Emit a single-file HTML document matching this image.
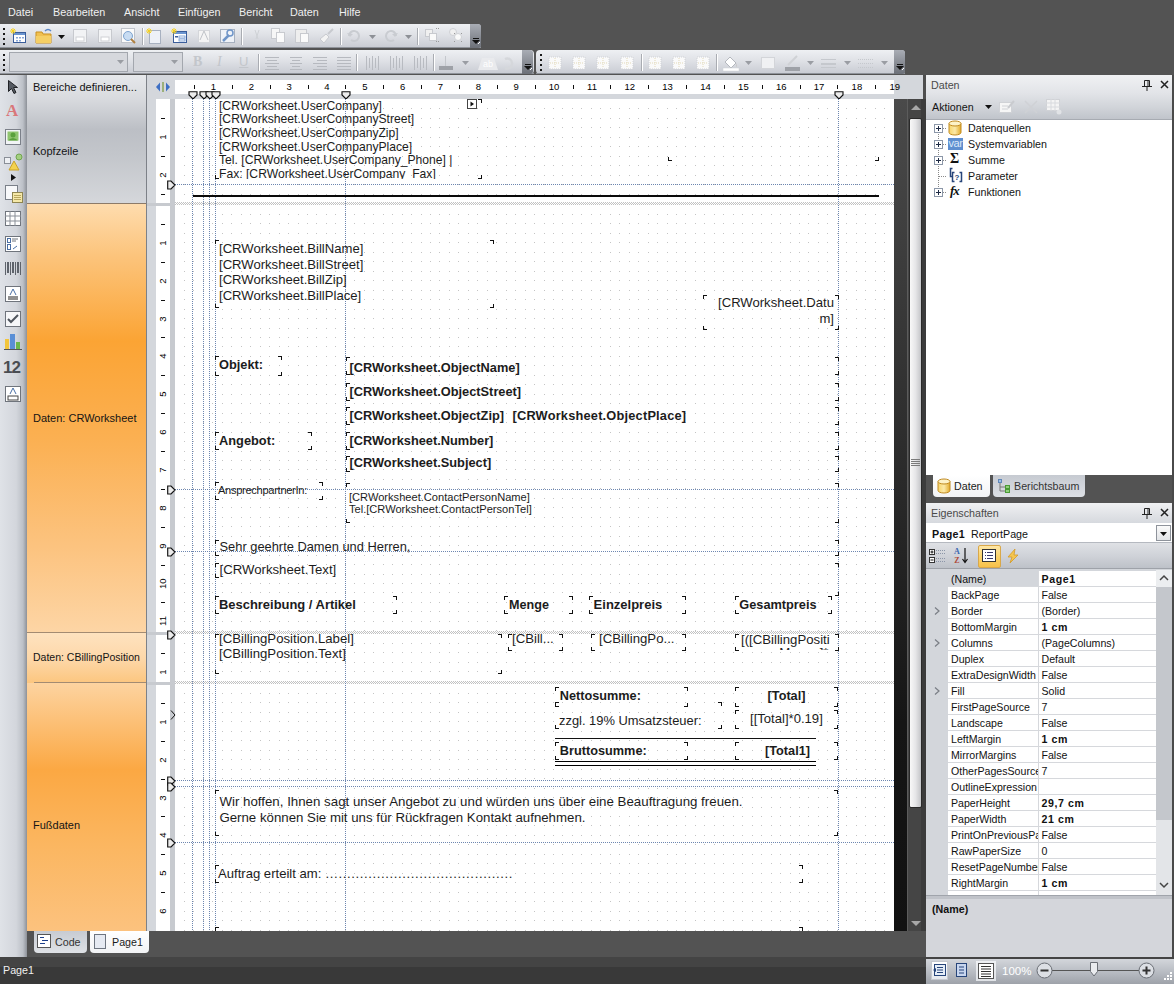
<!DOCTYPE html>
<html><head><meta charset="utf-8">
<style>
*{margin:0;padding:0;box-sizing:border-box}
html,body{width:1174px;height:984px;overflow:hidden;background:#535353;font-family:"Liberation Sans",sans-serif;font-size:12px;color:#000}
.a{position:absolute}
.t{position:absolute;white-space:nowrap}
.tb{background:linear-gradient(#f0f1f4,#e1e3e7 40%,#d3d6dc 70%,#c4c7ce);border-bottom:1px solid #8e9298}
.vg{position:absolute;width:1px;background:repeating-linear-gradient(#6d86b0 0 1px,transparent 1px 2px)}
.hg{position:absolute;height:1px;background:repeating-linear-gradient(90deg,#6d86b0 0 1px,transparent 1px 2px)}
.sep{position:absolute;height:3px;background-image:repeating-linear-gradient(90deg,#bdbdbd 0 1px,#fff 1px 2px);}
.cm{position:absolute;width:4px;height:4px;border-color:#111;border-style:solid;border-width:0}
.grid{background-color:#fff;background-image:radial-gradient(circle at 0.5px 0.5px,#c6c6c6 0.7px,transparent 0.8px)}
svg{position:absolute;overflow:visible}
</style></head><body>

<div class="a" style="left:0px;top:0px;width:1174px;height:24px;background:#535353"></div>
<div class="t" style="left:8px;top:2px;height:20px;line-height:20px;font-size:10.8px;color:#f0f0f0;">Datei</div>
<div class="t" style="left:53px;top:2px;height:20px;line-height:20px;font-size:10.8px;color:#f0f0f0;">Bearbeiten</div>
<div class="t" style="left:124px;top:2px;height:20px;line-height:20px;font-size:10.8px;color:#f0f0f0;">Ansicht</div>
<div class="t" style="left:178px;top:2px;height:20px;line-height:20px;font-size:10.8px;color:#f0f0f0;">Einfügen</div>
<div class="t" style="left:239px;top:2px;height:20px;line-height:20px;font-size:10.8px;color:#f0f0f0;">Bericht</div>
<div class="t" style="left:290px;top:2px;height:20px;line-height:20px;font-size:10.8px;color:#f0f0f0;">Daten</div>
<div class="t" style="left:339px;top:2px;height:20px;line-height:20px;font-size:10.8px;color:#f0f0f0;">Hilfe</div>
<div class="a" style="left:0px;top:24px;width:481px;height:24px;background:linear-gradient(#eef0f3,#dfe1e6 45%,#c8cbd2);border-radius:0 4px 4px 0"></div>
<div class="a" style="left:0px;top:47px;width:481px;height:1px;background:#8f939a"></div>
<div class="a" style="left:3px;top:28px;width:2px;height:2px;background:#1a1a1a"></div>
<div class="a" style="left:3px;top:33px;width:2px;height:2px;background:#1a1a1a"></div>
<div class="a" style="left:3px;top:38px;width:2px;height:2px;background:#1a1a1a"></div>
<div class="a" style="left:3px;top:43px;width:2px;height:2px;background:#1a1a1a"></div>
<div class="a" style="left:470px;top:24px;width:11px;height:24px;background:linear-gradient(#a9adb5,#6c7078);border-radius:0 3px 3px 0"></div>
<svg style="left:472px;top:38px" width="8" height="7"><rect x="1" y="0" width="6" height="1" fill="#111"/><path d="M0 2h8l-4 4z" fill="#111"/><path d="M6 6l2-2" stroke="#fff" stroke-width="1"/></svg>
<svg style="left:10px;top:28px" width="18" height="16"><rect x="3.5" y="4.5" width="12" height="10" fill="#fff" stroke="#3a5d9a"/><rect x="4" y="5" width="11" height="2" fill="#6b95d0"/><g fill="#8aa8d8"><rect x="6" y="9" width="2" height="1.5"/><rect x="9" y="9" width="2" height="1.5"/><rect x="12" y="9" width="2" height="1.5"/><rect x="6" y="12" width="2" height="1.5"/><rect x="9" y="12" width="2" height="1.5"/></g><path d="M3 0v6M0 3h6M1 1l4 4M5 1l-4 4" stroke="#f4d020" stroke-width="1"/></svg>
<svg style="left:35px;top:28px" width="18" height="16"><path d="M1 4h6l1 2h8v9H1z" fill="#f0c050" stroke="#c99020"/><path d="M1 8h15v7H1z" fill="#f5cf65"/><path d="M10 3q3-3 6 0" stroke="#5a86c5" fill="none" stroke-width="1.5"/></svg>
<svg style="left:58px;top:35px" width="7" height="4"><path d="M0 0h7l-3.5 4z" fill="#111"/></svg>
<svg style="left:72px;top:28px" width="16" height="16"><rect x="1.5" y="1.5" width="13" height="13" fill="#f2f3f5" stroke="#c7c9ce"/><rect x="4" y="9" width="8" height="4" fill="#fff" stroke="#cfd1d5"/></svg>
<svg style="left:97px;top:28px" width="16" height="16"><rect x="1.5" y="1.5" width="13" height="13" fill="#f2f3f5" stroke="#c7c9ce"/><rect x="4" y="9" width="8" height="4" fill="#fff" stroke="#cfd1d5"/></svg>
<svg style="left:120px;top:28px" width="18" height="17"><rect x="1.5" y="0.5" width="13" height="14" fill="#fafafa" stroke="#bfc3ca"/><circle cx="8" cy="8" r="4.5" fill="#c8dcf2" stroke="#7ea3cf"/><path d="M11 11l4 4" stroke="#b08040" stroke-width="2"/></svg>
<div class="a" style="left:142px;top:28px;width:1px;height:17px;background:#fff;border-left:1px solid #a9acb2;width:2px"></div>
<svg style="left:146px;top:28px" width="17" height="16"><rect x="3.5" y="2.5" width="11" height="13" fill="#eef1f7" stroke="#a8b1c0"/><path d="M3 0v6M0 3h6M1 1l4 4M5 1l-4 4" stroke="#f4d020" stroke-width="1"/></svg>
<svg style="left:171px;top:28px" width="17" height="16"><rect x="2.5" y="3.5" width="13" height="11" fill="#fff" stroke="#3a5d9a"/><rect x="3" y="4" width="12" height="2" fill="#6b95d0"/><rect x="8" y="8" width="6" height="2" fill="#fff" stroke="#6b95d0" stroke-width=".8"/><rect x="8" y="11" width="6" height="2" fill="#fff" stroke="#6b95d0" stroke-width=".8"/><rect x="4" y="8" width="3" height="1.5" fill="#3a5d9a"/><path d="M3 0v6M0 3h6M1 1l4 4M5 1l-4 4" stroke="#f4d020" stroke-width="1"/></svg>
<svg style="left:196px;top:28px" width="16" height="16"><rect x="2.5" y="2.5" width="11" height="12" fill="#f4f4f4" stroke="#d4d6da"/><path d="M4 12l4-9 4 9" stroke="#c0c3c8" fill="none"/></svg>
<svg style="left:219px;top:28px" width="17" height="16"><rect x="1.5" y="1.5" width="14" height="13" fill="#eef2f8" stroke="#a6b0bf"/><path d="M4 13l6-6" stroke="#6f95c8" stroke-width="2.5"/><circle cx="11" cy="5" r="3" fill="none" stroke="#6f95c8" stroke-width="1.5"/></svg>
<div class="a" style="left:241px;top:28px;width:2px;height:17px;background:#fff;border-left:1px solid #a9acb2"></div>
<svg style="left:250px;top:28px" width="14" height="16"><path d="M5 2l3 9M9 2l-3 9" stroke="#cfd2d6" stroke-width="1"/></svg>
<svg style="left:270px;top:27px" width="17" height="17"><rect x="1.5" y="1.5" width="8" height="10" fill="#f6f6f6" stroke="#c8cacf"/><rect x="6.5" y="5.5" width="8" height="10" fill="#fbfbfb" stroke="#c8cacf"/></svg>
<svg style="left:294px;top:27px" width="17" height="17"><rect x="1.5" y="2.5" width="11" height="13" fill="#eeeeee" stroke="#c8cacf"/><rect x="6.5" y="6.5" width="8" height="9" fill="#fbfbfb" stroke="#c8cacf"/></svg>
<svg style="left:318px;top:27px" width="17" height="17"><path d="M2 12l6-5 3 3-5 6z" fill="#f3f3f3" stroke="#c8cacf"/><path d="M10 7l5-5" stroke="#c8cacf" stroke-width="2"/></svg>
<div class="a" style="left:340px;top:28px;width:2px;height:17px;background:#fff;border-left:1px solid #a9acb2"></div>
<svg style="left:346px;top:28px" width="16" height="16"><path d="M3 8a5 5 0 1 1 2 4" stroke="#c9ccd1" stroke-width="2" fill="none"/><path d="M1 5l3 4 3-3z" fill="#c9ccd1"/></svg>
<svg style="left:369px;top:35px" width="7" height="4"><path d="M0 0h7l-3.5 4z" fill="#8d9096"/></svg>
<svg style="left:383px;top:28px" width="16" height="16"><path d="M13 8a5 5 0 1 0-2 4" stroke="#c9ccd1" stroke-width="2" fill="none"/><path d="M15 5l-3 4-3-3z" fill="#c9ccd1"/></svg>
<svg style="left:405px;top:35px" width="7" height="4"><path d="M0 0h7l-3.5 4z" fill="#8d9096"/></svg>
<div class="a" style="left:417px;top:28px;width:2px;height:17px;background:#fff;border-left:1px solid #a9acb2"></div>
<svg style="left:424px;top:27px" width="16" height="17"><rect x="1.5" y="2.5" width="7" height="7" fill="#f0f0f0" stroke="#c8cacf"/><rect x="5.5" y="6.5" width="7" height="7" fill="#fafafa" stroke="#c8cacf"/><g fill="#999"><rect x="12" y="1" width="1" height="1"/><rect x="14" y="1" width="1" height="1"/><rect x="12" y="14" width="1" height="1"/><rect x="14" y="14" width="1" height="1"/></g></svg>
<svg style="left:448px;top:27px" width="16" height="17"><circle cx="5" cy="5" r="3.5" fill="#f0f0f0" stroke="#cfd1d5"/><circle cx="10" cy="10" r="3.5" fill="#fafafa" stroke="#cfd1d5"/><g fill="#999"><rect x="6" y="6" width="1" height="1"/><rect x="13" y="6" width="1" height="1"/><rect x="6" y="14" width="1" height="1"/><rect x="13" y="14" width="1" height="1"/></g></svg>
<div class="a" style="left:0px;top:50px;width:534px;height:24px;background:linear-gradient(#eef0f3,#dfe1e6 45%,#c8cbd2);border-radius:0 4px 4px 0"></div>
<div class="a" style="left:0px;top:73px;width:534px;height:1px;background:#8f939a"></div>
<div class="a" style="left:3px;top:54px;width:2px;height:2px;background:#1a1a1a"></div>
<div class="a" style="left:3px;top:59px;width:2px;height:2px;background:#1a1a1a"></div>
<div class="a" style="left:3px;top:64px;width:2px;height:2px;background:#1a1a1a"></div>
<div class="a" style="left:3px;top:69px;width:2px;height:2px;background:#1a1a1a"></div>
<div class="a" style="left:522px;top:50px;width:11px;height:24px;background:linear-gradient(#a9adb5,#6c7078);border-radius:0 3px 3px 0"></div>
<svg style="left:524px;top:64px" width="8" height="7"><rect x="1" y="0" width="6" height="1" fill="#111"/><path d="M0 2h8l-4 4z" fill="#111"/><path d="M6 6l2-2" stroke="#fff" stroke-width="1"/></svg>
<div class="a" style="left:9px;top:52px;width:119px;height:20px;background:#d6d8dd;border:1px solid #a3a7ae"></div>
<svg style="left:117px;top:60px" width="7" height="4"><path d="M0 0h7l-3.5 4z" fill="#9a9da3"/></svg>
<div class="a" style="left:133px;top:52px;width:50px;height:20px;background:#d6d8dd;border:1px solid #a3a7ae"></div>
<svg style="left:171px;top:60px" width="7" height="4"><path d="M0 0h7l-3.5 4z" fill="#9a9da3"/></svg>
<div class="t" style="left:193px;top:53px;font-size:14px;color:#c3c6cb;font-weight:bold;font-family:Liberation Serif,serif;line-height:18px">B</div>
<div class="t" style="left:217px;top:53px;font-size:14px;color:#c3c6cb;font-family:Liberation Serif,serif;font-style:italic;line-height:18px">I</div>
<div class="t" style="left:239px;top:53px;font-size:13px;color:#c3c6cb;text-decoration:underline;line-height:18px">U</div>
<div class="a" style="left:258px;top:54px;width:2px;height:17px;background:#fff;border-left:1px solid #a9acb2"></div>
<svg style="left:264px;top:55px" width="16" height="16"><rect x="1" y="2" width="14" height="1" fill="#b6b9bf"/><rect x="3" y="5" width="10" height="1" fill="#b6b9bf"/><rect x="1" y="8" width="14" height="1" fill="#b6b9bf"/><rect x="3" y="11" width="10" height="1" fill="#b6b9bf"/><rect x="1" y="14" width="14" height="1" fill="#b6b9bf"/></svg>
<svg style="left:288px;top:55px" width="16" height="16"><rect x="2" y="2" width="12" height="1" fill="#b6b9bf"/><rect x="4" y="5" width="8" height="1" fill="#b6b9bf"/><rect x="2" y="8" width="12" height="1" fill="#b6b9bf"/><rect x="4" y="11" width="8" height="1" fill="#b6b9bf"/><rect x="2" y="14" width="12" height="1" fill="#b6b9bf"/></svg>
<svg style="left:312px;top:55px" width="16" height="16"><rect x="1" y="2" width="14" height="1" fill="#b6b9bf"/><rect x="5" y="5" width="10" height="1" fill="#b6b9bf"/><rect x="1" y="8" width="14" height="1" fill="#b6b9bf"/><rect x="5" y="11" width="10" height="1" fill="#b6b9bf"/><rect x="1" y="14" width="14" height="1" fill="#b6b9bf"/></svg>
<svg style="left:336px;top:55px" width="16" height="16"><rect x="1" y="2" width="14" height="1" fill="#b6b9bf"/><rect x="1" y="5" width="14" height="1" fill="#b6b9bf"/><rect x="1" y="8" width="14" height="1" fill="#b6b9bf"/><rect x="1" y="11" width="14" height="1" fill="#b6b9bf"/><rect x="1" y="14" width="14" height="1" fill="#b6b9bf"/></svg>
<div class="a" style="left:356px;top:54px;width:2px;height:17px;background:#fff;border-left:1px solid #a9acb2"></div>
<svg style="left:364px;top:55px" width="16" height="16"><g fill="#b8bbc1"><rect x="2" y="1" width="1" height="14"/><rect x="5" y="3" width="1" height="10"/><rect x="8" y="1" width="1" height="14"/><rect x="11" y="3" width="1" height="10"/><rect x="14" y="1" width="1" height="14"/></g></svg>
<svg style="left:388px;top:55px" width="16" height="16"><g fill="#b8bbc1"><rect x="2" y="1" width="1" height="14"/><rect x="5" y="3" width="1" height="10"/><rect x="8" y="1" width="1" height="14"/><rect x="11" y="3" width="1" height="10"/><rect x="14" y="1" width="1" height="14"/></g></svg>
<svg style="left:412px;top:55px" width="16" height="16"><g fill="#b8bbc1"><rect x="2" y="1" width="1" height="14"/><rect x="5" y="3" width="1" height="10"/><rect x="8" y="1" width="1" height="14"/><rect x="11" y="3" width="1" height="10"/><rect x="14" y="1" width="1" height="14"/></g></svg>
<div class="a" style="left:433px;top:54px;width:2px;height:17px;background:#fff;border-left:1px solid #a9acb2"></div>
<svg style="left:438px;top:55px" width="18" height="16"><rect x="7" y="1" width="1" height="10" fill="#c4c7cc"/><rect x="1" y="11" width="14" height="4" fill="#9ea1a7"/></svg>
<svg style="left:462px;top:61px" width="7" height="4"><path d="M0 0h7l-3.5 4z" fill="#9a9da3"/></svg>
<svg style="left:478px;top:55px" width="20" height="16"><path d="M0 15l4-12h12l4 12z" fill="#e9eaed"/><text x="10" y="12" font-size="9" text-anchor="middle" fill="#fff" font-family="Liberation Sans">ab</text></svg>
<svg style="left:500px;top:55px" width="16" height="16"><path d="M5 4a5 5 0 1 1 0 9" stroke="#d5d7db" stroke-width="2.5" fill="none"/></svg>
<div class="a" style="left:536px;top:50px;width:369px;height:24px;background:linear-gradient(#eef0f3,#dfe1e6 45%,#c8cbd2);border-radius:4px"></div>
<div class="a" style="left:536px;top:73px;width:369px;height:1px;background:#8f939a"></div>
<div class="a" style="left:540px;top:54px;width:2px;height:2px;background:#1a1a1a"></div>
<div class="a" style="left:540px;top:59px;width:2px;height:2px;background:#1a1a1a"></div>
<div class="a" style="left:540px;top:64px;width:2px;height:2px;background:#1a1a1a"></div>
<div class="a" style="left:540px;top:69px;width:2px;height:2px;background:#1a1a1a"></div>
<div class="a" style="left:894px;top:50px;width:11px;height:24px;background:linear-gradient(#a9adb5,#6c7078);border-radius:0 3px 3px 0"></div>
<svg style="left:896px;top:64px" width="8" height="7"><rect x="1" y="0" width="6" height="1" fill="#111"/><path d="M0 2h8l-4 4z" fill="#111"/><path d="M6 6l2-2" stroke="#fff" stroke-width="1"/></svg>
<svg style="left:547px;top:55px" width="16" height="16"><rect x="2" y="2" width="12" height="12" fill="#fafafa" stroke="#d0d2d6" stroke-dasharray="1 1"/><path d="M8 3v10M3 8h10" stroke="#e2d9b8" stroke-dasharray="1 1"/></svg>
<svg style="left:571px;top:55px" width="16" height="16"><rect x="2" y="2" width="12" height="12" fill="#fafafa" stroke="#d0d2d6" stroke-dasharray="1 1"/><path d="M8 3v10M3 8h10" stroke="#e2d9b8" stroke-dasharray="1 1"/></svg>
<svg style="left:595px;top:55px" width="16" height="16"><rect x="2" y="2" width="12" height="12" fill="#fafafa" stroke="#d0d2d6" stroke-dasharray="1 1"/><path d="M8 3v10M3 8h10" stroke="#e2d9b8" stroke-dasharray="1 1"/></svg>
<svg style="left:619px;top:55px" width="16" height="16"><rect x="2" y="2" width="12" height="12" fill="#fafafa" stroke="#d0d2d6" stroke-dasharray="1 1"/><path d="M8 3v10M3 8h10" stroke="#e2d9b8" stroke-dasharray="1 1"/></svg>
<div class="a" style="left:641px;top:54px;width:2px;height:17px;background:#fff;border-left:1px solid #a9acb2"></div>
<svg style="left:647px;top:55px" width="16" height="16"><rect x="2" y="2" width="12" height="12" fill="#fafafa" stroke="#d0d2d6" stroke-dasharray="1 1"/><path d="M8 3v10M3 8h10" stroke="#e2d9b8" stroke-dasharray="1 1"/></svg>
<svg style="left:671px;top:55px" width="16" height="16"><rect x="2" y="2" width="12" height="12" fill="#fafafa" stroke="#d0d2d6" stroke-dasharray="1 1"/><path d="M8 3v10M3 8h10" stroke="#e2d9b8" stroke-dasharray="1 1"/></svg>
<svg style="left:695px;top:55px" width="16" height="16"><rect x="2" y="2" width="12" height="12" fill="#fafafa" stroke="#d0d2d6" stroke-dasharray="1 1"/><path d="M8 3v10M3 8h10" stroke="#e2d9b8" stroke-dasharray="1 1"/></svg>
<div class="a" style="left:716px;top:54px;width:2px;height:17px;background:#fff;border-left:1px solid #a9acb2"></div>
<svg style="left:722px;top:54px" width="18" height="17"><path d="M3 8l5-5 6 6-5 5z" fill="#fff" stroke="#b4b7bd"/><path d="M14 9q2 3 0 4" fill="#c8c8c8"/><rect x="1" y="14" width="16" height="3" fill="#fff" stroke="#d0d2d6" stroke-width=".5"/></svg>
<svg style="left:745px;top:61px" width="7" height="4"><path d="M0 0h7l-3.5 4z" fill="#9a9da3"/></svg>
<svg style="left:760px;top:55px" width="16" height="16"><rect x="1.5" y="2.5" width="13" height="11" fill="#f0f1f3" stroke="#d3d5d9"/></svg>
<svg style="left:784px;top:54px" width="18" height="17"><path d="M4 11l9-9" stroke="#cfd1d5" stroke-width="2"/><rect x="1" y="13" width="15" height="4" fill="#9ea1a7"/></svg>
<svg style="left:807px;top:61px" width="7" height="4"><path d="M0 0h7l-3.5 4z" fill="#9a9da3"/></svg>
<svg style="left:820px;top:55px" width="17" height="16"><rect x="1" y="4" width="15" height="1" fill="#c5c8cd"/><rect x="1" y="8" width="15" height="2" fill="#c5c8cd"/><rect x="1" y="12" width="15" height="1" fill="#c5c8cd"/></svg>
<svg style="left:844px;top:61px" width="7" height="4"><path d="M0 0h7l-3.5 4z" fill="#9a9da3"/></svg>
<svg style="left:857px;top:55px" width="17" height="16"><g stroke="#c5c8cd" stroke-dasharray="1 1"><path d="M1 4.5h15M1 8.5h15M1 12.5h15"/></g></svg>
<svg style="left:881px;top:61px" width="7" height="4"><path d="M0 0h7l-3.5 4z" fill="#9a9da3"/></svg>
<div class="a" style="left:0px;top:75px;width:27px;height:882px;background:linear-gradient(90deg,#dfe2e7,#d3d6dc 60%,#bcc0c7 85%,#8d9198)"></div>
<svg style="left:7px;top:79px" width="14" height="16"><path d="M1.5 1.5v11l3-3 2.5 5 2-1-2.5-5h4z" fill="#555a62" stroke="#202226"/></svg>
<div class="t" style="left:6px;top:102px;font-size:17px;color:#d9777a;font-weight:bold;font-family:Liberation Serif,serif;line-height:18px">A</div>
<svg style="left:5px;top:129px" width="16" height="16"><rect x="0.5" y="0.5" width="15" height="15" fill="#f2f4f6" stroke="#7b8089"/><rect x="2.5" y="2.5" width="11" height="9" fill="#8fc46f"/><circle cx="8" cy="6" r="2.5" fill="#5aa03c"/><path d="M3 11.5q5-5 10 0" fill="#5aa03c"/></svg>
<svg style="left:4px;top:153px" width="20" height="18"><rect x="0.5" y="4.5" width="6" height="6" fill="#eef0f3" stroke="#8a8f97"/><circle cx="15" cy="4" r="3" fill="#a3d080" stroke="#72a450"/><path d="M5 17l5-9 5 9z" fill="#f4d24e" stroke="#c9a229"/></svg>
<svg style="left:11px;top:174px" width="5" height="7"><path d="M0 0l5 3.5L0 7z" fill="#111"/></svg>
<svg style="left:5px;top:185px" width="18" height="18"><rect x="0.5" y="0.5" width="12" height="14" fill="#f7f8fa" stroke="#7a8089"/><rect x="7.5" y="7.5" width="10" height="10" fill="#f5e8a8" stroke="#8f8550"/><path d="M9 10.5h7M9 12.5h7M9 14.5h7" stroke="#b9a860"/></svg>
<svg style="left:5px;top:211px" width="16" height="15"><rect x="0.5" y="0.5" width="15" height="14" fill="#fff" stroke="#6f747c"/><path d="M0 5h16M0 10h16M5 0v15M10 0v15" stroke="#8a8f97"/></svg>
<svg style="left:5px;top:236px" width="16" height="16"><rect x="0.5" y="0.5" width="15" height="15" fill="#fff" stroke="#6f747c"/><rect x="2.5" y="2.5" width="3" height="4" fill="none" stroke="#4a6fa5"/><path d="M7 3h6M7 5h4" stroke="#6f747c"/><rect x="2.5" y="8.5" width="3" height="5" fill="none" stroke="#4a6fa5"/><path d="M8 13l4-3" stroke="#4a6fa5"/></svg>
<svg style="left:4px;top:261px" width="18" height="15"><g fill="#5e636b"><rect x="1" y="1" width="1" height="13"/><rect x="3" y="1" width="2" height="11"/><rect x="6" y="1" width="1" height="13"/><rect x="8" y="1" width="2" height="11"/><rect x="11" y="1" width="1" height="13"/><rect x="13" y="1" width="2" height="11"/><rect x="16" y="1" width="1" height="13"/></g></svg>
<svg style="left:5px;top:286px" width="16" height="16"><rect x="0.5" y="0.5" width="15" height="15" fill="#fff" stroke="#6f747c"/><path d="M5 9l3-6 3 6" stroke="#4a6fa5" fill="none"/><path d="M3 11h10M3 13h10" stroke="#222"/></svg>
<svg style="left:5px;top:311px" width="16" height="16"><rect x="0.5" y="0.5" width="15" height="15" fill="#f6f7f9" stroke="#6f747c"/><path d="M3 8l3 3 7-7" stroke="#4f555d" stroke-width="2" fill="none"/></svg>
<svg style="left:4px;top:333px" width="18" height="17"><rect x="1" y="6" width="4" height="10" fill="#f2c53c"/><rect x="6" y="1" width="5" height="15" fill="#5a8fd6"/><rect x="12" y="9" width="4" height="7" fill="#6bb84a"/><rect x="0" y="16" width="18" height="1" fill="#555"/></svg>
<div class="t" style="left:3px;top:358px;font-size:17px;color:#4a4d52;font-weight:bold;line-height:20px;letter-spacing:-1px">12</div>
<svg style="left:5px;top:386px" width="16" height="16"><rect x="0.5" y="0.5" width="15" height="15" fill="#fff" stroke="#6f747c"/><path d="M5 8l3-6 3 6" stroke="#4a6fa5" fill="none"/><rect x="3" y="10" width="10" height="4" fill="none" stroke="#444"/></svg>
<div class="a" style="left:27px;top:75px;width:120px;height:856px;background:#d8dbe0"></div>
<div class="a" style="left:27px;top:75px;width:120px;height:23px;background:linear-gradient(#e6e8eb,#d9dbdf)"></div>
<div class="t" style="left:33px;top:77px;height:20px;line-height:20px;font-size:11px;color:#141414;">Bereiche definieren...</div>
<div class="a" style="left:27px;top:98px;width:119px;height:105px;background:linear-gradient(#d9dbdf,#bcbfc5 30%,#c3c6cb 55%,#d5d7db)"></div>
<div class="a" style="left:27px;top:203px;width:119px;height:1px;background:#8c7a68"></div>
<div class="t" style="left:33px;top:141px;height:20px;line-height:20px;font-size:11px;color:#141414;">Kopfzeile</div>
<div class="a" style="left:27px;top:204px;width:119px;height:428px;background:linear-gradient(#fedcae,#fcc47c 12%,#fba434 32%,#fbb052 55%,#fcc37f 80%,#fdd5a5)"></div>
<div class="a" style="left:27px;top:632px;width:119px;height:1px;background:#a38b72"></div>
<div class="t" style="left:33px;top:408px;height:20px;line-height:20px;font-size:11px;color:#141414;">Daten: CRWorksheet</div>
<div class="a" style="left:27px;top:633px;width:119px;height:50px;background:linear-gradient(#fee2bf,#fdd8aa 50%,#fcc67f)"></div>
<div class="t" style="left:33px;top:647px;height:20px;line-height:20px;font-size:10.5px;color:#141414;">Daten: CBillingPosition</div>
<div class="a" style="left:34px;top:682px;width:112px;height:1px;background:#a38b72"></div>
<div class="a" style="left:27px;top:683px;width:119px;height:248px;background:linear-gradient(#fdd3a0,#fba843 35%,#fbb660 65%,#fcc27e)"></div>
<div class="t" style="left:33px;top:815px;height:20px;line-height:20px;font-size:11px;color:#141414;">Fußdaten</div>
<div class="a" style="left:146px;top:75px;width:1px;height:856px;background:#7d8188"></div>
<div class="a" style="left:147px;top:75px;width:779px;height:24px;background:#d4d7dc"></div>
<div class="a" style="left:147px;top:99px;width:28px;height:832px;background:#d4d7dc"></div>
<div class="a" style="left:175px;top:80px;width:719px;height:14px;background:#fff"></div>
<svg style="left:155px;top:81px" width="16" height="12"><path d="M5 1.5L1 6l4 4.5z" fill="#3d6fc4"/><rect x="7" y="1" width="2" height="10" fill="#9cb07a"/><path d="M11 1.5L15 6l-4 4.5z" fill="#3d6fc4"/></svg>
<div class="a" style="left:894px;top:75px;width:29px;height:24px;background:#d4d7dc"></div>
<div class="a" style="left:923px;top:75px;width:3px;height:882px;background:#4e4e4e"></div>
<div class="a" style="left:156px;top:99px;width:14px;height:832px;background:#fff"></div>
<div class="a" style="left:170px;top:99px;width:5px;height:832px;background:#c7cacf"></div>
<div class="a" style="left:194px;top:85px;width:1px;height:4px;background:#111"></div>
<div class="t" style="left:203.4px;top:82px;width:20px;text-align:center;font-size:9.5px;line-height:10px;color:#000">1</div>
<div class="a" style="left:232px;top:85px;width:1px;height:4px;background:#111"></div>
<div class="t" style="left:241.3px;top:82px;width:20px;text-align:center;font-size:9.5px;line-height:10px;color:#000">2</div>
<div class="a" style="left:270px;top:85px;width:1px;height:4px;background:#111"></div>
<div class="t" style="left:279.1px;top:82px;width:20px;text-align:center;font-size:9.5px;line-height:10px;color:#000">3</div>
<div class="a" style="left:308px;top:85px;width:1px;height:4px;background:#111"></div>
<div class="t" style="left:317.0px;top:82px;width:20px;text-align:center;font-size:9.5px;line-height:10px;color:#000">4</div>
<div class="a" style="left:345px;top:85px;width:1px;height:4px;background:#111"></div>
<div class="t" style="left:354.9px;top:82px;width:20px;text-align:center;font-size:9.5px;line-height:10px;color:#000">5</div>
<div class="a" style="left:383px;top:85px;width:1px;height:4px;background:#111"></div>
<div class="t" style="left:392.7px;top:82px;width:20px;text-align:center;font-size:9.5px;line-height:10px;color:#000">6</div>
<div class="a" style="left:421px;top:85px;width:1px;height:4px;background:#111"></div>
<div class="t" style="left:430.5px;top:82px;width:20px;text-align:center;font-size:9.5px;line-height:10px;color:#000">7</div>
<div class="a" style="left:459px;top:85px;width:1px;height:4px;background:#111"></div>
<div class="t" style="left:468.4px;top:82px;width:20px;text-align:center;font-size:9.5px;line-height:10px;color:#000">8</div>
<div class="a" style="left:497px;top:85px;width:1px;height:4px;background:#111"></div>
<div class="t" style="left:506.2px;top:82px;width:20px;text-align:center;font-size:9.5px;line-height:10px;color:#000">9</div>
<div class="a" style="left:535px;top:85px;width:1px;height:4px;background:#111"></div>
<div class="t" style="left:544.1px;top:82px;width:20px;text-align:center;font-size:9.5px;line-height:10px;color:#000">10</div>
<div class="a" style="left:573px;top:85px;width:1px;height:4px;background:#111"></div>
<div class="t" style="left:582.0px;top:82px;width:20px;text-align:center;font-size:9.5px;line-height:10px;color:#000">11</div>
<div class="a" style="left:610px;top:85px;width:1px;height:4px;background:#111"></div>
<div class="t" style="left:619.8px;top:82px;width:20px;text-align:center;font-size:9.5px;line-height:10px;color:#000">12</div>
<div class="a" style="left:648px;top:85px;width:1px;height:4px;background:#111"></div>
<div class="t" style="left:657.6px;top:82px;width:20px;text-align:center;font-size:9.5px;line-height:10px;color:#000">13</div>
<div class="a" style="left:686px;top:85px;width:1px;height:4px;background:#111"></div>
<div class="t" style="left:695.5px;top:82px;width:20px;text-align:center;font-size:9.5px;line-height:10px;color:#000">14</div>
<div class="a" style="left:724px;top:85px;width:1px;height:4px;background:#111"></div>
<div class="t" style="left:733.4px;top:82px;width:20px;text-align:center;font-size:9.5px;line-height:10px;color:#000">15</div>
<div class="a" style="left:762px;top:85px;width:1px;height:4px;background:#111"></div>
<div class="t" style="left:771.2px;top:82px;width:20px;text-align:center;font-size:9.5px;line-height:10px;color:#000">16</div>
<div class="a" style="left:800px;top:85px;width:1px;height:4px;background:#111"></div>
<div class="t" style="left:809.1px;top:82px;width:20px;text-align:center;font-size:9.5px;line-height:10px;color:#000">17</div>
<div class="a" style="left:837px;top:85px;width:1px;height:4px;background:#111"></div>
<div class="t" style="left:846.9px;top:82px;width:20px;text-align:center;font-size:9.5px;line-height:10px;color:#000">18</div>
<div class="a" style="left:875px;top:85px;width:1px;height:4px;background:#111"></div>
<div class="t" style="left:884.8px;top:82px;width:20px;text-align:center;font-size:9.5px;line-height:10px;color:#000">19</div>
<svg style="left:187.5px;top:91px" width="10" height="9"><path d="M1 0.7h8v3.3L5 8 1 4z" fill="#ececec" stroke="#111" stroke-width="1.15" stroke-linejoin="miter"/></svg>
<svg style="left:198.5px;top:91px" width="10" height="9"><path d="M1 0.7h8v3.3L5 8 1 4z" fill="#ececec" stroke="#111" stroke-width="1.15" stroke-linejoin="miter"/></svg>
<svg style="left:204.5px;top:91px" width="10" height="9"><path d="M1 0.7h8v3.3L5 8 1 4z" fill="#ececec" stroke="#111" stroke-width="1.15" stroke-linejoin="miter"/></svg>
<svg style="left:210.5px;top:91px" width="10" height="9"><path d="M1 0.7h8v3.3L5 8 1 4z" fill="#ececec" stroke="#111" stroke-width="1.15" stroke-linejoin="miter"/></svg>
<svg style="left:340.5px;top:91px" width="10" height="9"><path d="M1 0.7h8v3.3L5 8 1 4z" fill="#ececec" stroke="#111" stroke-width="1.15" stroke-linejoin="miter"/></svg>
<svg style="left:833.5px;top:91px" width="10" height="9"><path d="M1 0.7h8v3.3L5 8 1 4z" fill="#ececec" stroke="#111" stroke-width="1.15" stroke-linejoin="miter"/></svg>
<div class="a" style="left:161px;top:118px;width:4px;height:1px;background:#111"></div>
<div class="t" style="left:158px;top:131.8px;width:10px;height:10px;line-height:10px;text-align:center;font-size:9.5px;color:#000;transform:rotate(-90deg)">1</div>
<div class="a" style="left:161px;top:156px;width:4px;height:1px;background:#111"></div>
<div class="t" style="left:158px;top:169.7px;width:10px;height:10px;line-height:10px;text-align:center;font-size:9.5px;color:#000;transform:rotate(-90deg)">2</div>
<div class="a" style="left:161px;top:194px;width:4px;height:1px;background:#111"></div>
<div class="a" style="left:161px;top:224px;width:4px;height:1px;background:#111"></div>
<div class="t" style="left:158px;top:237.8px;width:10px;height:10px;line-height:10px;text-align:center;font-size:9.5px;color:#000;transform:rotate(-90deg)">1</div>
<div class="a" style="left:161px;top:262px;width:4px;height:1px;background:#111"></div>
<div class="t" style="left:158px;top:275.7px;width:10px;height:10px;line-height:10px;text-align:center;font-size:9.5px;color:#000;transform:rotate(-90deg)">2</div>
<div class="a" style="left:161px;top:300px;width:4px;height:1px;background:#111"></div>
<div class="t" style="left:158px;top:313.6px;width:10px;height:10px;line-height:10px;text-align:center;font-size:9.5px;color:#000;transform:rotate(-90deg)">3</div>
<div class="a" style="left:161px;top:337px;width:4px;height:1px;background:#111"></div>
<div class="t" style="left:158px;top:351.4px;width:10px;height:10px;line-height:10px;text-align:center;font-size:9.5px;color:#000;transform:rotate(-90deg)">4</div>
<div class="a" style="left:161px;top:375px;width:4px;height:1px;background:#111"></div>
<div class="t" style="left:158px;top:389.2px;width:10px;height:10px;line-height:10px;text-align:center;font-size:9.5px;color:#000;transform:rotate(-90deg)">5</div>
<div class="a" style="left:161px;top:413px;width:4px;height:1px;background:#111"></div>
<div class="t" style="left:158px;top:427.1px;width:10px;height:10px;line-height:10px;text-align:center;font-size:9.5px;color:#000;transform:rotate(-90deg)">6</div>
<div class="a" style="left:161px;top:451px;width:4px;height:1px;background:#111"></div>
<div class="t" style="left:158px;top:464.9px;width:10px;height:10px;line-height:10px;text-align:center;font-size:9.5px;color:#000;transform:rotate(-90deg)">7</div>
<div class="a" style="left:161px;top:489px;width:4px;height:1px;background:#111"></div>
<div class="t" style="left:158px;top:502.8px;width:10px;height:10px;line-height:10px;text-align:center;font-size:9.5px;color:#000;transform:rotate(-90deg)">8</div>
<div class="a" style="left:161px;top:527px;width:4px;height:1px;background:#111"></div>
<div class="t" style="left:158px;top:540.7px;width:10px;height:10px;line-height:10px;text-align:center;font-size:9.5px;color:#000;transform:rotate(-90deg)">9</div>
<div class="a" style="left:161px;top:565px;width:4px;height:1px;background:#111"></div>
<div class="t" style="left:158px;top:578.5px;width:10px;height:10px;line-height:10px;text-align:center;font-size:9.5px;color:#000;transform:rotate(-90deg)">10</div>
<div class="a" style="left:161px;top:602px;width:4px;height:1px;background:#111"></div>
<div class="t" style="left:158px;top:616.4px;width:10px;height:10px;line-height:10px;text-align:center;font-size:9.5px;color:#000;transform:rotate(-90deg)">11</div>
<div class="a" style="left:161px;top:653px;width:4px;height:1px;background:#111"></div>
<div class="t" style="left:158px;top:666.9px;width:10px;height:10px;line-height:10px;text-align:center;font-size:9.5px;color:#000;transform:rotate(-90deg)">1</div>
<div class="a" style="left:161px;top:703px;width:4px;height:1px;background:#111"></div>
<div class="t" style="left:158px;top:716.9px;width:10px;height:10px;line-height:10px;text-align:center;font-size:9.5px;color:#000;transform:rotate(-90deg)">1</div>
<div class="a" style="left:161px;top:741px;width:4px;height:1px;background:#111"></div>
<div class="t" style="left:158px;top:754.7px;width:10px;height:10px;line-height:10px;text-align:center;font-size:9.5px;color:#000;transform:rotate(-90deg)">2</div>
<div class="a" style="left:161px;top:779px;width:4px;height:1px;background:#111"></div>
<div class="t" style="left:158px;top:792.5px;width:10px;height:10px;line-height:10px;text-align:center;font-size:9.5px;color:#000;transform:rotate(-90deg)">3</div>
<div class="a" style="left:161px;top:816px;width:4px;height:1px;background:#111"></div>
<div class="t" style="left:158px;top:830.4px;width:10px;height:10px;line-height:10px;text-align:center;font-size:9.5px;color:#000;transform:rotate(-90deg)">4</div>
<div class="a" style="left:161px;top:854px;width:4px;height:1px;background:#111"></div>
<div class="t" style="left:158px;top:868.2px;width:10px;height:10px;line-height:10px;text-align:center;font-size:9.5px;color:#000;transform:rotate(-90deg)">5</div>
<div class="a" style="left:161px;top:892px;width:4px;height:1px;background:#111"></div>
<div class="t" style="left:158px;top:906.1px;width:10px;height:10px;line-height:10px;text-align:center;font-size:9.5px;color:#000;transform:rotate(-90deg)">6</div>
<div class="a" style="left:147px;top:203px;width:28px;height:3px;background:#c7cacf"></div>
<div class="a" style="left:147px;top:632px;width:28px;height:3px;background:#c7cacf"></div>
<div class="a" style="left:147px;top:682px;width:28px;height:3px;background:#c7cacf"></div>
<div class="a" style="left:175px;top:99px;width:719px;height:832px;background:#fff"></div>
<svg style="left:175px;top:99px" width="719" height="832"><g fill="#c4c4c4"><path transform="translate(0 9)" d="M9 0h1v1h-1zM18 0h1v1h-1zM28 0h1v1h-1zM37 0h1v1h-1zM47 0h1v1h-1zM56 0h1v1h-1zM66 0h1v1h-1zM75 0h1v1h-1zM85 0h1v1h-1zM94 0h1v1h-1zM104 0h1v1h-1zM113 0h1v1h-1zM123 0h1v1h-1zM132 0h1v1h-1zM141 0h1v1h-1zM151 0h1v1h-1zM160 0h1v1h-1zM170 0h1v1h-1zM179 0h1v1h-1zM189 0h1v1h-1zM198 0h1v1h-1zM208 0h1v1h-1zM217 0h1v1h-1zM227 0h1v1h-1zM236 0h1v1h-1zM246 0h1v1h-1zM255 0h1v1h-1zM264 0h1v1h-1zM274 0h1v1h-1zM283 0h1v1h-1zM293 0h1v1h-1zM302 0h1v1h-1zM312 0h1v1h-1zM321 0h1v1h-1zM331 0h1v1h-1zM340 0h1v1h-1zM350 0h1v1h-1zM359 0h1v1h-1zM369 0h1v1h-1zM378 0h1v1h-1zM387 0h1v1h-1zM397 0h1v1h-1zM406 0h1v1h-1zM416 0h1v1h-1zM425 0h1v1h-1zM435 0h1v1h-1zM444 0h1v1h-1zM454 0h1v1h-1zM463 0h1v1h-1zM473 0h1v1h-1zM482 0h1v1h-1zM492 0h1v1h-1zM501 0h1v1h-1zM510 0h1v1h-1zM520 0h1v1h-1zM529 0h1v1h-1zM539 0h1v1h-1zM548 0h1v1h-1zM558 0h1v1h-1zM567 0h1v1h-1zM577 0h1v1h-1zM586 0h1v1h-1zM596 0h1v1h-1zM605 0h1v1h-1zM615 0h1v1h-1zM624 0h1v1h-1zM633 0h1v1h-1zM643 0h1v1h-1zM652 0h1v1h-1zM662 0h1v1h-1zM671 0h1v1h-1zM681 0h1v1h-1zM690 0h1v1h-1zM700 0h1v1h-1zM709 0h1v1h-1z"/><path transform="translate(0 19)" d="M9 0h1v1h-1zM18 0h1v1h-1zM28 0h1v1h-1zM37 0h1v1h-1zM47 0h1v1h-1zM56 0h1v1h-1zM66 0h1v1h-1zM75 0h1v1h-1zM85 0h1v1h-1zM94 0h1v1h-1zM104 0h1v1h-1zM113 0h1v1h-1zM123 0h1v1h-1zM132 0h1v1h-1zM141 0h1v1h-1zM151 0h1v1h-1zM160 0h1v1h-1zM170 0h1v1h-1zM179 0h1v1h-1zM189 0h1v1h-1zM198 0h1v1h-1zM208 0h1v1h-1zM217 0h1v1h-1zM227 0h1v1h-1zM236 0h1v1h-1zM246 0h1v1h-1zM255 0h1v1h-1zM264 0h1v1h-1zM274 0h1v1h-1zM283 0h1v1h-1zM293 0h1v1h-1zM302 0h1v1h-1zM312 0h1v1h-1zM321 0h1v1h-1zM331 0h1v1h-1zM340 0h1v1h-1zM350 0h1v1h-1zM359 0h1v1h-1zM369 0h1v1h-1zM378 0h1v1h-1zM387 0h1v1h-1zM397 0h1v1h-1zM406 0h1v1h-1zM416 0h1v1h-1zM425 0h1v1h-1zM435 0h1v1h-1zM444 0h1v1h-1zM454 0h1v1h-1zM463 0h1v1h-1zM473 0h1v1h-1zM482 0h1v1h-1zM492 0h1v1h-1zM501 0h1v1h-1zM510 0h1v1h-1zM520 0h1v1h-1zM529 0h1v1h-1zM539 0h1v1h-1zM548 0h1v1h-1zM558 0h1v1h-1zM567 0h1v1h-1zM577 0h1v1h-1zM586 0h1v1h-1zM596 0h1v1h-1zM605 0h1v1h-1zM615 0h1v1h-1zM624 0h1v1h-1zM633 0h1v1h-1zM643 0h1v1h-1zM652 0h1v1h-1zM662 0h1v1h-1zM671 0h1v1h-1zM681 0h1v1h-1zM690 0h1v1h-1zM700 0h1v1h-1zM709 0h1v1h-1z"/><path transform="translate(0 28)" d="M9 0h1v1h-1zM18 0h1v1h-1zM28 0h1v1h-1zM37 0h1v1h-1zM47 0h1v1h-1zM56 0h1v1h-1zM66 0h1v1h-1zM75 0h1v1h-1zM85 0h1v1h-1zM94 0h1v1h-1zM104 0h1v1h-1zM113 0h1v1h-1zM123 0h1v1h-1zM132 0h1v1h-1zM141 0h1v1h-1zM151 0h1v1h-1zM160 0h1v1h-1zM170 0h1v1h-1zM179 0h1v1h-1zM189 0h1v1h-1zM198 0h1v1h-1zM208 0h1v1h-1zM217 0h1v1h-1zM227 0h1v1h-1zM236 0h1v1h-1zM246 0h1v1h-1zM255 0h1v1h-1zM264 0h1v1h-1zM274 0h1v1h-1zM283 0h1v1h-1zM293 0h1v1h-1zM302 0h1v1h-1zM312 0h1v1h-1zM321 0h1v1h-1zM331 0h1v1h-1zM340 0h1v1h-1zM350 0h1v1h-1zM359 0h1v1h-1zM369 0h1v1h-1zM378 0h1v1h-1zM387 0h1v1h-1zM397 0h1v1h-1zM406 0h1v1h-1zM416 0h1v1h-1zM425 0h1v1h-1zM435 0h1v1h-1zM444 0h1v1h-1zM454 0h1v1h-1zM463 0h1v1h-1zM473 0h1v1h-1zM482 0h1v1h-1zM492 0h1v1h-1zM501 0h1v1h-1zM510 0h1v1h-1zM520 0h1v1h-1zM529 0h1v1h-1zM539 0h1v1h-1zM548 0h1v1h-1zM558 0h1v1h-1zM567 0h1v1h-1zM577 0h1v1h-1zM586 0h1v1h-1zM596 0h1v1h-1zM605 0h1v1h-1zM615 0h1v1h-1zM624 0h1v1h-1zM633 0h1v1h-1zM643 0h1v1h-1zM652 0h1v1h-1zM662 0h1v1h-1zM671 0h1v1h-1zM681 0h1v1h-1zM690 0h1v1h-1zM700 0h1v1h-1zM709 0h1v1h-1z"/><path transform="translate(0 38)" d="M9 0h1v1h-1zM18 0h1v1h-1zM28 0h1v1h-1zM37 0h1v1h-1zM47 0h1v1h-1zM56 0h1v1h-1zM66 0h1v1h-1zM75 0h1v1h-1zM85 0h1v1h-1zM94 0h1v1h-1zM104 0h1v1h-1zM113 0h1v1h-1zM123 0h1v1h-1zM132 0h1v1h-1zM141 0h1v1h-1zM151 0h1v1h-1zM160 0h1v1h-1zM170 0h1v1h-1zM179 0h1v1h-1zM189 0h1v1h-1zM198 0h1v1h-1zM208 0h1v1h-1zM217 0h1v1h-1zM227 0h1v1h-1zM236 0h1v1h-1zM246 0h1v1h-1zM255 0h1v1h-1zM264 0h1v1h-1zM274 0h1v1h-1zM283 0h1v1h-1zM293 0h1v1h-1zM302 0h1v1h-1zM312 0h1v1h-1zM321 0h1v1h-1zM331 0h1v1h-1zM340 0h1v1h-1zM350 0h1v1h-1zM359 0h1v1h-1zM369 0h1v1h-1zM378 0h1v1h-1zM387 0h1v1h-1zM397 0h1v1h-1zM406 0h1v1h-1zM416 0h1v1h-1zM425 0h1v1h-1zM435 0h1v1h-1zM444 0h1v1h-1zM454 0h1v1h-1zM463 0h1v1h-1zM473 0h1v1h-1zM482 0h1v1h-1zM492 0h1v1h-1zM501 0h1v1h-1zM510 0h1v1h-1zM520 0h1v1h-1zM529 0h1v1h-1zM539 0h1v1h-1zM548 0h1v1h-1zM558 0h1v1h-1zM567 0h1v1h-1zM577 0h1v1h-1zM586 0h1v1h-1zM596 0h1v1h-1zM605 0h1v1h-1zM615 0h1v1h-1zM624 0h1v1h-1zM633 0h1v1h-1zM643 0h1v1h-1zM652 0h1v1h-1zM662 0h1v1h-1zM671 0h1v1h-1zM681 0h1v1h-1zM690 0h1v1h-1zM700 0h1v1h-1zM709 0h1v1h-1z"/><path transform="translate(0 47)" d="M9 0h1v1h-1zM18 0h1v1h-1zM28 0h1v1h-1zM37 0h1v1h-1zM47 0h1v1h-1zM56 0h1v1h-1zM66 0h1v1h-1zM75 0h1v1h-1zM85 0h1v1h-1zM94 0h1v1h-1zM104 0h1v1h-1zM113 0h1v1h-1zM123 0h1v1h-1zM132 0h1v1h-1zM141 0h1v1h-1zM151 0h1v1h-1zM160 0h1v1h-1zM170 0h1v1h-1zM179 0h1v1h-1zM189 0h1v1h-1zM198 0h1v1h-1zM208 0h1v1h-1zM217 0h1v1h-1zM227 0h1v1h-1zM236 0h1v1h-1zM246 0h1v1h-1zM255 0h1v1h-1zM264 0h1v1h-1zM274 0h1v1h-1zM283 0h1v1h-1zM293 0h1v1h-1zM302 0h1v1h-1zM312 0h1v1h-1zM321 0h1v1h-1zM331 0h1v1h-1zM340 0h1v1h-1zM350 0h1v1h-1zM359 0h1v1h-1zM369 0h1v1h-1zM378 0h1v1h-1zM387 0h1v1h-1zM397 0h1v1h-1zM406 0h1v1h-1zM416 0h1v1h-1zM425 0h1v1h-1zM435 0h1v1h-1zM444 0h1v1h-1zM454 0h1v1h-1zM463 0h1v1h-1zM473 0h1v1h-1zM482 0h1v1h-1zM492 0h1v1h-1zM501 0h1v1h-1zM510 0h1v1h-1zM520 0h1v1h-1zM529 0h1v1h-1zM539 0h1v1h-1zM548 0h1v1h-1zM558 0h1v1h-1zM567 0h1v1h-1zM577 0h1v1h-1zM586 0h1v1h-1zM596 0h1v1h-1zM605 0h1v1h-1zM615 0h1v1h-1zM624 0h1v1h-1zM633 0h1v1h-1zM643 0h1v1h-1zM652 0h1v1h-1zM662 0h1v1h-1zM671 0h1v1h-1zM681 0h1v1h-1zM690 0h1v1h-1zM700 0h1v1h-1zM709 0h1v1h-1z"/><path transform="translate(0 57)" d="M9 0h1v1h-1zM18 0h1v1h-1zM28 0h1v1h-1zM37 0h1v1h-1zM47 0h1v1h-1zM56 0h1v1h-1zM66 0h1v1h-1zM75 0h1v1h-1zM85 0h1v1h-1zM94 0h1v1h-1zM104 0h1v1h-1zM113 0h1v1h-1zM123 0h1v1h-1zM132 0h1v1h-1zM141 0h1v1h-1zM151 0h1v1h-1zM160 0h1v1h-1zM170 0h1v1h-1zM179 0h1v1h-1zM189 0h1v1h-1zM198 0h1v1h-1zM208 0h1v1h-1zM217 0h1v1h-1zM227 0h1v1h-1zM236 0h1v1h-1zM246 0h1v1h-1zM255 0h1v1h-1zM264 0h1v1h-1zM274 0h1v1h-1zM283 0h1v1h-1zM293 0h1v1h-1zM302 0h1v1h-1zM312 0h1v1h-1zM321 0h1v1h-1zM331 0h1v1h-1zM340 0h1v1h-1zM350 0h1v1h-1zM359 0h1v1h-1zM369 0h1v1h-1zM378 0h1v1h-1zM387 0h1v1h-1zM397 0h1v1h-1zM406 0h1v1h-1zM416 0h1v1h-1zM425 0h1v1h-1zM435 0h1v1h-1zM444 0h1v1h-1zM454 0h1v1h-1zM463 0h1v1h-1zM473 0h1v1h-1zM482 0h1v1h-1zM492 0h1v1h-1zM501 0h1v1h-1zM510 0h1v1h-1zM520 0h1v1h-1zM529 0h1v1h-1zM539 0h1v1h-1zM548 0h1v1h-1zM558 0h1v1h-1zM567 0h1v1h-1zM577 0h1v1h-1zM586 0h1v1h-1zM596 0h1v1h-1zM605 0h1v1h-1zM615 0h1v1h-1zM624 0h1v1h-1zM633 0h1v1h-1zM643 0h1v1h-1zM652 0h1v1h-1zM662 0h1v1h-1zM671 0h1v1h-1zM681 0h1v1h-1zM690 0h1v1h-1zM700 0h1v1h-1zM709 0h1v1h-1z"/><path transform="translate(0 66)" d="M9 0h1v1h-1zM18 0h1v1h-1zM28 0h1v1h-1zM37 0h1v1h-1zM47 0h1v1h-1zM56 0h1v1h-1zM66 0h1v1h-1zM75 0h1v1h-1zM85 0h1v1h-1zM94 0h1v1h-1zM104 0h1v1h-1zM113 0h1v1h-1zM123 0h1v1h-1zM132 0h1v1h-1zM141 0h1v1h-1zM151 0h1v1h-1zM160 0h1v1h-1zM170 0h1v1h-1zM179 0h1v1h-1zM189 0h1v1h-1zM198 0h1v1h-1zM208 0h1v1h-1zM217 0h1v1h-1zM227 0h1v1h-1zM236 0h1v1h-1zM246 0h1v1h-1zM255 0h1v1h-1zM264 0h1v1h-1zM274 0h1v1h-1zM283 0h1v1h-1zM293 0h1v1h-1zM302 0h1v1h-1zM312 0h1v1h-1zM321 0h1v1h-1zM331 0h1v1h-1zM340 0h1v1h-1zM350 0h1v1h-1zM359 0h1v1h-1zM369 0h1v1h-1zM378 0h1v1h-1zM387 0h1v1h-1zM397 0h1v1h-1zM406 0h1v1h-1zM416 0h1v1h-1zM425 0h1v1h-1zM435 0h1v1h-1zM444 0h1v1h-1zM454 0h1v1h-1zM463 0h1v1h-1zM473 0h1v1h-1zM482 0h1v1h-1zM492 0h1v1h-1zM501 0h1v1h-1zM510 0h1v1h-1zM520 0h1v1h-1zM529 0h1v1h-1zM539 0h1v1h-1zM548 0h1v1h-1zM558 0h1v1h-1zM567 0h1v1h-1zM577 0h1v1h-1zM586 0h1v1h-1zM596 0h1v1h-1zM605 0h1v1h-1zM615 0h1v1h-1zM624 0h1v1h-1zM633 0h1v1h-1zM643 0h1v1h-1zM652 0h1v1h-1zM662 0h1v1h-1zM671 0h1v1h-1zM681 0h1v1h-1zM690 0h1v1h-1zM700 0h1v1h-1zM709 0h1v1h-1z"/><path transform="translate(0 76)" d="M9 0h1v1h-1zM18 0h1v1h-1zM28 0h1v1h-1zM37 0h1v1h-1zM47 0h1v1h-1zM56 0h1v1h-1zM66 0h1v1h-1zM75 0h1v1h-1zM85 0h1v1h-1zM94 0h1v1h-1zM104 0h1v1h-1zM113 0h1v1h-1zM123 0h1v1h-1zM132 0h1v1h-1zM141 0h1v1h-1zM151 0h1v1h-1zM160 0h1v1h-1zM170 0h1v1h-1zM179 0h1v1h-1zM189 0h1v1h-1zM198 0h1v1h-1zM208 0h1v1h-1zM217 0h1v1h-1zM227 0h1v1h-1zM236 0h1v1h-1zM246 0h1v1h-1zM255 0h1v1h-1zM264 0h1v1h-1zM274 0h1v1h-1zM283 0h1v1h-1zM293 0h1v1h-1zM302 0h1v1h-1zM312 0h1v1h-1zM321 0h1v1h-1zM331 0h1v1h-1zM340 0h1v1h-1zM350 0h1v1h-1zM359 0h1v1h-1zM369 0h1v1h-1zM378 0h1v1h-1zM387 0h1v1h-1zM397 0h1v1h-1zM406 0h1v1h-1zM416 0h1v1h-1zM425 0h1v1h-1zM435 0h1v1h-1zM444 0h1v1h-1zM454 0h1v1h-1zM463 0h1v1h-1zM473 0h1v1h-1zM482 0h1v1h-1zM492 0h1v1h-1zM501 0h1v1h-1zM510 0h1v1h-1zM520 0h1v1h-1zM529 0h1v1h-1zM539 0h1v1h-1zM548 0h1v1h-1zM558 0h1v1h-1zM567 0h1v1h-1zM577 0h1v1h-1zM586 0h1v1h-1zM596 0h1v1h-1zM605 0h1v1h-1zM615 0h1v1h-1zM624 0h1v1h-1zM633 0h1v1h-1zM643 0h1v1h-1zM652 0h1v1h-1zM662 0h1v1h-1zM671 0h1v1h-1zM681 0h1v1h-1zM690 0h1v1h-1zM700 0h1v1h-1zM709 0h1v1h-1z"/><path transform="translate(0 85)" d="M9 0h1v1h-1zM18 0h1v1h-1zM28 0h1v1h-1zM37 0h1v1h-1zM47 0h1v1h-1zM56 0h1v1h-1zM66 0h1v1h-1zM75 0h1v1h-1zM85 0h1v1h-1zM94 0h1v1h-1zM104 0h1v1h-1zM113 0h1v1h-1zM123 0h1v1h-1zM132 0h1v1h-1zM141 0h1v1h-1zM151 0h1v1h-1zM160 0h1v1h-1zM170 0h1v1h-1zM179 0h1v1h-1zM189 0h1v1h-1zM198 0h1v1h-1zM208 0h1v1h-1zM217 0h1v1h-1zM227 0h1v1h-1zM236 0h1v1h-1zM246 0h1v1h-1zM255 0h1v1h-1zM264 0h1v1h-1zM274 0h1v1h-1zM283 0h1v1h-1zM293 0h1v1h-1zM302 0h1v1h-1zM312 0h1v1h-1zM321 0h1v1h-1zM331 0h1v1h-1zM340 0h1v1h-1zM350 0h1v1h-1zM359 0h1v1h-1zM369 0h1v1h-1zM378 0h1v1h-1zM387 0h1v1h-1zM397 0h1v1h-1zM406 0h1v1h-1zM416 0h1v1h-1zM425 0h1v1h-1zM435 0h1v1h-1zM444 0h1v1h-1zM454 0h1v1h-1zM463 0h1v1h-1zM473 0h1v1h-1zM482 0h1v1h-1zM492 0h1v1h-1zM501 0h1v1h-1zM510 0h1v1h-1zM520 0h1v1h-1zM529 0h1v1h-1zM539 0h1v1h-1zM548 0h1v1h-1zM558 0h1v1h-1zM567 0h1v1h-1zM577 0h1v1h-1zM586 0h1v1h-1zM596 0h1v1h-1zM605 0h1v1h-1zM615 0h1v1h-1zM624 0h1v1h-1zM633 0h1v1h-1zM643 0h1v1h-1zM652 0h1v1h-1zM662 0h1v1h-1zM671 0h1v1h-1zM681 0h1v1h-1zM690 0h1v1h-1zM700 0h1v1h-1zM709 0h1v1h-1z"/><path transform="translate(0 95)" d="M9 0h1v1h-1zM18 0h1v1h-1zM28 0h1v1h-1zM37 0h1v1h-1zM47 0h1v1h-1zM56 0h1v1h-1zM66 0h1v1h-1zM75 0h1v1h-1zM85 0h1v1h-1zM94 0h1v1h-1zM104 0h1v1h-1zM113 0h1v1h-1zM123 0h1v1h-1zM132 0h1v1h-1zM141 0h1v1h-1zM151 0h1v1h-1zM160 0h1v1h-1zM170 0h1v1h-1zM179 0h1v1h-1zM189 0h1v1h-1zM198 0h1v1h-1zM208 0h1v1h-1zM217 0h1v1h-1zM227 0h1v1h-1zM236 0h1v1h-1zM246 0h1v1h-1zM255 0h1v1h-1zM264 0h1v1h-1zM274 0h1v1h-1zM283 0h1v1h-1zM293 0h1v1h-1zM302 0h1v1h-1zM312 0h1v1h-1zM321 0h1v1h-1zM331 0h1v1h-1zM340 0h1v1h-1zM350 0h1v1h-1zM359 0h1v1h-1zM369 0h1v1h-1zM378 0h1v1h-1zM387 0h1v1h-1zM397 0h1v1h-1zM406 0h1v1h-1zM416 0h1v1h-1zM425 0h1v1h-1zM435 0h1v1h-1zM444 0h1v1h-1zM454 0h1v1h-1zM463 0h1v1h-1zM473 0h1v1h-1zM482 0h1v1h-1zM492 0h1v1h-1zM501 0h1v1h-1zM510 0h1v1h-1zM520 0h1v1h-1zM529 0h1v1h-1zM539 0h1v1h-1zM548 0h1v1h-1zM558 0h1v1h-1zM567 0h1v1h-1zM577 0h1v1h-1zM586 0h1v1h-1zM596 0h1v1h-1zM605 0h1v1h-1zM615 0h1v1h-1zM624 0h1v1h-1zM633 0h1v1h-1zM643 0h1v1h-1zM652 0h1v1h-1zM662 0h1v1h-1zM671 0h1v1h-1zM681 0h1v1h-1zM690 0h1v1h-1zM700 0h1v1h-1zM709 0h1v1h-1z"/><path transform="translate(0 115)" d="M9 0h1v1h-1zM18 0h1v1h-1zM28 0h1v1h-1zM37 0h1v1h-1zM47 0h1v1h-1zM56 0h1v1h-1zM66 0h1v1h-1zM75 0h1v1h-1zM85 0h1v1h-1zM94 0h1v1h-1zM104 0h1v1h-1zM113 0h1v1h-1zM123 0h1v1h-1zM132 0h1v1h-1zM141 0h1v1h-1zM151 0h1v1h-1zM160 0h1v1h-1zM170 0h1v1h-1zM179 0h1v1h-1zM189 0h1v1h-1zM198 0h1v1h-1zM208 0h1v1h-1zM217 0h1v1h-1zM227 0h1v1h-1zM236 0h1v1h-1zM246 0h1v1h-1zM255 0h1v1h-1zM264 0h1v1h-1zM274 0h1v1h-1zM283 0h1v1h-1zM293 0h1v1h-1zM302 0h1v1h-1zM312 0h1v1h-1zM321 0h1v1h-1zM331 0h1v1h-1zM340 0h1v1h-1zM350 0h1v1h-1zM359 0h1v1h-1zM369 0h1v1h-1zM378 0h1v1h-1zM387 0h1v1h-1zM397 0h1v1h-1zM406 0h1v1h-1zM416 0h1v1h-1zM425 0h1v1h-1zM435 0h1v1h-1zM444 0h1v1h-1zM454 0h1v1h-1zM463 0h1v1h-1zM473 0h1v1h-1zM482 0h1v1h-1zM492 0h1v1h-1zM501 0h1v1h-1zM510 0h1v1h-1zM520 0h1v1h-1zM529 0h1v1h-1zM539 0h1v1h-1zM548 0h1v1h-1zM558 0h1v1h-1zM567 0h1v1h-1zM577 0h1v1h-1zM586 0h1v1h-1zM596 0h1v1h-1zM605 0h1v1h-1zM615 0h1v1h-1zM624 0h1v1h-1zM633 0h1v1h-1zM643 0h1v1h-1zM652 0h1v1h-1zM662 0h1v1h-1zM671 0h1v1h-1zM681 0h1v1h-1zM690 0h1v1h-1zM700 0h1v1h-1zM709 0h1v1h-1z"/><path transform="translate(0 124)" d="M9 0h1v1h-1zM18 0h1v1h-1zM28 0h1v1h-1zM37 0h1v1h-1zM47 0h1v1h-1zM56 0h1v1h-1zM66 0h1v1h-1zM75 0h1v1h-1zM85 0h1v1h-1zM94 0h1v1h-1zM104 0h1v1h-1zM113 0h1v1h-1zM123 0h1v1h-1zM132 0h1v1h-1zM141 0h1v1h-1zM151 0h1v1h-1zM160 0h1v1h-1zM170 0h1v1h-1zM179 0h1v1h-1zM189 0h1v1h-1zM198 0h1v1h-1zM208 0h1v1h-1zM217 0h1v1h-1zM227 0h1v1h-1zM236 0h1v1h-1zM246 0h1v1h-1zM255 0h1v1h-1zM264 0h1v1h-1zM274 0h1v1h-1zM283 0h1v1h-1zM293 0h1v1h-1zM302 0h1v1h-1zM312 0h1v1h-1zM321 0h1v1h-1zM331 0h1v1h-1zM340 0h1v1h-1zM350 0h1v1h-1zM359 0h1v1h-1zM369 0h1v1h-1zM378 0h1v1h-1zM387 0h1v1h-1zM397 0h1v1h-1zM406 0h1v1h-1zM416 0h1v1h-1zM425 0h1v1h-1zM435 0h1v1h-1zM444 0h1v1h-1zM454 0h1v1h-1zM463 0h1v1h-1zM473 0h1v1h-1zM482 0h1v1h-1zM492 0h1v1h-1zM501 0h1v1h-1zM510 0h1v1h-1zM520 0h1v1h-1zM529 0h1v1h-1zM539 0h1v1h-1zM548 0h1v1h-1zM558 0h1v1h-1zM567 0h1v1h-1zM577 0h1v1h-1zM586 0h1v1h-1zM596 0h1v1h-1zM605 0h1v1h-1zM615 0h1v1h-1zM624 0h1v1h-1zM633 0h1v1h-1zM643 0h1v1h-1zM652 0h1v1h-1zM662 0h1v1h-1zM671 0h1v1h-1zM681 0h1v1h-1zM690 0h1v1h-1zM700 0h1v1h-1zM709 0h1v1h-1z"/><path transform="translate(0 134)" d="M9 0h1v1h-1zM18 0h1v1h-1zM28 0h1v1h-1zM37 0h1v1h-1zM47 0h1v1h-1zM56 0h1v1h-1zM66 0h1v1h-1zM75 0h1v1h-1zM85 0h1v1h-1zM94 0h1v1h-1zM104 0h1v1h-1zM113 0h1v1h-1zM123 0h1v1h-1zM132 0h1v1h-1zM141 0h1v1h-1zM151 0h1v1h-1zM160 0h1v1h-1zM170 0h1v1h-1zM179 0h1v1h-1zM189 0h1v1h-1zM198 0h1v1h-1zM208 0h1v1h-1zM217 0h1v1h-1zM227 0h1v1h-1zM236 0h1v1h-1zM246 0h1v1h-1zM255 0h1v1h-1zM264 0h1v1h-1zM274 0h1v1h-1zM283 0h1v1h-1zM293 0h1v1h-1zM302 0h1v1h-1zM312 0h1v1h-1zM321 0h1v1h-1zM331 0h1v1h-1zM340 0h1v1h-1zM350 0h1v1h-1zM359 0h1v1h-1zM369 0h1v1h-1zM378 0h1v1h-1zM387 0h1v1h-1zM397 0h1v1h-1zM406 0h1v1h-1zM416 0h1v1h-1zM425 0h1v1h-1zM435 0h1v1h-1zM444 0h1v1h-1zM454 0h1v1h-1zM463 0h1v1h-1zM473 0h1v1h-1zM482 0h1v1h-1zM492 0h1v1h-1zM501 0h1v1h-1zM510 0h1v1h-1zM520 0h1v1h-1zM529 0h1v1h-1zM539 0h1v1h-1zM548 0h1v1h-1zM558 0h1v1h-1zM567 0h1v1h-1zM577 0h1v1h-1zM586 0h1v1h-1zM596 0h1v1h-1zM605 0h1v1h-1zM615 0h1v1h-1zM624 0h1v1h-1zM633 0h1v1h-1zM643 0h1v1h-1zM652 0h1v1h-1zM662 0h1v1h-1zM671 0h1v1h-1zM681 0h1v1h-1zM690 0h1v1h-1zM700 0h1v1h-1zM709 0h1v1h-1z"/><path transform="translate(0 143)" d="M9 0h1v1h-1zM18 0h1v1h-1zM28 0h1v1h-1zM37 0h1v1h-1zM47 0h1v1h-1zM56 0h1v1h-1zM66 0h1v1h-1zM75 0h1v1h-1zM85 0h1v1h-1zM94 0h1v1h-1zM104 0h1v1h-1zM113 0h1v1h-1zM123 0h1v1h-1zM132 0h1v1h-1zM141 0h1v1h-1zM151 0h1v1h-1zM160 0h1v1h-1zM170 0h1v1h-1zM179 0h1v1h-1zM189 0h1v1h-1zM198 0h1v1h-1zM208 0h1v1h-1zM217 0h1v1h-1zM227 0h1v1h-1zM236 0h1v1h-1zM246 0h1v1h-1zM255 0h1v1h-1zM264 0h1v1h-1zM274 0h1v1h-1zM283 0h1v1h-1zM293 0h1v1h-1zM302 0h1v1h-1zM312 0h1v1h-1zM321 0h1v1h-1zM331 0h1v1h-1zM340 0h1v1h-1zM350 0h1v1h-1zM359 0h1v1h-1zM369 0h1v1h-1zM378 0h1v1h-1zM387 0h1v1h-1zM397 0h1v1h-1zM406 0h1v1h-1zM416 0h1v1h-1zM425 0h1v1h-1zM435 0h1v1h-1zM444 0h1v1h-1zM454 0h1v1h-1zM463 0h1v1h-1zM473 0h1v1h-1zM482 0h1v1h-1zM492 0h1v1h-1zM501 0h1v1h-1zM510 0h1v1h-1zM520 0h1v1h-1zM529 0h1v1h-1zM539 0h1v1h-1zM548 0h1v1h-1zM558 0h1v1h-1zM567 0h1v1h-1zM577 0h1v1h-1zM586 0h1v1h-1zM596 0h1v1h-1zM605 0h1v1h-1zM615 0h1v1h-1zM624 0h1v1h-1zM633 0h1v1h-1zM643 0h1v1h-1zM652 0h1v1h-1zM662 0h1v1h-1zM671 0h1v1h-1zM681 0h1v1h-1zM690 0h1v1h-1zM700 0h1v1h-1zM709 0h1v1h-1z"/><path transform="translate(0 153)" d="M9 0h1v1h-1zM18 0h1v1h-1zM28 0h1v1h-1zM37 0h1v1h-1zM47 0h1v1h-1zM56 0h1v1h-1zM66 0h1v1h-1zM75 0h1v1h-1zM85 0h1v1h-1zM94 0h1v1h-1zM104 0h1v1h-1zM113 0h1v1h-1zM123 0h1v1h-1zM132 0h1v1h-1zM141 0h1v1h-1zM151 0h1v1h-1zM160 0h1v1h-1zM170 0h1v1h-1zM179 0h1v1h-1zM189 0h1v1h-1zM198 0h1v1h-1zM208 0h1v1h-1zM217 0h1v1h-1zM227 0h1v1h-1zM236 0h1v1h-1zM246 0h1v1h-1zM255 0h1v1h-1zM264 0h1v1h-1zM274 0h1v1h-1zM283 0h1v1h-1zM293 0h1v1h-1zM302 0h1v1h-1zM312 0h1v1h-1zM321 0h1v1h-1zM331 0h1v1h-1zM340 0h1v1h-1zM350 0h1v1h-1zM359 0h1v1h-1zM369 0h1v1h-1zM378 0h1v1h-1zM387 0h1v1h-1zM397 0h1v1h-1zM406 0h1v1h-1zM416 0h1v1h-1zM425 0h1v1h-1zM435 0h1v1h-1zM444 0h1v1h-1zM454 0h1v1h-1zM463 0h1v1h-1zM473 0h1v1h-1zM482 0h1v1h-1zM492 0h1v1h-1zM501 0h1v1h-1zM510 0h1v1h-1zM520 0h1v1h-1zM529 0h1v1h-1zM539 0h1v1h-1zM548 0h1v1h-1zM558 0h1v1h-1zM567 0h1v1h-1zM577 0h1v1h-1zM586 0h1v1h-1zM596 0h1v1h-1zM605 0h1v1h-1zM615 0h1v1h-1zM624 0h1v1h-1zM633 0h1v1h-1zM643 0h1v1h-1zM652 0h1v1h-1zM662 0h1v1h-1zM671 0h1v1h-1zM681 0h1v1h-1zM690 0h1v1h-1zM700 0h1v1h-1zM709 0h1v1h-1z"/><path transform="translate(0 162)" d="M9 0h1v1h-1zM18 0h1v1h-1zM28 0h1v1h-1zM37 0h1v1h-1zM47 0h1v1h-1zM56 0h1v1h-1zM66 0h1v1h-1zM75 0h1v1h-1zM85 0h1v1h-1zM94 0h1v1h-1zM104 0h1v1h-1zM113 0h1v1h-1zM123 0h1v1h-1zM132 0h1v1h-1zM141 0h1v1h-1zM151 0h1v1h-1zM160 0h1v1h-1zM170 0h1v1h-1zM179 0h1v1h-1zM189 0h1v1h-1zM198 0h1v1h-1zM208 0h1v1h-1zM217 0h1v1h-1zM227 0h1v1h-1zM236 0h1v1h-1zM246 0h1v1h-1zM255 0h1v1h-1zM264 0h1v1h-1zM274 0h1v1h-1zM283 0h1v1h-1zM293 0h1v1h-1zM302 0h1v1h-1zM312 0h1v1h-1zM321 0h1v1h-1zM331 0h1v1h-1zM340 0h1v1h-1zM350 0h1v1h-1zM359 0h1v1h-1zM369 0h1v1h-1zM378 0h1v1h-1zM387 0h1v1h-1zM397 0h1v1h-1zM406 0h1v1h-1zM416 0h1v1h-1zM425 0h1v1h-1zM435 0h1v1h-1zM444 0h1v1h-1zM454 0h1v1h-1zM463 0h1v1h-1zM473 0h1v1h-1zM482 0h1v1h-1zM492 0h1v1h-1zM501 0h1v1h-1zM510 0h1v1h-1zM520 0h1v1h-1zM529 0h1v1h-1zM539 0h1v1h-1zM548 0h1v1h-1zM558 0h1v1h-1zM567 0h1v1h-1zM577 0h1v1h-1zM586 0h1v1h-1zM596 0h1v1h-1zM605 0h1v1h-1zM615 0h1v1h-1zM624 0h1v1h-1zM633 0h1v1h-1zM643 0h1v1h-1zM652 0h1v1h-1zM662 0h1v1h-1zM671 0h1v1h-1zM681 0h1v1h-1zM690 0h1v1h-1zM700 0h1v1h-1zM709 0h1v1h-1z"/><path transform="translate(0 172)" d="M9 0h1v1h-1zM18 0h1v1h-1zM28 0h1v1h-1zM37 0h1v1h-1zM47 0h1v1h-1zM56 0h1v1h-1zM66 0h1v1h-1zM75 0h1v1h-1zM85 0h1v1h-1zM94 0h1v1h-1zM104 0h1v1h-1zM113 0h1v1h-1zM123 0h1v1h-1zM132 0h1v1h-1zM141 0h1v1h-1zM151 0h1v1h-1zM160 0h1v1h-1zM170 0h1v1h-1zM179 0h1v1h-1zM189 0h1v1h-1zM198 0h1v1h-1zM208 0h1v1h-1zM217 0h1v1h-1zM227 0h1v1h-1zM236 0h1v1h-1zM246 0h1v1h-1zM255 0h1v1h-1zM264 0h1v1h-1zM274 0h1v1h-1zM283 0h1v1h-1zM293 0h1v1h-1zM302 0h1v1h-1zM312 0h1v1h-1zM321 0h1v1h-1zM331 0h1v1h-1zM340 0h1v1h-1zM350 0h1v1h-1zM359 0h1v1h-1zM369 0h1v1h-1zM378 0h1v1h-1zM387 0h1v1h-1zM397 0h1v1h-1zM406 0h1v1h-1zM416 0h1v1h-1zM425 0h1v1h-1zM435 0h1v1h-1zM444 0h1v1h-1zM454 0h1v1h-1zM463 0h1v1h-1zM473 0h1v1h-1zM482 0h1v1h-1zM492 0h1v1h-1zM501 0h1v1h-1zM510 0h1v1h-1zM520 0h1v1h-1zM529 0h1v1h-1zM539 0h1v1h-1zM548 0h1v1h-1zM558 0h1v1h-1zM567 0h1v1h-1zM577 0h1v1h-1zM586 0h1v1h-1zM596 0h1v1h-1zM605 0h1v1h-1zM615 0h1v1h-1zM624 0h1v1h-1zM633 0h1v1h-1zM643 0h1v1h-1zM652 0h1v1h-1zM662 0h1v1h-1zM671 0h1v1h-1zM681 0h1v1h-1zM690 0h1v1h-1zM700 0h1v1h-1zM709 0h1v1h-1z"/><path transform="translate(0 181)" d="M9 0h1v1h-1zM18 0h1v1h-1zM28 0h1v1h-1zM37 0h1v1h-1zM47 0h1v1h-1zM56 0h1v1h-1zM66 0h1v1h-1zM75 0h1v1h-1zM85 0h1v1h-1zM94 0h1v1h-1zM104 0h1v1h-1zM113 0h1v1h-1zM123 0h1v1h-1zM132 0h1v1h-1zM141 0h1v1h-1zM151 0h1v1h-1zM160 0h1v1h-1zM170 0h1v1h-1zM179 0h1v1h-1zM189 0h1v1h-1zM198 0h1v1h-1zM208 0h1v1h-1zM217 0h1v1h-1zM227 0h1v1h-1zM236 0h1v1h-1zM246 0h1v1h-1zM255 0h1v1h-1zM264 0h1v1h-1zM274 0h1v1h-1zM283 0h1v1h-1zM293 0h1v1h-1zM302 0h1v1h-1zM312 0h1v1h-1zM321 0h1v1h-1zM331 0h1v1h-1zM340 0h1v1h-1zM350 0h1v1h-1zM359 0h1v1h-1zM369 0h1v1h-1zM378 0h1v1h-1zM387 0h1v1h-1zM397 0h1v1h-1zM406 0h1v1h-1zM416 0h1v1h-1zM425 0h1v1h-1zM435 0h1v1h-1zM444 0h1v1h-1zM454 0h1v1h-1zM463 0h1v1h-1zM473 0h1v1h-1zM482 0h1v1h-1zM492 0h1v1h-1zM501 0h1v1h-1zM510 0h1v1h-1zM520 0h1v1h-1zM529 0h1v1h-1zM539 0h1v1h-1zM548 0h1v1h-1zM558 0h1v1h-1zM567 0h1v1h-1zM577 0h1v1h-1zM586 0h1v1h-1zM596 0h1v1h-1zM605 0h1v1h-1zM615 0h1v1h-1zM624 0h1v1h-1zM633 0h1v1h-1zM643 0h1v1h-1zM652 0h1v1h-1zM662 0h1v1h-1zM671 0h1v1h-1zM681 0h1v1h-1zM690 0h1v1h-1zM700 0h1v1h-1zM709 0h1v1h-1z"/><path transform="translate(0 191)" d="M9 0h1v1h-1zM18 0h1v1h-1zM28 0h1v1h-1zM37 0h1v1h-1zM47 0h1v1h-1zM56 0h1v1h-1zM66 0h1v1h-1zM75 0h1v1h-1zM85 0h1v1h-1zM94 0h1v1h-1zM104 0h1v1h-1zM113 0h1v1h-1zM123 0h1v1h-1zM132 0h1v1h-1zM141 0h1v1h-1zM151 0h1v1h-1zM160 0h1v1h-1zM170 0h1v1h-1zM179 0h1v1h-1zM189 0h1v1h-1zM198 0h1v1h-1zM208 0h1v1h-1zM217 0h1v1h-1zM227 0h1v1h-1zM236 0h1v1h-1zM246 0h1v1h-1zM255 0h1v1h-1zM264 0h1v1h-1zM274 0h1v1h-1zM283 0h1v1h-1zM293 0h1v1h-1zM302 0h1v1h-1zM312 0h1v1h-1zM321 0h1v1h-1zM331 0h1v1h-1zM340 0h1v1h-1zM350 0h1v1h-1zM359 0h1v1h-1zM369 0h1v1h-1zM378 0h1v1h-1zM387 0h1v1h-1zM397 0h1v1h-1zM406 0h1v1h-1zM416 0h1v1h-1zM425 0h1v1h-1zM435 0h1v1h-1zM444 0h1v1h-1zM454 0h1v1h-1zM463 0h1v1h-1zM473 0h1v1h-1zM482 0h1v1h-1zM492 0h1v1h-1zM501 0h1v1h-1zM510 0h1v1h-1zM520 0h1v1h-1zM529 0h1v1h-1zM539 0h1v1h-1zM548 0h1v1h-1zM558 0h1v1h-1zM567 0h1v1h-1zM577 0h1v1h-1zM586 0h1v1h-1zM596 0h1v1h-1zM605 0h1v1h-1zM615 0h1v1h-1zM624 0h1v1h-1zM633 0h1v1h-1zM643 0h1v1h-1zM652 0h1v1h-1zM662 0h1v1h-1zM671 0h1v1h-1zM681 0h1v1h-1zM690 0h1v1h-1zM700 0h1v1h-1zM709 0h1v1h-1z"/><path transform="translate(0 200)" d="M9 0h1v1h-1zM18 0h1v1h-1zM28 0h1v1h-1zM37 0h1v1h-1zM47 0h1v1h-1zM56 0h1v1h-1zM66 0h1v1h-1zM75 0h1v1h-1zM85 0h1v1h-1zM94 0h1v1h-1zM104 0h1v1h-1zM113 0h1v1h-1zM123 0h1v1h-1zM132 0h1v1h-1zM141 0h1v1h-1zM151 0h1v1h-1zM160 0h1v1h-1zM170 0h1v1h-1zM179 0h1v1h-1zM189 0h1v1h-1zM198 0h1v1h-1zM208 0h1v1h-1zM217 0h1v1h-1zM227 0h1v1h-1zM236 0h1v1h-1zM246 0h1v1h-1zM255 0h1v1h-1zM264 0h1v1h-1zM274 0h1v1h-1zM283 0h1v1h-1zM293 0h1v1h-1zM302 0h1v1h-1zM312 0h1v1h-1zM321 0h1v1h-1zM331 0h1v1h-1zM340 0h1v1h-1zM350 0h1v1h-1zM359 0h1v1h-1zM369 0h1v1h-1zM378 0h1v1h-1zM387 0h1v1h-1zM397 0h1v1h-1zM406 0h1v1h-1zM416 0h1v1h-1zM425 0h1v1h-1zM435 0h1v1h-1zM444 0h1v1h-1zM454 0h1v1h-1zM463 0h1v1h-1zM473 0h1v1h-1zM482 0h1v1h-1zM492 0h1v1h-1zM501 0h1v1h-1zM510 0h1v1h-1zM520 0h1v1h-1zM529 0h1v1h-1zM539 0h1v1h-1zM548 0h1v1h-1zM558 0h1v1h-1zM567 0h1v1h-1zM577 0h1v1h-1zM586 0h1v1h-1zM596 0h1v1h-1zM605 0h1v1h-1zM615 0h1v1h-1zM624 0h1v1h-1zM633 0h1v1h-1zM643 0h1v1h-1zM652 0h1v1h-1zM662 0h1v1h-1zM671 0h1v1h-1zM681 0h1v1h-1zM690 0h1v1h-1zM700 0h1v1h-1zM709 0h1v1h-1z"/><path transform="translate(0 210)" d="M9 0h1v1h-1zM18 0h1v1h-1zM28 0h1v1h-1zM37 0h1v1h-1zM47 0h1v1h-1zM56 0h1v1h-1zM66 0h1v1h-1zM75 0h1v1h-1zM85 0h1v1h-1zM94 0h1v1h-1zM104 0h1v1h-1zM113 0h1v1h-1zM123 0h1v1h-1zM132 0h1v1h-1zM141 0h1v1h-1zM151 0h1v1h-1zM160 0h1v1h-1zM170 0h1v1h-1zM179 0h1v1h-1zM189 0h1v1h-1zM198 0h1v1h-1zM208 0h1v1h-1zM217 0h1v1h-1zM227 0h1v1h-1zM236 0h1v1h-1zM246 0h1v1h-1zM255 0h1v1h-1zM264 0h1v1h-1zM274 0h1v1h-1zM283 0h1v1h-1zM293 0h1v1h-1zM302 0h1v1h-1zM312 0h1v1h-1zM321 0h1v1h-1zM331 0h1v1h-1zM340 0h1v1h-1zM350 0h1v1h-1zM359 0h1v1h-1zM369 0h1v1h-1zM378 0h1v1h-1zM387 0h1v1h-1zM397 0h1v1h-1zM406 0h1v1h-1zM416 0h1v1h-1zM425 0h1v1h-1zM435 0h1v1h-1zM444 0h1v1h-1zM454 0h1v1h-1zM463 0h1v1h-1zM473 0h1v1h-1zM482 0h1v1h-1zM492 0h1v1h-1zM501 0h1v1h-1zM510 0h1v1h-1zM520 0h1v1h-1zM529 0h1v1h-1zM539 0h1v1h-1zM548 0h1v1h-1zM558 0h1v1h-1zM567 0h1v1h-1zM577 0h1v1h-1zM586 0h1v1h-1zM596 0h1v1h-1zM605 0h1v1h-1zM615 0h1v1h-1zM624 0h1v1h-1zM633 0h1v1h-1zM643 0h1v1h-1zM652 0h1v1h-1zM662 0h1v1h-1zM671 0h1v1h-1zM681 0h1v1h-1zM690 0h1v1h-1zM700 0h1v1h-1zM709 0h1v1h-1z"/><path transform="translate(0 219)" d="M9 0h1v1h-1zM18 0h1v1h-1zM28 0h1v1h-1zM37 0h1v1h-1zM47 0h1v1h-1zM56 0h1v1h-1zM66 0h1v1h-1zM75 0h1v1h-1zM85 0h1v1h-1zM94 0h1v1h-1zM104 0h1v1h-1zM113 0h1v1h-1zM123 0h1v1h-1zM132 0h1v1h-1zM141 0h1v1h-1zM151 0h1v1h-1zM160 0h1v1h-1zM170 0h1v1h-1zM179 0h1v1h-1zM189 0h1v1h-1zM198 0h1v1h-1zM208 0h1v1h-1zM217 0h1v1h-1zM227 0h1v1h-1zM236 0h1v1h-1zM246 0h1v1h-1zM255 0h1v1h-1zM264 0h1v1h-1zM274 0h1v1h-1zM283 0h1v1h-1zM293 0h1v1h-1zM302 0h1v1h-1zM312 0h1v1h-1zM321 0h1v1h-1zM331 0h1v1h-1zM340 0h1v1h-1zM350 0h1v1h-1zM359 0h1v1h-1zM369 0h1v1h-1zM378 0h1v1h-1zM387 0h1v1h-1zM397 0h1v1h-1zM406 0h1v1h-1zM416 0h1v1h-1zM425 0h1v1h-1zM435 0h1v1h-1zM444 0h1v1h-1zM454 0h1v1h-1zM463 0h1v1h-1zM473 0h1v1h-1zM482 0h1v1h-1zM492 0h1v1h-1zM501 0h1v1h-1zM510 0h1v1h-1zM520 0h1v1h-1zM529 0h1v1h-1zM539 0h1v1h-1zM548 0h1v1h-1zM558 0h1v1h-1zM567 0h1v1h-1zM577 0h1v1h-1zM586 0h1v1h-1zM596 0h1v1h-1zM605 0h1v1h-1zM615 0h1v1h-1zM624 0h1v1h-1zM633 0h1v1h-1zM643 0h1v1h-1zM652 0h1v1h-1zM662 0h1v1h-1zM671 0h1v1h-1zM681 0h1v1h-1zM690 0h1v1h-1zM700 0h1v1h-1zM709 0h1v1h-1z"/><path transform="translate(0 229)" d="M9 0h1v1h-1zM18 0h1v1h-1zM28 0h1v1h-1zM37 0h1v1h-1zM47 0h1v1h-1zM56 0h1v1h-1zM66 0h1v1h-1zM75 0h1v1h-1zM85 0h1v1h-1zM94 0h1v1h-1zM104 0h1v1h-1zM113 0h1v1h-1zM123 0h1v1h-1zM132 0h1v1h-1zM141 0h1v1h-1zM151 0h1v1h-1zM160 0h1v1h-1zM170 0h1v1h-1zM179 0h1v1h-1zM189 0h1v1h-1zM198 0h1v1h-1zM208 0h1v1h-1zM217 0h1v1h-1zM227 0h1v1h-1zM236 0h1v1h-1zM246 0h1v1h-1zM255 0h1v1h-1zM264 0h1v1h-1zM274 0h1v1h-1zM283 0h1v1h-1zM293 0h1v1h-1zM302 0h1v1h-1zM312 0h1v1h-1zM321 0h1v1h-1zM331 0h1v1h-1zM340 0h1v1h-1zM350 0h1v1h-1zM359 0h1v1h-1zM369 0h1v1h-1zM378 0h1v1h-1zM387 0h1v1h-1zM397 0h1v1h-1zM406 0h1v1h-1zM416 0h1v1h-1zM425 0h1v1h-1zM435 0h1v1h-1zM444 0h1v1h-1zM454 0h1v1h-1zM463 0h1v1h-1zM473 0h1v1h-1zM482 0h1v1h-1zM492 0h1v1h-1zM501 0h1v1h-1zM510 0h1v1h-1zM520 0h1v1h-1zM529 0h1v1h-1zM539 0h1v1h-1zM548 0h1v1h-1zM558 0h1v1h-1zM567 0h1v1h-1zM577 0h1v1h-1zM586 0h1v1h-1zM596 0h1v1h-1zM605 0h1v1h-1zM615 0h1v1h-1zM624 0h1v1h-1zM633 0h1v1h-1zM643 0h1v1h-1zM652 0h1v1h-1zM662 0h1v1h-1zM671 0h1v1h-1zM681 0h1v1h-1zM690 0h1v1h-1zM700 0h1v1h-1zM709 0h1v1h-1z"/><path transform="translate(0 238)" d="M9 0h1v1h-1zM18 0h1v1h-1zM28 0h1v1h-1zM37 0h1v1h-1zM47 0h1v1h-1zM56 0h1v1h-1zM66 0h1v1h-1zM75 0h1v1h-1zM85 0h1v1h-1zM94 0h1v1h-1zM104 0h1v1h-1zM113 0h1v1h-1zM123 0h1v1h-1zM132 0h1v1h-1zM141 0h1v1h-1zM151 0h1v1h-1zM160 0h1v1h-1zM170 0h1v1h-1zM179 0h1v1h-1zM189 0h1v1h-1zM198 0h1v1h-1zM208 0h1v1h-1zM217 0h1v1h-1zM227 0h1v1h-1zM236 0h1v1h-1zM246 0h1v1h-1zM255 0h1v1h-1zM264 0h1v1h-1zM274 0h1v1h-1zM283 0h1v1h-1zM293 0h1v1h-1zM302 0h1v1h-1zM312 0h1v1h-1zM321 0h1v1h-1zM331 0h1v1h-1zM340 0h1v1h-1zM350 0h1v1h-1zM359 0h1v1h-1zM369 0h1v1h-1zM378 0h1v1h-1zM387 0h1v1h-1zM397 0h1v1h-1zM406 0h1v1h-1zM416 0h1v1h-1zM425 0h1v1h-1zM435 0h1v1h-1zM444 0h1v1h-1zM454 0h1v1h-1zM463 0h1v1h-1zM473 0h1v1h-1zM482 0h1v1h-1zM492 0h1v1h-1zM501 0h1v1h-1zM510 0h1v1h-1zM520 0h1v1h-1zM529 0h1v1h-1zM539 0h1v1h-1zM548 0h1v1h-1zM558 0h1v1h-1zM567 0h1v1h-1zM577 0h1v1h-1zM586 0h1v1h-1zM596 0h1v1h-1zM605 0h1v1h-1zM615 0h1v1h-1zM624 0h1v1h-1zM633 0h1v1h-1zM643 0h1v1h-1zM652 0h1v1h-1zM662 0h1v1h-1zM671 0h1v1h-1zM681 0h1v1h-1zM690 0h1v1h-1zM700 0h1v1h-1zM709 0h1v1h-1z"/><path transform="translate(0 247)" d="M9 0h1v1h-1zM18 0h1v1h-1zM28 0h1v1h-1zM37 0h1v1h-1zM47 0h1v1h-1zM56 0h1v1h-1zM66 0h1v1h-1zM75 0h1v1h-1zM85 0h1v1h-1zM94 0h1v1h-1zM104 0h1v1h-1zM113 0h1v1h-1zM123 0h1v1h-1zM132 0h1v1h-1zM141 0h1v1h-1zM151 0h1v1h-1zM160 0h1v1h-1zM170 0h1v1h-1zM179 0h1v1h-1zM189 0h1v1h-1zM198 0h1v1h-1zM208 0h1v1h-1zM217 0h1v1h-1zM227 0h1v1h-1zM236 0h1v1h-1zM246 0h1v1h-1zM255 0h1v1h-1zM264 0h1v1h-1zM274 0h1v1h-1zM283 0h1v1h-1zM293 0h1v1h-1zM302 0h1v1h-1zM312 0h1v1h-1zM321 0h1v1h-1zM331 0h1v1h-1zM340 0h1v1h-1zM350 0h1v1h-1zM359 0h1v1h-1zM369 0h1v1h-1zM378 0h1v1h-1zM387 0h1v1h-1zM397 0h1v1h-1zM406 0h1v1h-1zM416 0h1v1h-1zM425 0h1v1h-1zM435 0h1v1h-1zM444 0h1v1h-1zM454 0h1v1h-1zM463 0h1v1h-1zM473 0h1v1h-1zM482 0h1v1h-1zM492 0h1v1h-1zM501 0h1v1h-1zM510 0h1v1h-1zM520 0h1v1h-1zM529 0h1v1h-1zM539 0h1v1h-1zM548 0h1v1h-1zM558 0h1v1h-1zM567 0h1v1h-1zM577 0h1v1h-1zM586 0h1v1h-1zM596 0h1v1h-1zM605 0h1v1h-1zM615 0h1v1h-1zM624 0h1v1h-1zM633 0h1v1h-1zM643 0h1v1h-1zM652 0h1v1h-1zM662 0h1v1h-1zM671 0h1v1h-1zM681 0h1v1h-1zM690 0h1v1h-1zM700 0h1v1h-1zM709 0h1v1h-1z"/><path transform="translate(0 257)" d="M9 0h1v1h-1zM18 0h1v1h-1zM28 0h1v1h-1zM37 0h1v1h-1zM47 0h1v1h-1zM56 0h1v1h-1zM66 0h1v1h-1zM75 0h1v1h-1zM85 0h1v1h-1zM94 0h1v1h-1zM104 0h1v1h-1zM113 0h1v1h-1zM123 0h1v1h-1zM132 0h1v1h-1zM141 0h1v1h-1zM151 0h1v1h-1zM160 0h1v1h-1zM170 0h1v1h-1zM179 0h1v1h-1zM189 0h1v1h-1zM198 0h1v1h-1zM208 0h1v1h-1zM217 0h1v1h-1zM227 0h1v1h-1zM236 0h1v1h-1zM246 0h1v1h-1zM255 0h1v1h-1zM264 0h1v1h-1zM274 0h1v1h-1zM283 0h1v1h-1zM293 0h1v1h-1zM302 0h1v1h-1zM312 0h1v1h-1zM321 0h1v1h-1zM331 0h1v1h-1zM340 0h1v1h-1zM350 0h1v1h-1zM359 0h1v1h-1zM369 0h1v1h-1zM378 0h1v1h-1zM387 0h1v1h-1zM397 0h1v1h-1zM406 0h1v1h-1zM416 0h1v1h-1zM425 0h1v1h-1zM435 0h1v1h-1zM444 0h1v1h-1zM454 0h1v1h-1zM463 0h1v1h-1zM473 0h1v1h-1zM482 0h1v1h-1zM492 0h1v1h-1zM501 0h1v1h-1zM510 0h1v1h-1zM520 0h1v1h-1zM529 0h1v1h-1zM539 0h1v1h-1zM548 0h1v1h-1zM558 0h1v1h-1zM567 0h1v1h-1zM577 0h1v1h-1zM586 0h1v1h-1zM596 0h1v1h-1zM605 0h1v1h-1zM615 0h1v1h-1zM624 0h1v1h-1zM633 0h1v1h-1zM643 0h1v1h-1zM652 0h1v1h-1zM662 0h1v1h-1zM671 0h1v1h-1zM681 0h1v1h-1zM690 0h1v1h-1zM700 0h1v1h-1zM709 0h1v1h-1z"/><path transform="translate(0 266)" d="M9 0h1v1h-1zM18 0h1v1h-1zM28 0h1v1h-1zM37 0h1v1h-1zM47 0h1v1h-1zM56 0h1v1h-1zM66 0h1v1h-1zM75 0h1v1h-1zM85 0h1v1h-1zM94 0h1v1h-1zM104 0h1v1h-1zM113 0h1v1h-1zM123 0h1v1h-1zM132 0h1v1h-1zM141 0h1v1h-1zM151 0h1v1h-1zM160 0h1v1h-1zM170 0h1v1h-1zM179 0h1v1h-1zM189 0h1v1h-1zM198 0h1v1h-1zM208 0h1v1h-1zM217 0h1v1h-1zM227 0h1v1h-1zM236 0h1v1h-1zM246 0h1v1h-1zM255 0h1v1h-1zM264 0h1v1h-1zM274 0h1v1h-1zM283 0h1v1h-1zM293 0h1v1h-1zM302 0h1v1h-1zM312 0h1v1h-1zM321 0h1v1h-1zM331 0h1v1h-1zM340 0h1v1h-1zM350 0h1v1h-1zM359 0h1v1h-1zM369 0h1v1h-1zM378 0h1v1h-1zM387 0h1v1h-1zM397 0h1v1h-1zM406 0h1v1h-1zM416 0h1v1h-1zM425 0h1v1h-1zM435 0h1v1h-1zM444 0h1v1h-1zM454 0h1v1h-1zM463 0h1v1h-1zM473 0h1v1h-1zM482 0h1v1h-1zM492 0h1v1h-1zM501 0h1v1h-1zM510 0h1v1h-1zM520 0h1v1h-1zM529 0h1v1h-1zM539 0h1v1h-1zM548 0h1v1h-1zM558 0h1v1h-1zM567 0h1v1h-1zM577 0h1v1h-1zM586 0h1v1h-1zM596 0h1v1h-1zM605 0h1v1h-1zM615 0h1v1h-1zM624 0h1v1h-1zM633 0h1v1h-1zM643 0h1v1h-1zM652 0h1v1h-1zM662 0h1v1h-1zM671 0h1v1h-1zM681 0h1v1h-1zM690 0h1v1h-1zM700 0h1v1h-1zM709 0h1v1h-1z"/><path transform="translate(0 276)" d="M9 0h1v1h-1zM18 0h1v1h-1zM28 0h1v1h-1zM37 0h1v1h-1zM47 0h1v1h-1zM56 0h1v1h-1zM66 0h1v1h-1zM75 0h1v1h-1zM85 0h1v1h-1zM94 0h1v1h-1zM104 0h1v1h-1zM113 0h1v1h-1zM123 0h1v1h-1zM132 0h1v1h-1zM141 0h1v1h-1zM151 0h1v1h-1zM160 0h1v1h-1zM170 0h1v1h-1zM179 0h1v1h-1zM189 0h1v1h-1zM198 0h1v1h-1zM208 0h1v1h-1zM217 0h1v1h-1zM227 0h1v1h-1zM236 0h1v1h-1zM246 0h1v1h-1zM255 0h1v1h-1zM264 0h1v1h-1zM274 0h1v1h-1zM283 0h1v1h-1zM293 0h1v1h-1zM302 0h1v1h-1zM312 0h1v1h-1zM321 0h1v1h-1zM331 0h1v1h-1zM340 0h1v1h-1zM350 0h1v1h-1zM359 0h1v1h-1zM369 0h1v1h-1zM378 0h1v1h-1zM387 0h1v1h-1zM397 0h1v1h-1zM406 0h1v1h-1zM416 0h1v1h-1zM425 0h1v1h-1zM435 0h1v1h-1zM444 0h1v1h-1zM454 0h1v1h-1zM463 0h1v1h-1zM473 0h1v1h-1zM482 0h1v1h-1zM492 0h1v1h-1zM501 0h1v1h-1zM510 0h1v1h-1zM520 0h1v1h-1zM529 0h1v1h-1zM539 0h1v1h-1zM548 0h1v1h-1zM558 0h1v1h-1zM567 0h1v1h-1zM577 0h1v1h-1zM586 0h1v1h-1zM596 0h1v1h-1zM605 0h1v1h-1zM615 0h1v1h-1zM624 0h1v1h-1zM633 0h1v1h-1zM643 0h1v1h-1zM652 0h1v1h-1zM662 0h1v1h-1zM671 0h1v1h-1zM681 0h1v1h-1zM690 0h1v1h-1zM700 0h1v1h-1zM709 0h1v1h-1z"/><path transform="translate(0 285)" d="M9 0h1v1h-1zM18 0h1v1h-1zM28 0h1v1h-1zM37 0h1v1h-1zM47 0h1v1h-1zM56 0h1v1h-1zM66 0h1v1h-1zM75 0h1v1h-1zM85 0h1v1h-1zM94 0h1v1h-1zM104 0h1v1h-1zM113 0h1v1h-1zM123 0h1v1h-1zM132 0h1v1h-1zM141 0h1v1h-1zM151 0h1v1h-1zM160 0h1v1h-1zM170 0h1v1h-1zM179 0h1v1h-1zM189 0h1v1h-1zM198 0h1v1h-1zM208 0h1v1h-1zM217 0h1v1h-1zM227 0h1v1h-1zM236 0h1v1h-1zM246 0h1v1h-1zM255 0h1v1h-1zM264 0h1v1h-1zM274 0h1v1h-1zM283 0h1v1h-1zM293 0h1v1h-1zM302 0h1v1h-1zM312 0h1v1h-1zM321 0h1v1h-1zM331 0h1v1h-1zM340 0h1v1h-1zM350 0h1v1h-1zM359 0h1v1h-1zM369 0h1v1h-1zM378 0h1v1h-1zM387 0h1v1h-1zM397 0h1v1h-1zM406 0h1v1h-1zM416 0h1v1h-1zM425 0h1v1h-1zM435 0h1v1h-1zM444 0h1v1h-1zM454 0h1v1h-1zM463 0h1v1h-1zM473 0h1v1h-1zM482 0h1v1h-1zM492 0h1v1h-1zM501 0h1v1h-1zM510 0h1v1h-1zM520 0h1v1h-1zM529 0h1v1h-1zM539 0h1v1h-1zM548 0h1v1h-1zM558 0h1v1h-1zM567 0h1v1h-1zM577 0h1v1h-1zM586 0h1v1h-1zM596 0h1v1h-1zM605 0h1v1h-1zM615 0h1v1h-1zM624 0h1v1h-1zM633 0h1v1h-1zM643 0h1v1h-1zM652 0h1v1h-1zM662 0h1v1h-1zM671 0h1v1h-1zM681 0h1v1h-1zM690 0h1v1h-1zM700 0h1v1h-1zM709 0h1v1h-1z"/><path transform="translate(0 295)" d="M9 0h1v1h-1zM18 0h1v1h-1zM28 0h1v1h-1zM37 0h1v1h-1zM47 0h1v1h-1zM56 0h1v1h-1zM66 0h1v1h-1zM75 0h1v1h-1zM85 0h1v1h-1zM94 0h1v1h-1zM104 0h1v1h-1zM113 0h1v1h-1zM123 0h1v1h-1zM132 0h1v1h-1zM141 0h1v1h-1zM151 0h1v1h-1zM160 0h1v1h-1zM170 0h1v1h-1zM179 0h1v1h-1zM189 0h1v1h-1zM198 0h1v1h-1zM208 0h1v1h-1zM217 0h1v1h-1zM227 0h1v1h-1zM236 0h1v1h-1zM246 0h1v1h-1zM255 0h1v1h-1zM264 0h1v1h-1zM274 0h1v1h-1zM283 0h1v1h-1zM293 0h1v1h-1zM302 0h1v1h-1zM312 0h1v1h-1zM321 0h1v1h-1zM331 0h1v1h-1zM340 0h1v1h-1zM350 0h1v1h-1zM359 0h1v1h-1zM369 0h1v1h-1zM378 0h1v1h-1zM387 0h1v1h-1zM397 0h1v1h-1zM406 0h1v1h-1zM416 0h1v1h-1zM425 0h1v1h-1zM435 0h1v1h-1zM444 0h1v1h-1zM454 0h1v1h-1zM463 0h1v1h-1zM473 0h1v1h-1zM482 0h1v1h-1zM492 0h1v1h-1zM501 0h1v1h-1zM510 0h1v1h-1zM520 0h1v1h-1zM529 0h1v1h-1zM539 0h1v1h-1zM548 0h1v1h-1zM558 0h1v1h-1zM567 0h1v1h-1zM577 0h1v1h-1zM586 0h1v1h-1zM596 0h1v1h-1zM605 0h1v1h-1zM615 0h1v1h-1zM624 0h1v1h-1zM633 0h1v1h-1zM643 0h1v1h-1zM652 0h1v1h-1zM662 0h1v1h-1zM671 0h1v1h-1zM681 0h1v1h-1zM690 0h1v1h-1zM700 0h1v1h-1zM709 0h1v1h-1z"/><path transform="translate(0 304)" d="M9 0h1v1h-1zM18 0h1v1h-1zM28 0h1v1h-1zM37 0h1v1h-1zM47 0h1v1h-1zM56 0h1v1h-1zM66 0h1v1h-1zM75 0h1v1h-1zM85 0h1v1h-1zM94 0h1v1h-1zM104 0h1v1h-1zM113 0h1v1h-1zM123 0h1v1h-1zM132 0h1v1h-1zM141 0h1v1h-1zM151 0h1v1h-1zM160 0h1v1h-1zM170 0h1v1h-1zM179 0h1v1h-1zM189 0h1v1h-1zM198 0h1v1h-1zM208 0h1v1h-1zM217 0h1v1h-1zM227 0h1v1h-1zM236 0h1v1h-1zM246 0h1v1h-1zM255 0h1v1h-1zM264 0h1v1h-1zM274 0h1v1h-1zM283 0h1v1h-1zM293 0h1v1h-1zM302 0h1v1h-1zM312 0h1v1h-1zM321 0h1v1h-1zM331 0h1v1h-1zM340 0h1v1h-1zM350 0h1v1h-1zM359 0h1v1h-1zM369 0h1v1h-1zM378 0h1v1h-1zM387 0h1v1h-1zM397 0h1v1h-1zM406 0h1v1h-1zM416 0h1v1h-1zM425 0h1v1h-1zM435 0h1v1h-1zM444 0h1v1h-1zM454 0h1v1h-1zM463 0h1v1h-1zM473 0h1v1h-1zM482 0h1v1h-1zM492 0h1v1h-1zM501 0h1v1h-1zM510 0h1v1h-1zM520 0h1v1h-1zM529 0h1v1h-1zM539 0h1v1h-1zM548 0h1v1h-1zM558 0h1v1h-1zM567 0h1v1h-1zM577 0h1v1h-1zM586 0h1v1h-1zM596 0h1v1h-1zM605 0h1v1h-1zM615 0h1v1h-1zM624 0h1v1h-1zM633 0h1v1h-1zM643 0h1v1h-1zM652 0h1v1h-1zM662 0h1v1h-1zM671 0h1v1h-1zM681 0h1v1h-1zM690 0h1v1h-1zM700 0h1v1h-1zM709 0h1v1h-1z"/><path transform="translate(0 314)" d="M9 0h1v1h-1zM18 0h1v1h-1zM28 0h1v1h-1zM37 0h1v1h-1zM47 0h1v1h-1zM56 0h1v1h-1zM66 0h1v1h-1zM75 0h1v1h-1zM85 0h1v1h-1zM94 0h1v1h-1zM104 0h1v1h-1zM113 0h1v1h-1zM123 0h1v1h-1zM132 0h1v1h-1zM141 0h1v1h-1zM151 0h1v1h-1zM160 0h1v1h-1zM170 0h1v1h-1zM179 0h1v1h-1zM189 0h1v1h-1zM198 0h1v1h-1zM208 0h1v1h-1zM217 0h1v1h-1zM227 0h1v1h-1zM236 0h1v1h-1zM246 0h1v1h-1zM255 0h1v1h-1zM264 0h1v1h-1zM274 0h1v1h-1zM283 0h1v1h-1zM293 0h1v1h-1zM302 0h1v1h-1zM312 0h1v1h-1zM321 0h1v1h-1zM331 0h1v1h-1zM340 0h1v1h-1zM350 0h1v1h-1zM359 0h1v1h-1zM369 0h1v1h-1zM378 0h1v1h-1zM387 0h1v1h-1zM397 0h1v1h-1zM406 0h1v1h-1zM416 0h1v1h-1zM425 0h1v1h-1zM435 0h1v1h-1zM444 0h1v1h-1zM454 0h1v1h-1zM463 0h1v1h-1zM473 0h1v1h-1zM482 0h1v1h-1zM492 0h1v1h-1zM501 0h1v1h-1zM510 0h1v1h-1zM520 0h1v1h-1zM529 0h1v1h-1zM539 0h1v1h-1zM548 0h1v1h-1zM558 0h1v1h-1zM567 0h1v1h-1zM577 0h1v1h-1zM586 0h1v1h-1zM596 0h1v1h-1zM605 0h1v1h-1zM615 0h1v1h-1zM624 0h1v1h-1zM633 0h1v1h-1zM643 0h1v1h-1zM652 0h1v1h-1zM662 0h1v1h-1zM671 0h1v1h-1zM681 0h1v1h-1zM690 0h1v1h-1zM700 0h1v1h-1zM709 0h1v1h-1z"/><path transform="translate(0 323)" d="M9 0h1v1h-1zM18 0h1v1h-1zM28 0h1v1h-1zM37 0h1v1h-1zM47 0h1v1h-1zM56 0h1v1h-1zM66 0h1v1h-1zM75 0h1v1h-1zM85 0h1v1h-1zM94 0h1v1h-1zM104 0h1v1h-1zM113 0h1v1h-1zM123 0h1v1h-1zM132 0h1v1h-1zM141 0h1v1h-1zM151 0h1v1h-1zM160 0h1v1h-1zM170 0h1v1h-1zM179 0h1v1h-1zM189 0h1v1h-1zM198 0h1v1h-1zM208 0h1v1h-1zM217 0h1v1h-1zM227 0h1v1h-1zM236 0h1v1h-1zM246 0h1v1h-1zM255 0h1v1h-1zM264 0h1v1h-1zM274 0h1v1h-1zM283 0h1v1h-1zM293 0h1v1h-1zM302 0h1v1h-1zM312 0h1v1h-1zM321 0h1v1h-1zM331 0h1v1h-1zM340 0h1v1h-1zM350 0h1v1h-1zM359 0h1v1h-1zM369 0h1v1h-1zM378 0h1v1h-1zM387 0h1v1h-1zM397 0h1v1h-1zM406 0h1v1h-1zM416 0h1v1h-1zM425 0h1v1h-1zM435 0h1v1h-1zM444 0h1v1h-1zM454 0h1v1h-1zM463 0h1v1h-1zM473 0h1v1h-1zM482 0h1v1h-1zM492 0h1v1h-1zM501 0h1v1h-1zM510 0h1v1h-1zM520 0h1v1h-1zM529 0h1v1h-1zM539 0h1v1h-1zM548 0h1v1h-1zM558 0h1v1h-1zM567 0h1v1h-1zM577 0h1v1h-1zM586 0h1v1h-1zM596 0h1v1h-1zM605 0h1v1h-1zM615 0h1v1h-1zM624 0h1v1h-1zM633 0h1v1h-1zM643 0h1v1h-1zM652 0h1v1h-1zM662 0h1v1h-1zM671 0h1v1h-1zM681 0h1v1h-1zM690 0h1v1h-1zM700 0h1v1h-1zM709 0h1v1h-1z"/><path transform="translate(0 333)" d="M9 0h1v1h-1zM18 0h1v1h-1zM28 0h1v1h-1zM37 0h1v1h-1zM47 0h1v1h-1zM56 0h1v1h-1zM66 0h1v1h-1zM75 0h1v1h-1zM85 0h1v1h-1zM94 0h1v1h-1zM104 0h1v1h-1zM113 0h1v1h-1zM123 0h1v1h-1zM132 0h1v1h-1zM141 0h1v1h-1zM151 0h1v1h-1zM160 0h1v1h-1zM170 0h1v1h-1zM179 0h1v1h-1zM189 0h1v1h-1zM198 0h1v1h-1zM208 0h1v1h-1zM217 0h1v1h-1zM227 0h1v1h-1zM236 0h1v1h-1zM246 0h1v1h-1zM255 0h1v1h-1zM264 0h1v1h-1zM274 0h1v1h-1zM283 0h1v1h-1zM293 0h1v1h-1zM302 0h1v1h-1zM312 0h1v1h-1zM321 0h1v1h-1zM331 0h1v1h-1zM340 0h1v1h-1zM350 0h1v1h-1zM359 0h1v1h-1zM369 0h1v1h-1zM378 0h1v1h-1zM387 0h1v1h-1zM397 0h1v1h-1zM406 0h1v1h-1zM416 0h1v1h-1zM425 0h1v1h-1zM435 0h1v1h-1zM444 0h1v1h-1zM454 0h1v1h-1zM463 0h1v1h-1zM473 0h1v1h-1zM482 0h1v1h-1zM492 0h1v1h-1zM501 0h1v1h-1zM510 0h1v1h-1zM520 0h1v1h-1zM529 0h1v1h-1zM539 0h1v1h-1zM548 0h1v1h-1zM558 0h1v1h-1zM567 0h1v1h-1zM577 0h1v1h-1zM586 0h1v1h-1zM596 0h1v1h-1zM605 0h1v1h-1zM615 0h1v1h-1zM624 0h1v1h-1zM633 0h1v1h-1zM643 0h1v1h-1zM652 0h1v1h-1zM662 0h1v1h-1zM671 0h1v1h-1zM681 0h1v1h-1zM690 0h1v1h-1zM700 0h1v1h-1zM709 0h1v1h-1z"/><path transform="translate(0 342)" d="M9 0h1v1h-1zM18 0h1v1h-1zM28 0h1v1h-1zM37 0h1v1h-1zM47 0h1v1h-1zM56 0h1v1h-1zM66 0h1v1h-1zM75 0h1v1h-1zM85 0h1v1h-1zM94 0h1v1h-1zM104 0h1v1h-1zM113 0h1v1h-1zM123 0h1v1h-1zM132 0h1v1h-1zM141 0h1v1h-1zM151 0h1v1h-1zM160 0h1v1h-1zM170 0h1v1h-1zM179 0h1v1h-1zM189 0h1v1h-1zM198 0h1v1h-1zM208 0h1v1h-1zM217 0h1v1h-1zM227 0h1v1h-1zM236 0h1v1h-1zM246 0h1v1h-1zM255 0h1v1h-1zM264 0h1v1h-1zM274 0h1v1h-1zM283 0h1v1h-1zM293 0h1v1h-1zM302 0h1v1h-1zM312 0h1v1h-1zM321 0h1v1h-1zM331 0h1v1h-1zM340 0h1v1h-1zM350 0h1v1h-1zM359 0h1v1h-1zM369 0h1v1h-1zM378 0h1v1h-1zM387 0h1v1h-1zM397 0h1v1h-1zM406 0h1v1h-1zM416 0h1v1h-1zM425 0h1v1h-1zM435 0h1v1h-1zM444 0h1v1h-1zM454 0h1v1h-1zM463 0h1v1h-1zM473 0h1v1h-1zM482 0h1v1h-1zM492 0h1v1h-1zM501 0h1v1h-1zM510 0h1v1h-1zM520 0h1v1h-1zM529 0h1v1h-1zM539 0h1v1h-1zM548 0h1v1h-1zM558 0h1v1h-1zM567 0h1v1h-1zM577 0h1v1h-1zM586 0h1v1h-1zM596 0h1v1h-1zM605 0h1v1h-1zM615 0h1v1h-1zM624 0h1v1h-1zM633 0h1v1h-1zM643 0h1v1h-1zM652 0h1v1h-1zM662 0h1v1h-1zM671 0h1v1h-1zM681 0h1v1h-1zM690 0h1v1h-1zM700 0h1v1h-1zM709 0h1v1h-1z"/><path transform="translate(0 352)" d="M9 0h1v1h-1zM18 0h1v1h-1zM28 0h1v1h-1zM37 0h1v1h-1zM47 0h1v1h-1zM56 0h1v1h-1zM66 0h1v1h-1zM75 0h1v1h-1zM85 0h1v1h-1zM94 0h1v1h-1zM104 0h1v1h-1zM113 0h1v1h-1zM123 0h1v1h-1zM132 0h1v1h-1zM141 0h1v1h-1zM151 0h1v1h-1zM160 0h1v1h-1zM170 0h1v1h-1zM179 0h1v1h-1zM189 0h1v1h-1zM198 0h1v1h-1zM208 0h1v1h-1zM217 0h1v1h-1zM227 0h1v1h-1zM236 0h1v1h-1zM246 0h1v1h-1zM255 0h1v1h-1zM264 0h1v1h-1zM274 0h1v1h-1zM283 0h1v1h-1zM293 0h1v1h-1zM302 0h1v1h-1zM312 0h1v1h-1zM321 0h1v1h-1zM331 0h1v1h-1zM340 0h1v1h-1zM350 0h1v1h-1zM359 0h1v1h-1zM369 0h1v1h-1zM378 0h1v1h-1zM387 0h1v1h-1zM397 0h1v1h-1zM406 0h1v1h-1zM416 0h1v1h-1zM425 0h1v1h-1zM435 0h1v1h-1zM444 0h1v1h-1zM454 0h1v1h-1zM463 0h1v1h-1zM473 0h1v1h-1zM482 0h1v1h-1zM492 0h1v1h-1zM501 0h1v1h-1zM510 0h1v1h-1zM520 0h1v1h-1zM529 0h1v1h-1zM539 0h1v1h-1zM548 0h1v1h-1zM558 0h1v1h-1zM567 0h1v1h-1zM577 0h1v1h-1zM586 0h1v1h-1zM596 0h1v1h-1zM605 0h1v1h-1zM615 0h1v1h-1zM624 0h1v1h-1zM633 0h1v1h-1zM643 0h1v1h-1zM652 0h1v1h-1zM662 0h1v1h-1zM671 0h1v1h-1zM681 0h1v1h-1zM690 0h1v1h-1zM700 0h1v1h-1zM709 0h1v1h-1z"/><path transform="translate(0 361)" d="M9 0h1v1h-1zM18 0h1v1h-1zM28 0h1v1h-1zM37 0h1v1h-1zM47 0h1v1h-1zM56 0h1v1h-1zM66 0h1v1h-1zM75 0h1v1h-1zM85 0h1v1h-1zM94 0h1v1h-1zM104 0h1v1h-1zM113 0h1v1h-1zM123 0h1v1h-1zM132 0h1v1h-1zM141 0h1v1h-1zM151 0h1v1h-1zM160 0h1v1h-1zM170 0h1v1h-1zM179 0h1v1h-1zM189 0h1v1h-1zM198 0h1v1h-1zM208 0h1v1h-1zM217 0h1v1h-1zM227 0h1v1h-1zM236 0h1v1h-1zM246 0h1v1h-1zM255 0h1v1h-1zM264 0h1v1h-1zM274 0h1v1h-1zM283 0h1v1h-1zM293 0h1v1h-1zM302 0h1v1h-1zM312 0h1v1h-1zM321 0h1v1h-1zM331 0h1v1h-1zM340 0h1v1h-1zM350 0h1v1h-1zM359 0h1v1h-1zM369 0h1v1h-1zM378 0h1v1h-1zM387 0h1v1h-1zM397 0h1v1h-1zM406 0h1v1h-1zM416 0h1v1h-1zM425 0h1v1h-1zM435 0h1v1h-1zM444 0h1v1h-1zM454 0h1v1h-1zM463 0h1v1h-1zM473 0h1v1h-1zM482 0h1v1h-1zM492 0h1v1h-1zM501 0h1v1h-1zM510 0h1v1h-1zM520 0h1v1h-1zM529 0h1v1h-1zM539 0h1v1h-1zM548 0h1v1h-1zM558 0h1v1h-1zM567 0h1v1h-1zM577 0h1v1h-1zM586 0h1v1h-1zM596 0h1v1h-1zM605 0h1v1h-1zM615 0h1v1h-1zM624 0h1v1h-1zM633 0h1v1h-1zM643 0h1v1h-1zM652 0h1v1h-1zM662 0h1v1h-1zM671 0h1v1h-1zM681 0h1v1h-1zM690 0h1v1h-1zM700 0h1v1h-1zM709 0h1v1h-1z"/><path transform="translate(0 370)" d="M9 0h1v1h-1zM18 0h1v1h-1zM28 0h1v1h-1zM37 0h1v1h-1zM47 0h1v1h-1zM56 0h1v1h-1zM66 0h1v1h-1zM75 0h1v1h-1zM85 0h1v1h-1zM94 0h1v1h-1zM104 0h1v1h-1zM113 0h1v1h-1zM123 0h1v1h-1zM132 0h1v1h-1zM141 0h1v1h-1zM151 0h1v1h-1zM160 0h1v1h-1zM170 0h1v1h-1zM179 0h1v1h-1zM189 0h1v1h-1zM198 0h1v1h-1zM208 0h1v1h-1zM217 0h1v1h-1zM227 0h1v1h-1zM236 0h1v1h-1zM246 0h1v1h-1zM255 0h1v1h-1zM264 0h1v1h-1zM274 0h1v1h-1zM283 0h1v1h-1zM293 0h1v1h-1zM302 0h1v1h-1zM312 0h1v1h-1zM321 0h1v1h-1zM331 0h1v1h-1zM340 0h1v1h-1zM350 0h1v1h-1zM359 0h1v1h-1zM369 0h1v1h-1zM378 0h1v1h-1zM387 0h1v1h-1zM397 0h1v1h-1zM406 0h1v1h-1zM416 0h1v1h-1zM425 0h1v1h-1zM435 0h1v1h-1zM444 0h1v1h-1zM454 0h1v1h-1zM463 0h1v1h-1zM473 0h1v1h-1zM482 0h1v1h-1zM492 0h1v1h-1zM501 0h1v1h-1zM510 0h1v1h-1zM520 0h1v1h-1zM529 0h1v1h-1zM539 0h1v1h-1zM548 0h1v1h-1zM558 0h1v1h-1zM567 0h1v1h-1zM577 0h1v1h-1zM586 0h1v1h-1zM596 0h1v1h-1zM605 0h1v1h-1zM615 0h1v1h-1zM624 0h1v1h-1zM633 0h1v1h-1zM643 0h1v1h-1zM652 0h1v1h-1zM662 0h1v1h-1zM671 0h1v1h-1zM681 0h1v1h-1zM690 0h1v1h-1zM700 0h1v1h-1zM709 0h1v1h-1z"/><path transform="translate(0 380)" d="M9 0h1v1h-1zM18 0h1v1h-1zM28 0h1v1h-1zM37 0h1v1h-1zM47 0h1v1h-1zM56 0h1v1h-1zM66 0h1v1h-1zM75 0h1v1h-1zM85 0h1v1h-1zM94 0h1v1h-1zM104 0h1v1h-1zM113 0h1v1h-1zM123 0h1v1h-1zM132 0h1v1h-1zM141 0h1v1h-1zM151 0h1v1h-1zM160 0h1v1h-1zM170 0h1v1h-1zM179 0h1v1h-1zM189 0h1v1h-1zM198 0h1v1h-1zM208 0h1v1h-1zM217 0h1v1h-1zM227 0h1v1h-1zM236 0h1v1h-1zM246 0h1v1h-1zM255 0h1v1h-1zM264 0h1v1h-1zM274 0h1v1h-1zM283 0h1v1h-1zM293 0h1v1h-1zM302 0h1v1h-1zM312 0h1v1h-1zM321 0h1v1h-1zM331 0h1v1h-1zM340 0h1v1h-1zM350 0h1v1h-1zM359 0h1v1h-1zM369 0h1v1h-1zM378 0h1v1h-1zM387 0h1v1h-1zM397 0h1v1h-1zM406 0h1v1h-1zM416 0h1v1h-1zM425 0h1v1h-1zM435 0h1v1h-1zM444 0h1v1h-1zM454 0h1v1h-1zM463 0h1v1h-1zM473 0h1v1h-1zM482 0h1v1h-1zM492 0h1v1h-1zM501 0h1v1h-1zM510 0h1v1h-1zM520 0h1v1h-1zM529 0h1v1h-1zM539 0h1v1h-1zM548 0h1v1h-1zM558 0h1v1h-1zM567 0h1v1h-1zM577 0h1v1h-1zM586 0h1v1h-1zM596 0h1v1h-1zM605 0h1v1h-1zM615 0h1v1h-1zM624 0h1v1h-1zM633 0h1v1h-1zM643 0h1v1h-1zM652 0h1v1h-1zM662 0h1v1h-1zM671 0h1v1h-1zM681 0h1v1h-1zM690 0h1v1h-1zM700 0h1v1h-1zM709 0h1v1h-1z"/><path transform="translate(0 389)" d="M9 0h1v1h-1zM18 0h1v1h-1zM28 0h1v1h-1zM37 0h1v1h-1zM47 0h1v1h-1zM56 0h1v1h-1zM66 0h1v1h-1zM75 0h1v1h-1zM85 0h1v1h-1zM94 0h1v1h-1zM104 0h1v1h-1zM113 0h1v1h-1zM123 0h1v1h-1zM132 0h1v1h-1zM141 0h1v1h-1zM151 0h1v1h-1zM160 0h1v1h-1zM170 0h1v1h-1zM179 0h1v1h-1zM189 0h1v1h-1zM198 0h1v1h-1zM208 0h1v1h-1zM217 0h1v1h-1zM227 0h1v1h-1zM236 0h1v1h-1zM246 0h1v1h-1zM255 0h1v1h-1zM264 0h1v1h-1zM274 0h1v1h-1zM283 0h1v1h-1zM293 0h1v1h-1zM302 0h1v1h-1zM312 0h1v1h-1zM321 0h1v1h-1zM331 0h1v1h-1zM340 0h1v1h-1zM350 0h1v1h-1zM359 0h1v1h-1zM369 0h1v1h-1zM378 0h1v1h-1zM387 0h1v1h-1zM397 0h1v1h-1zM406 0h1v1h-1zM416 0h1v1h-1zM425 0h1v1h-1zM435 0h1v1h-1zM444 0h1v1h-1zM454 0h1v1h-1zM463 0h1v1h-1zM473 0h1v1h-1zM482 0h1v1h-1zM492 0h1v1h-1zM501 0h1v1h-1zM510 0h1v1h-1zM520 0h1v1h-1zM529 0h1v1h-1zM539 0h1v1h-1zM548 0h1v1h-1zM558 0h1v1h-1zM567 0h1v1h-1zM577 0h1v1h-1zM586 0h1v1h-1zM596 0h1v1h-1zM605 0h1v1h-1zM615 0h1v1h-1zM624 0h1v1h-1zM633 0h1v1h-1zM643 0h1v1h-1zM652 0h1v1h-1zM662 0h1v1h-1zM671 0h1v1h-1zM681 0h1v1h-1zM690 0h1v1h-1zM700 0h1v1h-1zM709 0h1v1h-1z"/><path transform="translate(0 399)" d="M9 0h1v1h-1zM18 0h1v1h-1zM28 0h1v1h-1zM37 0h1v1h-1zM47 0h1v1h-1zM56 0h1v1h-1zM66 0h1v1h-1zM75 0h1v1h-1zM85 0h1v1h-1zM94 0h1v1h-1zM104 0h1v1h-1zM113 0h1v1h-1zM123 0h1v1h-1zM132 0h1v1h-1zM141 0h1v1h-1zM151 0h1v1h-1zM160 0h1v1h-1zM170 0h1v1h-1zM179 0h1v1h-1zM189 0h1v1h-1zM198 0h1v1h-1zM208 0h1v1h-1zM217 0h1v1h-1zM227 0h1v1h-1zM236 0h1v1h-1zM246 0h1v1h-1zM255 0h1v1h-1zM264 0h1v1h-1zM274 0h1v1h-1zM283 0h1v1h-1zM293 0h1v1h-1zM302 0h1v1h-1zM312 0h1v1h-1zM321 0h1v1h-1zM331 0h1v1h-1zM340 0h1v1h-1zM350 0h1v1h-1zM359 0h1v1h-1zM369 0h1v1h-1zM378 0h1v1h-1zM387 0h1v1h-1zM397 0h1v1h-1zM406 0h1v1h-1zM416 0h1v1h-1zM425 0h1v1h-1zM435 0h1v1h-1zM444 0h1v1h-1zM454 0h1v1h-1zM463 0h1v1h-1zM473 0h1v1h-1zM482 0h1v1h-1zM492 0h1v1h-1zM501 0h1v1h-1zM510 0h1v1h-1zM520 0h1v1h-1zM529 0h1v1h-1zM539 0h1v1h-1zM548 0h1v1h-1zM558 0h1v1h-1zM567 0h1v1h-1zM577 0h1v1h-1zM586 0h1v1h-1zM596 0h1v1h-1zM605 0h1v1h-1zM615 0h1v1h-1zM624 0h1v1h-1zM633 0h1v1h-1zM643 0h1v1h-1zM652 0h1v1h-1zM662 0h1v1h-1zM671 0h1v1h-1zM681 0h1v1h-1zM690 0h1v1h-1zM700 0h1v1h-1zM709 0h1v1h-1z"/><path transform="translate(0 408)" d="M9 0h1v1h-1zM18 0h1v1h-1zM28 0h1v1h-1zM37 0h1v1h-1zM47 0h1v1h-1zM56 0h1v1h-1zM66 0h1v1h-1zM75 0h1v1h-1zM85 0h1v1h-1zM94 0h1v1h-1zM104 0h1v1h-1zM113 0h1v1h-1zM123 0h1v1h-1zM132 0h1v1h-1zM141 0h1v1h-1zM151 0h1v1h-1zM160 0h1v1h-1zM170 0h1v1h-1zM179 0h1v1h-1zM189 0h1v1h-1zM198 0h1v1h-1zM208 0h1v1h-1zM217 0h1v1h-1zM227 0h1v1h-1zM236 0h1v1h-1zM246 0h1v1h-1zM255 0h1v1h-1zM264 0h1v1h-1zM274 0h1v1h-1zM283 0h1v1h-1zM293 0h1v1h-1zM302 0h1v1h-1zM312 0h1v1h-1zM321 0h1v1h-1zM331 0h1v1h-1zM340 0h1v1h-1zM350 0h1v1h-1zM359 0h1v1h-1zM369 0h1v1h-1zM378 0h1v1h-1zM387 0h1v1h-1zM397 0h1v1h-1zM406 0h1v1h-1zM416 0h1v1h-1zM425 0h1v1h-1zM435 0h1v1h-1zM444 0h1v1h-1zM454 0h1v1h-1zM463 0h1v1h-1zM473 0h1v1h-1zM482 0h1v1h-1zM492 0h1v1h-1zM501 0h1v1h-1zM510 0h1v1h-1zM520 0h1v1h-1zM529 0h1v1h-1zM539 0h1v1h-1zM548 0h1v1h-1zM558 0h1v1h-1zM567 0h1v1h-1zM577 0h1v1h-1zM586 0h1v1h-1zM596 0h1v1h-1zM605 0h1v1h-1zM615 0h1v1h-1zM624 0h1v1h-1zM633 0h1v1h-1zM643 0h1v1h-1zM652 0h1v1h-1zM662 0h1v1h-1zM671 0h1v1h-1zM681 0h1v1h-1zM690 0h1v1h-1zM700 0h1v1h-1zM709 0h1v1h-1z"/><path transform="translate(0 418)" d="M9 0h1v1h-1zM18 0h1v1h-1zM28 0h1v1h-1zM37 0h1v1h-1zM47 0h1v1h-1zM56 0h1v1h-1zM66 0h1v1h-1zM75 0h1v1h-1zM85 0h1v1h-1zM94 0h1v1h-1zM104 0h1v1h-1zM113 0h1v1h-1zM123 0h1v1h-1zM132 0h1v1h-1zM141 0h1v1h-1zM151 0h1v1h-1zM160 0h1v1h-1zM170 0h1v1h-1zM179 0h1v1h-1zM189 0h1v1h-1zM198 0h1v1h-1zM208 0h1v1h-1zM217 0h1v1h-1zM227 0h1v1h-1zM236 0h1v1h-1zM246 0h1v1h-1zM255 0h1v1h-1zM264 0h1v1h-1zM274 0h1v1h-1zM283 0h1v1h-1zM293 0h1v1h-1zM302 0h1v1h-1zM312 0h1v1h-1zM321 0h1v1h-1zM331 0h1v1h-1zM340 0h1v1h-1zM350 0h1v1h-1zM359 0h1v1h-1zM369 0h1v1h-1zM378 0h1v1h-1zM387 0h1v1h-1zM397 0h1v1h-1zM406 0h1v1h-1zM416 0h1v1h-1zM425 0h1v1h-1zM435 0h1v1h-1zM444 0h1v1h-1zM454 0h1v1h-1zM463 0h1v1h-1zM473 0h1v1h-1zM482 0h1v1h-1zM492 0h1v1h-1zM501 0h1v1h-1zM510 0h1v1h-1zM520 0h1v1h-1zM529 0h1v1h-1zM539 0h1v1h-1zM548 0h1v1h-1zM558 0h1v1h-1zM567 0h1v1h-1zM577 0h1v1h-1zM586 0h1v1h-1zM596 0h1v1h-1zM605 0h1v1h-1zM615 0h1v1h-1zM624 0h1v1h-1zM633 0h1v1h-1zM643 0h1v1h-1zM652 0h1v1h-1zM662 0h1v1h-1zM671 0h1v1h-1zM681 0h1v1h-1zM690 0h1v1h-1zM700 0h1v1h-1zM709 0h1v1h-1z"/><path transform="translate(0 427)" d="M9 0h1v1h-1zM18 0h1v1h-1zM28 0h1v1h-1zM37 0h1v1h-1zM47 0h1v1h-1zM56 0h1v1h-1zM66 0h1v1h-1zM75 0h1v1h-1zM85 0h1v1h-1zM94 0h1v1h-1zM104 0h1v1h-1zM113 0h1v1h-1zM123 0h1v1h-1zM132 0h1v1h-1zM141 0h1v1h-1zM151 0h1v1h-1zM160 0h1v1h-1zM170 0h1v1h-1zM179 0h1v1h-1zM189 0h1v1h-1zM198 0h1v1h-1zM208 0h1v1h-1zM217 0h1v1h-1zM227 0h1v1h-1zM236 0h1v1h-1zM246 0h1v1h-1zM255 0h1v1h-1zM264 0h1v1h-1zM274 0h1v1h-1zM283 0h1v1h-1zM293 0h1v1h-1zM302 0h1v1h-1zM312 0h1v1h-1zM321 0h1v1h-1zM331 0h1v1h-1zM340 0h1v1h-1zM350 0h1v1h-1zM359 0h1v1h-1zM369 0h1v1h-1zM378 0h1v1h-1zM387 0h1v1h-1zM397 0h1v1h-1zM406 0h1v1h-1zM416 0h1v1h-1zM425 0h1v1h-1zM435 0h1v1h-1zM444 0h1v1h-1zM454 0h1v1h-1zM463 0h1v1h-1zM473 0h1v1h-1zM482 0h1v1h-1zM492 0h1v1h-1zM501 0h1v1h-1zM510 0h1v1h-1zM520 0h1v1h-1zM529 0h1v1h-1zM539 0h1v1h-1zM548 0h1v1h-1zM558 0h1v1h-1zM567 0h1v1h-1zM577 0h1v1h-1zM586 0h1v1h-1zM596 0h1v1h-1zM605 0h1v1h-1zM615 0h1v1h-1zM624 0h1v1h-1zM633 0h1v1h-1zM643 0h1v1h-1zM652 0h1v1h-1zM662 0h1v1h-1zM671 0h1v1h-1zM681 0h1v1h-1zM690 0h1v1h-1zM700 0h1v1h-1zM709 0h1v1h-1z"/><path transform="translate(0 437)" d="M9 0h1v1h-1zM18 0h1v1h-1zM28 0h1v1h-1zM37 0h1v1h-1zM47 0h1v1h-1zM56 0h1v1h-1zM66 0h1v1h-1zM75 0h1v1h-1zM85 0h1v1h-1zM94 0h1v1h-1zM104 0h1v1h-1zM113 0h1v1h-1zM123 0h1v1h-1zM132 0h1v1h-1zM141 0h1v1h-1zM151 0h1v1h-1zM160 0h1v1h-1zM170 0h1v1h-1zM179 0h1v1h-1zM189 0h1v1h-1zM198 0h1v1h-1zM208 0h1v1h-1zM217 0h1v1h-1zM227 0h1v1h-1zM236 0h1v1h-1zM246 0h1v1h-1zM255 0h1v1h-1zM264 0h1v1h-1zM274 0h1v1h-1zM283 0h1v1h-1zM293 0h1v1h-1zM302 0h1v1h-1zM312 0h1v1h-1zM321 0h1v1h-1zM331 0h1v1h-1zM340 0h1v1h-1zM350 0h1v1h-1zM359 0h1v1h-1zM369 0h1v1h-1zM378 0h1v1h-1zM387 0h1v1h-1zM397 0h1v1h-1zM406 0h1v1h-1zM416 0h1v1h-1zM425 0h1v1h-1zM435 0h1v1h-1zM444 0h1v1h-1zM454 0h1v1h-1zM463 0h1v1h-1zM473 0h1v1h-1zM482 0h1v1h-1zM492 0h1v1h-1zM501 0h1v1h-1zM510 0h1v1h-1zM520 0h1v1h-1zM529 0h1v1h-1zM539 0h1v1h-1zM548 0h1v1h-1zM558 0h1v1h-1zM567 0h1v1h-1zM577 0h1v1h-1zM586 0h1v1h-1zM596 0h1v1h-1zM605 0h1v1h-1zM615 0h1v1h-1zM624 0h1v1h-1zM633 0h1v1h-1zM643 0h1v1h-1zM652 0h1v1h-1zM662 0h1v1h-1zM671 0h1v1h-1zM681 0h1v1h-1zM690 0h1v1h-1zM700 0h1v1h-1zM709 0h1v1h-1z"/><path transform="translate(0 446)" d="M9 0h1v1h-1zM18 0h1v1h-1zM28 0h1v1h-1zM37 0h1v1h-1zM47 0h1v1h-1zM56 0h1v1h-1zM66 0h1v1h-1zM75 0h1v1h-1zM85 0h1v1h-1zM94 0h1v1h-1zM104 0h1v1h-1zM113 0h1v1h-1zM123 0h1v1h-1zM132 0h1v1h-1zM141 0h1v1h-1zM151 0h1v1h-1zM160 0h1v1h-1zM170 0h1v1h-1zM179 0h1v1h-1zM189 0h1v1h-1zM198 0h1v1h-1zM208 0h1v1h-1zM217 0h1v1h-1zM227 0h1v1h-1zM236 0h1v1h-1zM246 0h1v1h-1zM255 0h1v1h-1zM264 0h1v1h-1zM274 0h1v1h-1zM283 0h1v1h-1zM293 0h1v1h-1zM302 0h1v1h-1zM312 0h1v1h-1zM321 0h1v1h-1zM331 0h1v1h-1zM340 0h1v1h-1zM350 0h1v1h-1zM359 0h1v1h-1zM369 0h1v1h-1zM378 0h1v1h-1zM387 0h1v1h-1zM397 0h1v1h-1zM406 0h1v1h-1zM416 0h1v1h-1zM425 0h1v1h-1zM435 0h1v1h-1zM444 0h1v1h-1zM454 0h1v1h-1zM463 0h1v1h-1zM473 0h1v1h-1zM482 0h1v1h-1zM492 0h1v1h-1zM501 0h1v1h-1zM510 0h1v1h-1zM520 0h1v1h-1zM529 0h1v1h-1zM539 0h1v1h-1zM548 0h1v1h-1zM558 0h1v1h-1zM567 0h1v1h-1zM577 0h1v1h-1zM586 0h1v1h-1zM596 0h1v1h-1zM605 0h1v1h-1zM615 0h1v1h-1zM624 0h1v1h-1zM633 0h1v1h-1zM643 0h1v1h-1zM652 0h1v1h-1zM662 0h1v1h-1zM671 0h1v1h-1zM681 0h1v1h-1zM690 0h1v1h-1zM700 0h1v1h-1zM709 0h1v1h-1z"/><path transform="translate(0 456)" d="M9 0h1v1h-1zM18 0h1v1h-1zM28 0h1v1h-1zM37 0h1v1h-1zM47 0h1v1h-1zM56 0h1v1h-1zM66 0h1v1h-1zM75 0h1v1h-1zM85 0h1v1h-1zM94 0h1v1h-1zM104 0h1v1h-1zM113 0h1v1h-1zM123 0h1v1h-1zM132 0h1v1h-1zM141 0h1v1h-1zM151 0h1v1h-1zM160 0h1v1h-1zM170 0h1v1h-1zM179 0h1v1h-1zM189 0h1v1h-1zM198 0h1v1h-1zM208 0h1v1h-1zM217 0h1v1h-1zM227 0h1v1h-1zM236 0h1v1h-1zM246 0h1v1h-1zM255 0h1v1h-1zM264 0h1v1h-1zM274 0h1v1h-1zM283 0h1v1h-1zM293 0h1v1h-1zM302 0h1v1h-1zM312 0h1v1h-1zM321 0h1v1h-1zM331 0h1v1h-1zM340 0h1v1h-1zM350 0h1v1h-1zM359 0h1v1h-1zM369 0h1v1h-1zM378 0h1v1h-1zM387 0h1v1h-1zM397 0h1v1h-1zM406 0h1v1h-1zM416 0h1v1h-1zM425 0h1v1h-1zM435 0h1v1h-1zM444 0h1v1h-1zM454 0h1v1h-1zM463 0h1v1h-1zM473 0h1v1h-1zM482 0h1v1h-1zM492 0h1v1h-1zM501 0h1v1h-1zM510 0h1v1h-1zM520 0h1v1h-1zM529 0h1v1h-1zM539 0h1v1h-1zM548 0h1v1h-1zM558 0h1v1h-1zM567 0h1v1h-1zM577 0h1v1h-1zM586 0h1v1h-1zM596 0h1v1h-1zM605 0h1v1h-1zM615 0h1v1h-1zM624 0h1v1h-1zM633 0h1v1h-1zM643 0h1v1h-1zM652 0h1v1h-1zM662 0h1v1h-1zM671 0h1v1h-1zM681 0h1v1h-1zM690 0h1v1h-1zM700 0h1v1h-1zM709 0h1v1h-1z"/><path transform="translate(0 465)" d="M9 0h1v1h-1zM18 0h1v1h-1zM28 0h1v1h-1zM37 0h1v1h-1zM47 0h1v1h-1zM56 0h1v1h-1zM66 0h1v1h-1zM75 0h1v1h-1zM85 0h1v1h-1zM94 0h1v1h-1zM104 0h1v1h-1zM113 0h1v1h-1zM123 0h1v1h-1zM132 0h1v1h-1zM141 0h1v1h-1zM151 0h1v1h-1zM160 0h1v1h-1zM170 0h1v1h-1zM179 0h1v1h-1zM189 0h1v1h-1zM198 0h1v1h-1zM208 0h1v1h-1zM217 0h1v1h-1zM227 0h1v1h-1zM236 0h1v1h-1zM246 0h1v1h-1zM255 0h1v1h-1zM264 0h1v1h-1zM274 0h1v1h-1zM283 0h1v1h-1zM293 0h1v1h-1zM302 0h1v1h-1zM312 0h1v1h-1zM321 0h1v1h-1zM331 0h1v1h-1zM340 0h1v1h-1zM350 0h1v1h-1zM359 0h1v1h-1zM369 0h1v1h-1zM378 0h1v1h-1zM387 0h1v1h-1zM397 0h1v1h-1zM406 0h1v1h-1zM416 0h1v1h-1zM425 0h1v1h-1zM435 0h1v1h-1zM444 0h1v1h-1zM454 0h1v1h-1zM463 0h1v1h-1zM473 0h1v1h-1zM482 0h1v1h-1zM492 0h1v1h-1zM501 0h1v1h-1zM510 0h1v1h-1zM520 0h1v1h-1zM529 0h1v1h-1zM539 0h1v1h-1zM548 0h1v1h-1zM558 0h1v1h-1zM567 0h1v1h-1zM577 0h1v1h-1zM586 0h1v1h-1zM596 0h1v1h-1zM605 0h1v1h-1zM615 0h1v1h-1zM624 0h1v1h-1zM633 0h1v1h-1zM643 0h1v1h-1zM652 0h1v1h-1zM662 0h1v1h-1zM671 0h1v1h-1zM681 0h1v1h-1zM690 0h1v1h-1zM700 0h1v1h-1zM709 0h1v1h-1z"/><path transform="translate(0 475)" d="M9 0h1v1h-1zM18 0h1v1h-1zM28 0h1v1h-1zM37 0h1v1h-1zM47 0h1v1h-1zM56 0h1v1h-1zM66 0h1v1h-1zM75 0h1v1h-1zM85 0h1v1h-1zM94 0h1v1h-1zM104 0h1v1h-1zM113 0h1v1h-1zM123 0h1v1h-1zM132 0h1v1h-1zM141 0h1v1h-1zM151 0h1v1h-1zM160 0h1v1h-1zM170 0h1v1h-1zM179 0h1v1h-1zM189 0h1v1h-1zM198 0h1v1h-1zM208 0h1v1h-1zM217 0h1v1h-1zM227 0h1v1h-1zM236 0h1v1h-1zM246 0h1v1h-1zM255 0h1v1h-1zM264 0h1v1h-1zM274 0h1v1h-1zM283 0h1v1h-1zM293 0h1v1h-1zM302 0h1v1h-1zM312 0h1v1h-1zM321 0h1v1h-1zM331 0h1v1h-1zM340 0h1v1h-1zM350 0h1v1h-1zM359 0h1v1h-1zM369 0h1v1h-1zM378 0h1v1h-1zM387 0h1v1h-1zM397 0h1v1h-1zM406 0h1v1h-1zM416 0h1v1h-1zM425 0h1v1h-1zM435 0h1v1h-1zM444 0h1v1h-1zM454 0h1v1h-1zM463 0h1v1h-1zM473 0h1v1h-1zM482 0h1v1h-1zM492 0h1v1h-1zM501 0h1v1h-1zM510 0h1v1h-1zM520 0h1v1h-1zM529 0h1v1h-1zM539 0h1v1h-1zM548 0h1v1h-1zM558 0h1v1h-1zM567 0h1v1h-1zM577 0h1v1h-1zM586 0h1v1h-1zM596 0h1v1h-1zM605 0h1v1h-1zM615 0h1v1h-1zM624 0h1v1h-1zM633 0h1v1h-1zM643 0h1v1h-1zM652 0h1v1h-1zM662 0h1v1h-1zM671 0h1v1h-1zM681 0h1v1h-1zM690 0h1v1h-1zM700 0h1v1h-1zM709 0h1v1h-1z"/><path transform="translate(0 484)" d="M9 0h1v1h-1zM18 0h1v1h-1zM28 0h1v1h-1zM37 0h1v1h-1zM47 0h1v1h-1zM56 0h1v1h-1zM66 0h1v1h-1zM75 0h1v1h-1zM85 0h1v1h-1zM94 0h1v1h-1zM104 0h1v1h-1zM113 0h1v1h-1zM123 0h1v1h-1zM132 0h1v1h-1zM141 0h1v1h-1zM151 0h1v1h-1zM160 0h1v1h-1zM170 0h1v1h-1zM179 0h1v1h-1zM189 0h1v1h-1zM198 0h1v1h-1zM208 0h1v1h-1zM217 0h1v1h-1zM227 0h1v1h-1zM236 0h1v1h-1zM246 0h1v1h-1zM255 0h1v1h-1zM264 0h1v1h-1zM274 0h1v1h-1zM283 0h1v1h-1zM293 0h1v1h-1zM302 0h1v1h-1zM312 0h1v1h-1zM321 0h1v1h-1zM331 0h1v1h-1zM340 0h1v1h-1zM350 0h1v1h-1zM359 0h1v1h-1zM369 0h1v1h-1zM378 0h1v1h-1zM387 0h1v1h-1zM397 0h1v1h-1zM406 0h1v1h-1zM416 0h1v1h-1zM425 0h1v1h-1zM435 0h1v1h-1zM444 0h1v1h-1zM454 0h1v1h-1zM463 0h1v1h-1zM473 0h1v1h-1zM482 0h1v1h-1zM492 0h1v1h-1zM501 0h1v1h-1zM510 0h1v1h-1zM520 0h1v1h-1zM529 0h1v1h-1zM539 0h1v1h-1zM548 0h1v1h-1zM558 0h1v1h-1zM567 0h1v1h-1zM577 0h1v1h-1zM586 0h1v1h-1zM596 0h1v1h-1zM605 0h1v1h-1zM615 0h1v1h-1zM624 0h1v1h-1zM633 0h1v1h-1zM643 0h1v1h-1zM652 0h1v1h-1zM662 0h1v1h-1zM671 0h1v1h-1zM681 0h1v1h-1zM690 0h1v1h-1zM700 0h1v1h-1zM709 0h1v1h-1z"/><path transform="translate(0 493)" d="M9 0h1v1h-1zM18 0h1v1h-1zM28 0h1v1h-1zM37 0h1v1h-1zM47 0h1v1h-1zM56 0h1v1h-1zM66 0h1v1h-1zM75 0h1v1h-1zM85 0h1v1h-1zM94 0h1v1h-1zM104 0h1v1h-1zM113 0h1v1h-1zM123 0h1v1h-1zM132 0h1v1h-1zM141 0h1v1h-1zM151 0h1v1h-1zM160 0h1v1h-1zM170 0h1v1h-1zM179 0h1v1h-1zM189 0h1v1h-1zM198 0h1v1h-1zM208 0h1v1h-1zM217 0h1v1h-1zM227 0h1v1h-1zM236 0h1v1h-1zM246 0h1v1h-1zM255 0h1v1h-1zM264 0h1v1h-1zM274 0h1v1h-1zM283 0h1v1h-1zM293 0h1v1h-1zM302 0h1v1h-1zM312 0h1v1h-1zM321 0h1v1h-1zM331 0h1v1h-1zM340 0h1v1h-1zM350 0h1v1h-1zM359 0h1v1h-1zM369 0h1v1h-1zM378 0h1v1h-1zM387 0h1v1h-1zM397 0h1v1h-1zM406 0h1v1h-1zM416 0h1v1h-1zM425 0h1v1h-1zM435 0h1v1h-1zM444 0h1v1h-1zM454 0h1v1h-1zM463 0h1v1h-1zM473 0h1v1h-1zM482 0h1v1h-1zM492 0h1v1h-1zM501 0h1v1h-1zM510 0h1v1h-1zM520 0h1v1h-1zM529 0h1v1h-1zM539 0h1v1h-1zM548 0h1v1h-1zM558 0h1v1h-1zM567 0h1v1h-1zM577 0h1v1h-1zM586 0h1v1h-1zM596 0h1v1h-1zM605 0h1v1h-1zM615 0h1v1h-1zM624 0h1v1h-1zM633 0h1v1h-1zM643 0h1v1h-1zM652 0h1v1h-1zM662 0h1v1h-1zM671 0h1v1h-1zM681 0h1v1h-1zM690 0h1v1h-1zM700 0h1v1h-1zM709 0h1v1h-1z"/><path transform="translate(0 503)" d="M9 0h1v1h-1zM18 0h1v1h-1zM28 0h1v1h-1zM37 0h1v1h-1zM47 0h1v1h-1zM56 0h1v1h-1zM66 0h1v1h-1zM75 0h1v1h-1zM85 0h1v1h-1zM94 0h1v1h-1zM104 0h1v1h-1zM113 0h1v1h-1zM123 0h1v1h-1zM132 0h1v1h-1zM141 0h1v1h-1zM151 0h1v1h-1zM160 0h1v1h-1zM170 0h1v1h-1zM179 0h1v1h-1zM189 0h1v1h-1zM198 0h1v1h-1zM208 0h1v1h-1zM217 0h1v1h-1zM227 0h1v1h-1zM236 0h1v1h-1zM246 0h1v1h-1zM255 0h1v1h-1zM264 0h1v1h-1zM274 0h1v1h-1zM283 0h1v1h-1zM293 0h1v1h-1zM302 0h1v1h-1zM312 0h1v1h-1zM321 0h1v1h-1zM331 0h1v1h-1zM340 0h1v1h-1zM350 0h1v1h-1zM359 0h1v1h-1zM369 0h1v1h-1zM378 0h1v1h-1zM387 0h1v1h-1zM397 0h1v1h-1zM406 0h1v1h-1zM416 0h1v1h-1zM425 0h1v1h-1zM435 0h1v1h-1zM444 0h1v1h-1zM454 0h1v1h-1zM463 0h1v1h-1zM473 0h1v1h-1zM482 0h1v1h-1zM492 0h1v1h-1zM501 0h1v1h-1zM510 0h1v1h-1zM520 0h1v1h-1zM529 0h1v1h-1zM539 0h1v1h-1zM548 0h1v1h-1zM558 0h1v1h-1zM567 0h1v1h-1zM577 0h1v1h-1zM586 0h1v1h-1zM596 0h1v1h-1zM605 0h1v1h-1zM615 0h1v1h-1zM624 0h1v1h-1zM633 0h1v1h-1zM643 0h1v1h-1zM652 0h1v1h-1zM662 0h1v1h-1zM671 0h1v1h-1zM681 0h1v1h-1zM690 0h1v1h-1zM700 0h1v1h-1zM709 0h1v1h-1z"/><path transform="translate(0 512)" d="M9 0h1v1h-1zM18 0h1v1h-1zM28 0h1v1h-1zM37 0h1v1h-1zM47 0h1v1h-1zM56 0h1v1h-1zM66 0h1v1h-1zM75 0h1v1h-1zM85 0h1v1h-1zM94 0h1v1h-1zM104 0h1v1h-1zM113 0h1v1h-1zM123 0h1v1h-1zM132 0h1v1h-1zM141 0h1v1h-1zM151 0h1v1h-1zM160 0h1v1h-1zM170 0h1v1h-1zM179 0h1v1h-1zM189 0h1v1h-1zM198 0h1v1h-1zM208 0h1v1h-1zM217 0h1v1h-1zM227 0h1v1h-1zM236 0h1v1h-1zM246 0h1v1h-1zM255 0h1v1h-1zM264 0h1v1h-1zM274 0h1v1h-1zM283 0h1v1h-1zM293 0h1v1h-1zM302 0h1v1h-1zM312 0h1v1h-1zM321 0h1v1h-1zM331 0h1v1h-1zM340 0h1v1h-1zM350 0h1v1h-1zM359 0h1v1h-1zM369 0h1v1h-1zM378 0h1v1h-1zM387 0h1v1h-1zM397 0h1v1h-1zM406 0h1v1h-1zM416 0h1v1h-1zM425 0h1v1h-1zM435 0h1v1h-1zM444 0h1v1h-1zM454 0h1v1h-1zM463 0h1v1h-1zM473 0h1v1h-1zM482 0h1v1h-1zM492 0h1v1h-1zM501 0h1v1h-1zM510 0h1v1h-1zM520 0h1v1h-1zM529 0h1v1h-1zM539 0h1v1h-1zM548 0h1v1h-1zM558 0h1v1h-1zM567 0h1v1h-1zM577 0h1v1h-1zM586 0h1v1h-1zM596 0h1v1h-1zM605 0h1v1h-1zM615 0h1v1h-1zM624 0h1v1h-1zM633 0h1v1h-1zM643 0h1v1h-1zM652 0h1v1h-1zM662 0h1v1h-1zM671 0h1v1h-1zM681 0h1v1h-1zM690 0h1v1h-1zM700 0h1v1h-1zM709 0h1v1h-1z"/><path transform="translate(0 522)" d="M9 0h1v1h-1zM18 0h1v1h-1zM28 0h1v1h-1zM37 0h1v1h-1zM47 0h1v1h-1zM56 0h1v1h-1zM66 0h1v1h-1zM75 0h1v1h-1zM85 0h1v1h-1zM94 0h1v1h-1zM104 0h1v1h-1zM113 0h1v1h-1zM123 0h1v1h-1zM132 0h1v1h-1zM141 0h1v1h-1zM151 0h1v1h-1zM160 0h1v1h-1zM170 0h1v1h-1zM179 0h1v1h-1zM189 0h1v1h-1zM198 0h1v1h-1zM208 0h1v1h-1zM217 0h1v1h-1zM227 0h1v1h-1zM236 0h1v1h-1zM246 0h1v1h-1zM255 0h1v1h-1zM264 0h1v1h-1zM274 0h1v1h-1zM283 0h1v1h-1zM293 0h1v1h-1zM302 0h1v1h-1zM312 0h1v1h-1zM321 0h1v1h-1zM331 0h1v1h-1zM340 0h1v1h-1zM350 0h1v1h-1zM359 0h1v1h-1zM369 0h1v1h-1zM378 0h1v1h-1zM387 0h1v1h-1zM397 0h1v1h-1zM406 0h1v1h-1zM416 0h1v1h-1zM425 0h1v1h-1zM435 0h1v1h-1zM444 0h1v1h-1zM454 0h1v1h-1zM463 0h1v1h-1zM473 0h1v1h-1zM482 0h1v1h-1zM492 0h1v1h-1zM501 0h1v1h-1zM510 0h1v1h-1zM520 0h1v1h-1zM529 0h1v1h-1zM539 0h1v1h-1zM548 0h1v1h-1zM558 0h1v1h-1zM567 0h1v1h-1zM577 0h1v1h-1zM586 0h1v1h-1zM596 0h1v1h-1zM605 0h1v1h-1zM615 0h1v1h-1zM624 0h1v1h-1zM633 0h1v1h-1zM643 0h1v1h-1zM652 0h1v1h-1zM662 0h1v1h-1zM671 0h1v1h-1zM681 0h1v1h-1zM690 0h1v1h-1zM700 0h1v1h-1zM709 0h1v1h-1z"/><path transform="translate(0 531)" d="M9 0h1v1h-1zM18 0h1v1h-1zM28 0h1v1h-1zM37 0h1v1h-1zM47 0h1v1h-1zM56 0h1v1h-1zM66 0h1v1h-1zM75 0h1v1h-1zM85 0h1v1h-1zM94 0h1v1h-1zM104 0h1v1h-1zM113 0h1v1h-1zM123 0h1v1h-1zM132 0h1v1h-1zM141 0h1v1h-1zM151 0h1v1h-1zM160 0h1v1h-1zM170 0h1v1h-1zM179 0h1v1h-1zM189 0h1v1h-1zM198 0h1v1h-1zM208 0h1v1h-1zM217 0h1v1h-1zM227 0h1v1h-1zM236 0h1v1h-1zM246 0h1v1h-1zM255 0h1v1h-1zM264 0h1v1h-1zM274 0h1v1h-1zM283 0h1v1h-1zM293 0h1v1h-1zM302 0h1v1h-1zM312 0h1v1h-1zM321 0h1v1h-1zM331 0h1v1h-1zM340 0h1v1h-1zM350 0h1v1h-1zM359 0h1v1h-1zM369 0h1v1h-1zM378 0h1v1h-1zM387 0h1v1h-1zM397 0h1v1h-1zM406 0h1v1h-1zM416 0h1v1h-1zM425 0h1v1h-1zM435 0h1v1h-1zM444 0h1v1h-1zM454 0h1v1h-1zM463 0h1v1h-1zM473 0h1v1h-1zM482 0h1v1h-1zM492 0h1v1h-1zM501 0h1v1h-1zM510 0h1v1h-1zM520 0h1v1h-1zM529 0h1v1h-1zM539 0h1v1h-1zM548 0h1v1h-1zM558 0h1v1h-1zM567 0h1v1h-1zM577 0h1v1h-1zM586 0h1v1h-1zM596 0h1v1h-1zM605 0h1v1h-1zM615 0h1v1h-1zM624 0h1v1h-1zM633 0h1v1h-1zM643 0h1v1h-1zM652 0h1v1h-1zM662 0h1v1h-1zM671 0h1v1h-1zM681 0h1v1h-1zM690 0h1v1h-1zM700 0h1v1h-1zM709 0h1v1h-1z"/><path transform="translate(0 544)" d="M9 0h1v1h-1zM18 0h1v1h-1zM28 0h1v1h-1zM37 0h1v1h-1zM47 0h1v1h-1zM56 0h1v1h-1zM66 0h1v1h-1zM75 0h1v1h-1zM85 0h1v1h-1zM94 0h1v1h-1zM104 0h1v1h-1zM113 0h1v1h-1zM123 0h1v1h-1zM132 0h1v1h-1zM141 0h1v1h-1zM151 0h1v1h-1zM160 0h1v1h-1zM170 0h1v1h-1zM179 0h1v1h-1zM189 0h1v1h-1zM198 0h1v1h-1zM208 0h1v1h-1zM217 0h1v1h-1zM227 0h1v1h-1zM236 0h1v1h-1zM246 0h1v1h-1zM255 0h1v1h-1zM264 0h1v1h-1zM274 0h1v1h-1zM283 0h1v1h-1zM293 0h1v1h-1zM302 0h1v1h-1zM312 0h1v1h-1zM321 0h1v1h-1zM331 0h1v1h-1zM340 0h1v1h-1zM350 0h1v1h-1zM359 0h1v1h-1zM369 0h1v1h-1zM378 0h1v1h-1zM387 0h1v1h-1zM397 0h1v1h-1zM406 0h1v1h-1zM416 0h1v1h-1zM425 0h1v1h-1zM435 0h1v1h-1zM444 0h1v1h-1zM454 0h1v1h-1zM463 0h1v1h-1zM473 0h1v1h-1zM482 0h1v1h-1zM492 0h1v1h-1zM501 0h1v1h-1zM510 0h1v1h-1zM520 0h1v1h-1zM529 0h1v1h-1zM539 0h1v1h-1zM548 0h1v1h-1zM558 0h1v1h-1zM567 0h1v1h-1zM577 0h1v1h-1zM586 0h1v1h-1zM596 0h1v1h-1zM605 0h1v1h-1zM615 0h1v1h-1zM624 0h1v1h-1zM633 0h1v1h-1zM643 0h1v1h-1zM652 0h1v1h-1zM662 0h1v1h-1zM671 0h1v1h-1zM681 0h1v1h-1zM690 0h1v1h-1zM700 0h1v1h-1zM709 0h1v1h-1z"/><path transform="translate(0 553)" d="M9 0h1v1h-1zM18 0h1v1h-1zM28 0h1v1h-1zM37 0h1v1h-1zM47 0h1v1h-1zM56 0h1v1h-1zM66 0h1v1h-1zM75 0h1v1h-1zM85 0h1v1h-1zM94 0h1v1h-1zM104 0h1v1h-1zM113 0h1v1h-1zM123 0h1v1h-1zM132 0h1v1h-1zM141 0h1v1h-1zM151 0h1v1h-1zM160 0h1v1h-1zM170 0h1v1h-1zM179 0h1v1h-1zM189 0h1v1h-1zM198 0h1v1h-1zM208 0h1v1h-1zM217 0h1v1h-1zM227 0h1v1h-1zM236 0h1v1h-1zM246 0h1v1h-1zM255 0h1v1h-1zM264 0h1v1h-1zM274 0h1v1h-1zM283 0h1v1h-1zM293 0h1v1h-1zM302 0h1v1h-1zM312 0h1v1h-1zM321 0h1v1h-1zM331 0h1v1h-1zM340 0h1v1h-1zM350 0h1v1h-1zM359 0h1v1h-1zM369 0h1v1h-1zM378 0h1v1h-1zM387 0h1v1h-1zM397 0h1v1h-1zM406 0h1v1h-1zM416 0h1v1h-1zM425 0h1v1h-1zM435 0h1v1h-1zM444 0h1v1h-1zM454 0h1v1h-1zM463 0h1v1h-1zM473 0h1v1h-1zM482 0h1v1h-1zM492 0h1v1h-1zM501 0h1v1h-1zM510 0h1v1h-1zM520 0h1v1h-1zM529 0h1v1h-1zM539 0h1v1h-1zM548 0h1v1h-1zM558 0h1v1h-1zM567 0h1v1h-1zM577 0h1v1h-1zM586 0h1v1h-1zM596 0h1v1h-1zM605 0h1v1h-1zM615 0h1v1h-1zM624 0h1v1h-1zM633 0h1v1h-1zM643 0h1v1h-1zM652 0h1v1h-1zM662 0h1v1h-1zM671 0h1v1h-1zM681 0h1v1h-1zM690 0h1v1h-1zM700 0h1v1h-1zM709 0h1v1h-1z"/><path transform="translate(0 563)" d="M9 0h1v1h-1zM18 0h1v1h-1zM28 0h1v1h-1zM37 0h1v1h-1zM47 0h1v1h-1zM56 0h1v1h-1zM66 0h1v1h-1zM75 0h1v1h-1zM85 0h1v1h-1zM94 0h1v1h-1zM104 0h1v1h-1zM113 0h1v1h-1zM123 0h1v1h-1zM132 0h1v1h-1zM141 0h1v1h-1zM151 0h1v1h-1zM160 0h1v1h-1zM170 0h1v1h-1zM179 0h1v1h-1zM189 0h1v1h-1zM198 0h1v1h-1zM208 0h1v1h-1zM217 0h1v1h-1zM227 0h1v1h-1zM236 0h1v1h-1zM246 0h1v1h-1zM255 0h1v1h-1zM264 0h1v1h-1zM274 0h1v1h-1zM283 0h1v1h-1zM293 0h1v1h-1zM302 0h1v1h-1zM312 0h1v1h-1zM321 0h1v1h-1zM331 0h1v1h-1zM340 0h1v1h-1zM350 0h1v1h-1zM359 0h1v1h-1zM369 0h1v1h-1zM378 0h1v1h-1zM387 0h1v1h-1zM397 0h1v1h-1zM406 0h1v1h-1zM416 0h1v1h-1zM425 0h1v1h-1zM435 0h1v1h-1zM444 0h1v1h-1zM454 0h1v1h-1zM463 0h1v1h-1zM473 0h1v1h-1zM482 0h1v1h-1zM492 0h1v1h-1zM501 0h1v1h-1zM510 0h1v1h-1zM520 0h1v1h-1zM529 0h1v1h-1zM539 0h1v1h-1zM548 0h1v1h-1zM558 0h1v1h-1zM567 0h1v1h-1zM577 0h1v1h-1zM586 0h1v1h-1zM596 0h1v1h-1zM605 0h1v1h-1zM615 0h1v1h-1zM624 0h1v1h-1zM633 0h1v1h-1zM643 0h1v1h-1zM652 0h1v1h-1zM662 0h1v1h-1zM671 0h1v1h-1zM681 0h1v1h-1zM690 0h1v1h-1zM700 0h1v1h-1zM709 0h1v1h-1z"/><path transform="translate(0 572)" d="M9 0h1v1h-1zM18 0h1v1h-1zM28 0h1v1h-1zM37 0h1v1h-1zM47 0h1v1h-1zM56 0h1v1h-1zM66 0h1v1h-1zM75 0h1v1h-1zM85 0h1v1h-1zM94 0h1v1h-1zM104 0h1v1h-1zM113 0h1v1h-1zM123 0h1v1h-1zM132 0h1v1h-1zM141 0h1v1h-1zM151 0h1v1h-1zM160 0h1v1h-1zM170 0h1v1h-1zM179 0h1v1h-1zM189 0h1v1h-1zM198 0h1v1h-1zM208 0h1v1h-1zM217 0h1v1h-1zM227 0h1v1h-1zM236 0h1v1h-1zM246 0h1v1h-1zM255 0h1v1h-1zM264 0h1v1h-1zM274 0h1v1h-1zM283 0h1v1h-1zM293 0h1v1h-1zM302 0h1v1h-1zM312 0h1v1h-1zM321 0h1v1h-1zM331 0h1v1h-1zM340 0h1v1h-1zM350 0h1v1h-1zM359 0h1v1h-1zM369 0h1v1h-1zM378 0h1v1h-1zM387 0h1v1h-1zM397 0h1v1h-1zM406 0h1v1h-1zM416 0h1v1h-1zM425 0h1v1h-1zM435 0h1v1h-1zM444 0h1v1h-1zM454 0h1v1h-1zM463 0h1v1h-1zM473 0h1v1h-1zM482 0h1v1h-1zM492 0h1v1h-1zM501 0h1v1h-1zM510 0h1v1h-1zM520 0h1v1h-1zM529 0h1v1h-1zM539 0h1v1h-1zM548 0h1v1h-1zM558 0h1v1h-1zM567 0h1v1h-1zM577 0h1v1h-1zM586 0h1v1h-1zM596 0h1v1h-1zM605 0h1v1h-1zM615 0h1v1h-1zM624 0h1v1h-1zM633 0h1v1h-1zM643 0h1v1h-1zM652 0h1v1h-1zM662 0h1v1h-1zM671 0h1v1h-1zM681 0h1v1h-1zM690 0h1v1h-1zM700 0h1v1h-1zM709 0h1v1h-1z"/><path transform="translate(0 594)" d="M9 0h1v1h-1zM18 0h1v1h-1zM28 0h1v1h-1zM37 0h1v1h-1zM47 0h1v1h-1zM56 0h1v1h-1zM66 0h1v1h-1zM75 0h1v1h-1zM85 0h1v1h-1zM94 0h1v1h-1zM104 0h1v1h-1zM113 0h1v1h-1zM123 0h1v1h-1zM132 0h1v1h-1zM141 0h1v1h-1zM151 0h1v1h-1zM160 0h1v1h-1zM170 0h1v1h-1zM179 0h1v1h-1zM189 0h1v1h-1zM198 0h1v1h-1zM208 0h1v1h-1zM217 0h1v1h-1zM227 0h1v1h-1zM236 0h1v1h-1zM246 0h1v1h-1zM255 0h1v1h-1zM264 0h1v1h-1zM274 0h1v1h-1zM283 0h1v1h-1zM293 0h1v1h-1zM302 0h1v1h-1zM312 0h1v1h-1zM321 0h1v1h-1zM331 0h1v1h-1zM340 0h1v1h-1zM350 0h1v1h-1zM359 0h1v1h-1zM369 0h1v1h-1zM378 0h1v1h-1zM387 0h1v1h-1zM397 0h1v1h-1zM406 0h1v1h-1zM416 0h1v1h-1zM425 0h1v1h-1zM435 0h1v1h-1zM444 0h1v1h-1zM454 0h1v1h-1zM463 0h1v1h-1zM473 0h1v1h-1zM482 0h1v1h-1zM492 0h1v1h-1zM501 0h1v1h-1zM510 0h1v1h-1zM520 0h1v1h-1zM529 0h1v1h-1zM539 0h1v1h-1zM548 0h1v1h-1zM558 0h1v1h-1zM567 0h1v1h-1zM577 0h1v1h-1zM586 0h1v1h-1zM596 0h1v1h-1zM605 0h1v1h-1zM615 0h1v1h-1zM624 0h1v1h-1zM633 0h1v1h-1zM643 0h1v1h-1zM652 0h1v1h-1zM662 0h1v1h-1zM671 0h1v1h-1zM681 0h1v1h-1zM690 0h1v1h-1zM700 0h1v1h-1zM709 0h1v1h-1z"/><path transform="translate(0 603)" d="M9 0h1v1h-1zM18 0h1v1h-1zM28 0h1v1h-1zM37 0h1v1h-1zM47 0h1v1h-1zM56 0h1v1h-1zM66 0h1v1h-1zM75 0h1v1h-1zM85 0h1v1h-1zM94 0h1v1h-1zM104 0h1v1h-1zM113 0h1v1h-1zM123 0h1v1h-1zM132 0h1v1h-1zM141 0h1v1h-1zM151 0h1v1h-1zM160 0h1v1h-1zM170 0h1v1h-1zM179 0h1v1h-1zM189 0h1v1h-1zM198 0h1v1h-1zM208 0h1v1h-1zM217 0h1v1h-1zM227 0h1v1h-1zM236 0h1v1h-1zM246 0h1v1h-1zM255 0h1v1h-1zM264 0h1v1h-1zM274 0h1v1h-1zM283 0h1v1h-1zM293 0h1v1h-1zM302 0h1v1h-1zM312 0h1v1h-1zM321 0h1v1h-1zM331 0h1v1h-1zM340 0h1v1h-1zM350 0h1v1h-1zM359 0h1v1h-1zM369 0h1v1h-1zM378 0h1v1h-1zM387 0h1v1h-1zM397 0h1v1h-1zM406 0h1v1h-1zM416 0h1v1h-1zM425 0h1v1h-1zM435 0h1v1h-1zM444 0h1v1h-1zM454 0h1v1h-1zM463 0h1v1h-1zM473 0h1v1h-1zM482 0h1v1h-1zM492 0h1v1h-1zM501 0h1v1h-1zM510 0h1v1h-1zM520 0h1v1h-1zM529 0h1v1h-1zM539 0h1v1h-1zM548 0h1v1h-1zM558 0h1v1h-1zM567 0h1v1h-1zM577 0h1v1h-1zM586 0h1v1h-1zM596 0h1v1h-1zM605 0h1v1h-1zM615 0h1v1h-1zM624 0h1v1h-1zM633 0h1v1h-1zM643 0h1v1h-1zM652 0h1v1h-1zM662 0h1v1h-1zM671 0h1v1h-1zM681 0h1v1h-1zM690 0h1v1h-1zM700 0h1v1h-1zM709 0h1v1h-1z"/><path transform="translate(0 613)" d="M9 0h1v1h-1zM18 0h1v1h-1zM28 0h1v1h-1zM37 0h1v1h-1zM47 0h1v1h-1zM56 0h1v1h-1zM66 0h1v1h-1zM75 0h1v1h-1zM85 0h1v1h-1zM94 0h1v1h-1zM104 0h1v1h-1zM113 0h1v1h-1zM123 0h1v1h-1zM132 0h1v1h-1zM141 0h1v1h-1zM151 0h1v1h-1zM160 0h1v1h-1zM170 0h1v1h-1zM179 0h1v1h-1zM189 0h1v1h-1zM198 0h1v1h-1zM208 0h1v1h-1zM217 0h1v1h-1zM227 0h1v1h-1zM236 0h1v1h-1zM246 0h1v1h-1zM255 0h1v1h-1zM264 0h1v1h-1zM274 0h1v1h-1zM283 0h1v1h-1zM293 0h1v1h-1zM302 0h1v1h-1zM312 0h1v1h-1zM321 0h1v1h-1zM331 0h1v1h-1zM340 0h1v1h-1zM350 0h1v1h-1zM359 0h1v1h-1zM369 0h1v1h-1zM378 0h1v1h-1zM387 0h1v1h-1zM397 0h1v1h-1zM406 0h1v1h-1zM416 0h1v1h-1zM425 0h1v1h-1zM435 0h1v1h-1zM444 0h1v1h-1zM454 0h1v1h-1zM463 0h1v1h-1zM473 0h1v1h-1zM482 0h1v1h-1zM492 0h1v1h-1zM501 0h1v1h-1zM510 0h1v1h-1zM520 0h1v1h-1zM529 0h1v1h-1zM539 0h1v1h-1zM548 0h1v1h-1zM558 0h1v1h-1zM567 0h1v1h-1zM577 0h1v1h-1zM586 0h1v1h-1zM596 0h1v1h-1zM605 0h1v1h-1zM615 0h1v1h-1zM624 0h1v1h-1zM633 0h1v1h-1zM643 0h1v1h-1zM652 0h1v1h-1zM662 0h1v1h-1zM671 0h1v1h-1zM681 0h1v1h-1zM690 0h1v1h-1zM700 0h1v1h-1zM709 0h1v1h-1z"/><path transform="translate(0 622)" d="M9 0h1v1h-1zM18 0h1v1h-1zM28 0h1v1h-1zM37 0h1v1h-1zM47 0h1v1h-1zM56 0h1v1h-1zM66 0h1v1h-1zM75 0h1v1h-1zM85 0h1v1h-1zM94 0h1v1h-1zM104 0h1v1h-1zM113 0h1v1h-1zM123 0h1v1h-1zM132 0h1v1h-1zM141 0h1v1h-1zM151 0h1v1h-1zM160 0h1v1h-1zM170 0h1v1h-1zM179 0h1v1h-1zM189 0h1v1h-1zM198 0h1v1h-1zM208 0h1v1h-1zM217 0h1v1h-1zM227 0h1v1h-1zM236 0h1v1h-1zM246 0h1v1h-1zM255 0h1v1h-1zM264 0h1v1h-1zM274 0h1v1h-1zM283 0h1v1h-1zM293 0h1v1h-1zM302 0h1v1h-1zM312 0h1v1h-1zM321 0h1v1h-1zM331 0h1v1h-1zM340 0h1v1h-1zM350 0h1v1h-1zM359 0h1v1h-1zM369 0h1v1h-1zM378 0h1v1h-1zM387 0h1v1h-1zM397 0h1v1h-1zM406 0h1v1h-1zM416 0h1v1h-1zM425 0h1v1h-1zM435 0h1v1h-1zM444 0h1v1h-1zM454 0h1v1h-1zM463 0h1v1h-1zM473 0h1v1h-1zM482 0h1v1h-1zM492 0h1v1h-1zM501 0h1v1h-1zM510 0h1v1h-1zM520 0h1v1h-1zM529 0h1v1h-1zM539 0h1v1h-1zM548 0h1v1h-1zM558 0h1v1h-1zM567 0h1v1h-1zM577 0h1v1h-1zM586 0h1v1h-1zM596 0h1v1h-1zM605 0h1v1h-1zM615 0h1v1h-1zM624 0h1v1h-1zM633 0h1v1h-1zM643 0h1v1h-1zM652 0h1v1h-1zM662 0h1v1h-1zM671 0h1v1h-1zM681 0h1v1h-1zM690 0h1v1h-1zM700 0h1v1h-1zM709 0h1v1h-1z"/><path transform="translate(0 632)" d="M9 0h1v1h-1zM18 0h1v1h-1zM28 0h1v1h-1zM37 0h1v1h-1zM47 0h1v1h-1zM56 0h1v1h-1zM66 0h1v1h-1zM75 0h1v1h-1zM85 0h1v1h-1zM94 0h1v1h-1zM104 0h1v1h-1zM113 0h1v1h-1zM123 0h1v1h-1zM132 0h1v1h-1zM141 0h1v1h-1zM151 0h1v1h-1zM160 0h1v1h-1zM170 0h1v1h-1zM179 0h1v1h-1zM189 0h1v1h-1zM198 0h1v1h-1zM208 0h1v1h-1zM217 0h1v1h-1zM227 0h1v1h-1zM236 0h1v1h-1zM246 0h1v1h-1zM255 0h1v1h-1zM264 0h1v1h-1zM274 0h1v1h-1zM283 0h1v1h-1zM293 0h1v1h-1zM302 0h1v1h-1zM312 0h1v1h-1zM321 0h1v1h-1zM331 0h1v1h-1zM340 0h1v1h-1zM350 0h1v1h-1zM359 0h1v1h-1zM369 0h1v1h-1zM378 0h1v1h-1zM387 0h1v1h-1zM397 0h1v1h-1zM406 0h1v1h-1zM416 0h1v1h-1zM425 0h1v1h-1zM435 0h1v1h-1zM444 0h1v1h-1zM454 0h1v1h-1zM463 0h1v1h-1zM473 0h1v1h-1zM482 0h1v1h-1zM492 0h1v1h-1zM501 0h1v1h-1zM510 0h1v1h-1zM520 0h1v1h-1zM529 0h1v1h-1zM539 0h1v1h-1zM548 0h1v1h-1zM558 0h1v1h-1zM567 0h1v1h-1zM577 0h1v1h-1zM586 0h1v1h-1zM596 0h1v1h-1zM605 0h1v1h-1zM615 0h1v1h-1zM624 0h1v1h-1zM633 0h1v1h-1zM643 0h1v1h-1zM652 0h1v1h-1zM662 0h1v1h-1zM671 0h1v1h-1zM681 0h1v1h-1zM690 0h1v1h-1zM700 0h1v1h-1zM709 0h1v1h-1z"/><path transform="translate(0 641)" d="M9 0h1v1h-1zM18 0h1v1h-1zM28 0h1v1h-1zM37 0h1v1h-1zM47 0h1v1h-1zM56 0h1v1h-1zM66 0h1v1h-1zM75 0h1v1h-1zM85 0h1v1h-1zM94 0h1v1h-1zM104 0h1v1h-1zM113 0h1v1h-1zM123 0h1v1h-1zM132 0h1v1h-1zM141 0h1v1h-1zM151 0h1v1h-1zM160 0h1v1h-1zM170 0h1v1h-1zM179 0h1v1h-1zM189 0h1v1h-1zM198 0h1v1h-1zM208 0h1v1h-1zM217 0h1v1h-1zM227 0h1v1h-1zM236 0h1v1h-1zM246 0h1v1h-1zM255 0h1v1h-1zM264 0h1v1h-1zM274 0h1v1h-1zM283 0h1v1h-1zM293 0h1v1h-1zM302 0h1v1h-1zM312 0h1v1h-1zM321 0h1v1h-1zM331 0h1v1h-1zM340 0h1v1h-1zM350 0h1v1h-1zM359 0h1v1h-1zM369 0h1v1h-1zM378 0h1v1h-1zM387 0h1v1h-1zM397 0h1v1h-1zM406 0h1v1h-1zM416 0h1v1h-1zM425 0h1v1h-1zM435 0h1v1h-1zM444 0h1v1h-1zM454 0h1v1h-1zM463 0h1v1h-1zM473 0h1v1h-1zM482 0h1v1h-1zM492 0h1v1h-1zM501 0h1v1h-1zM510 0h1v1h-1zM520 0h1v1h-1zM529 0h1v1h-1zM539 0h1v1h-1zM548 0h1v1h-1zM558 0h1v1h-1zM567 0h1v1h-1zM577 0h1v1h-1zM586 0h1v1h-1zM596 0h1v1h-1zM605 0h1v1h-1zM615 0h1v1h-1zM624 0h1v1h-1zM633 0h1v1h-1zM643 0h1v1h-1zM652 0h1v1h-1zM662 0h1v1h-1zM671 0h1v1h-1zM681 0h1v1h-1zM690 0h1v1h-1zM700 0h1v1h-1zM709 0h1v1h-1z"/><path transform="translate(0 651)" d="M9 0h1v1h-1zM18 0h1v1h-1zM28 0h1v1h-1zM37 0h1v1h-1zM47 0h1v1h-1zM56 0h1v1h-1zM66 0h1v1h-1zM75 0h1v1h-1zM85 0h1v1h-1zM94 0h1v1h-1zM104 0h1v1h-1zM113 0h1v1h-1zM123 0h1v1h-1zM132 0h1v1h-1zM141 0h1v1h-1zM151 0h1v1h-1zM160 0h1v1h-1zM170 0h1v1h-1zM179 0h1v1h-1zM189 0h1v1h-1zM198 0h1v1h-1zM208 0h1v1h-1zM217 0h1v1h-1zM227 0h1v1h-1zM236 0h1v1h-1zM246 0h1v1h-1zM255 0h1v1h-1zM264 0h1v1h-1zM274 0h1v1h-1zM283 0h1v1h-1zM293 0h1v1h-1zM302 0h1v1h-1zM312 0h1v1h-1zM321 0h1v1h-1zM331 0h1v1h-1zM340 0h1v1h-1zM350 0h1v1h-1zM359 0h1v1h-1zM369 0h1v1h-1zM378 0h1v1h-1zM387 0h1v1h-1zM397 0h1v1h-1zM406 0h1v1h-1zM416 0h1v1h-1zM425 0h1v1h-1zM435 0h1v1h-1zM444 0h1v1h-1zM454 0h1v1h-1zM463 0h1v1h-1zM473 0h1v1h-1zM482 0h1v1h-1zM492 0h1v1h-1zM501 0h1v1h-1zM510 0h1v1h-1zM520 0h1v1h-1zM529 0h1v1h-1zM539 0h1v1h-1zM548 0h1v1h-1zM558 0h1v1h-1zM567 0h1v1h-1zM577 0h1v1h-1zM586 0h1v1h-1zM596 0h1v1h-1zM605 0h1v1h-1zM615 0h1v1h-1zM624 0h1v1h-1zM633 0h1v1h-1zM643 0h1v1h-1zM652 0h1v1h-1zM662 0h1v1h-1zM671 0h1v1h-1zM681 0h1v1h-1zM690 0h1v1h-1zM700 0h1v1h-1zM709 0h1v1h-1z"/><path transform="translate(0 660)" d="M9 0h1v1h-1zM18 0h1v1h-1zM28 0h1v1h-1zM37 0h1v1h-1zM47 0h1v1h-1zM56 0h1v1h-1zM66 0h1v1h-1zM75 0h1v1h-1zM85 0h1v1h-1zM94 0h1v1h-1zM104 0h1v1h-1zM113 0h1v1h-1zM123 0h1v1h-1zM132 0h1v1h-1zM141 0h1v1h-1zM151 0h1v1h-1zM160 0h1v1h-1zM170 0h1v1h-1zM179 0h1v1h-1zM189 0h1v1h-1zM198 0h1v1h-1zM208 0h1v1h-1zM217 0h1v1h-1zM227 0h1v1h-1zM236 0h1v1h-1zM246 0h1v1h-1zM255 0h1v1h-1zM264 0h1v1h-1zM274 0h1v1h-1zM283 0h1v1h-1zM293 0h1v1h-1zM302 0h1v1h-1zM312 0h1v1h-1zM321 0h1v1h-1zM331 0h1v1h-1zM340 0h1v1h-1zM350 0h1v1h-1zM359 0h1v1h-1zM369 0h1v1h-1zM378 0h1v1h-1zM387 0h1v1h-1zM397 0h1v1h-1zM406 0h1v1h-1zM416 0h1v1h-1zM425 0h1v1h-1zM435 0h1v1h-1zM444 0h1v1h-1zM454 0h1v1h-1zM463 0h1v1h-1zM473 0h1v1h-1zM482 0h1v1h-1zM492 0h1v1h-1zM501 0h1v1h-1zM510 0h1v1h-1zM520 0h1v1h-1zM529 0h1v1h-1zM539 0h1v1h-1zM548 0h1v1h-1zM558 0h1v1h-1zM567 0h1v1h-1zM577 0h1v1h-1zM586 0h1v1h-1zM596 0h1v1h-1zM605 0h1v1h-1zM615 0h1v1h-1zM624 0h1v1h-1zM633 0h1v1h-1zM643 0h1v1h-1zM652 0h1v1h-1zM662 0h1v1h-1zM671 0h1v1h-1zM681 0h1v1h-1zM690 0h1v1h-1zM700 0h1v1h-1zM709 0h1v1h-1z"/><path transform="translate(0 670)" d="M9 0h1v1h-1zM18 0h1v1h-1zM28 0h1v1h-1zM37 0h1v1h-1zM47 0h1v1h-1zM56 0h1v1h-1zM66 0h1v1h-1zM75 0h1v1h-1zM85 0h1v1h-1zM94 0h1v1h-1zM104 0h1v1h-1zM113 0h1v1h-1zM123 0h1v1h-1zM132 0h1v1h-1zM141 0h1v1h-1zM151 0h1v1h-1zM160 0h1v1h-1zM170 0h1v1h-1zM179 0h1v1h-1zM189 0h1v1h-1zM198 0h1v1h-1zM208 0h1v1h-1zM217 0h1v1h-1zM227 0h1v1h-1zM236 0h1v1h-1zM246 0h1v1h-1zM255 0h1v1h-1zM264 0h1v1h-1zM274 0h1v1h-1zM283 0h1v1h-1zM293 0h1v1h-1zM302 0h1v1h-1zM312 0h1v1h-1zM321 0h1v1h-1zM331 0h1v1h-1zM340 0h1v1h-1zM350 0h1v1h-1zM359 0h1v1h-1zM369 0h1v1h-1zM378 0h1v1h-1zM387 0h1v1h-1zM397 0h1v1h-1zM406 0h1v1h-1zM416 0h1v1h-1zM425 0h1v1h-1zM435 0h1v1h-1zM444 0h1v1h-1zM454 0h1v1h-1zM463 0h1v1h-1zM473 0h1v1h-1zM482 0h1v1h-1zM492 0h1v1h-1zM501 0h1v1h-1zM510 0h1v1h-1zM520 0h1v1h-1zM529 0h1v1h-1zM539 0h1v1h-1zM548 0h1v1h-1zM558 0h1v1h-1zM567 0h1v1h-1zM577 0h1v1h-1zM586 0h1v1h-1zM596 0h1v1h-1zM605 0h1v1h-1zM615 0h1v1h-1zM624 0h1v1h-1zM633 0h1v1h-1zM643 0h1v1h-1zM652 0h1v1h-1zM662 0h1v1h-1zM671 0h1v1h-1zM681 0h1v1h-1zM690 0h1v1h-1zM700 0h1v1h-1zM709 0h1v1h-1z"/><path transform="translate(0 679)" d="M9 0h1v1h-1zM18 0h1v1h-1zM28 0h1v1h-1zM37 0h1v1h-1zM47 0h1v1h-1zM56 0h1v1h-1zM66 0h1v1h-1zM75 0h1v1h-1zM85 0h1v1h-1zM94 0h1v1h-1zM104 0h1v1h-1zM113 0h1v1h-1zM123 0h1v1h-1zM132 0h1v1h-1zM141 0h1v1h-1zM151 0h1v1h-1zM160 0h1v1h-1zM170 0h1v1h-1zM179 0h1v1h-1zM189 0h1v1h-1zM198 0h1v1h-1zM208 0h1v1h-1zM217 0h1v1h-1zM227 0h1v1h-1zM236 0h1v1h-1zM246 0h1v1h-1zM255 0h1v1h-1zM264 0h1v1h-1zM274 0h1v1h-1zM283 0h1v1h-1zM293 0h1v1h-1zM302 0h1v1h-1zM312 0h1v1h-1zM321 0h1v1h-1zM331 0h1v1h-1zM340 0h1v1h-1zM350 0h1v1h-1zM359 0h1v1h-1zM369 0h1v1h-1zM378 0h1v1h-1zM387 0h1v1h-1zM397 0h1v1h-1zM406 0h1v1h-1zM416 0h1v1h-1zM425 0h1v1h-1zM435 0h1v1h-1zM444 0h1v1h-1zM454 0h1v1h-1zM463 0h1v1h-1zM473 0h1v1h-1zM482 0h1v1h-1zM492 0h1v1h-1zM501 0h1v1h-1zM510 0h1v1h-1zM520 0h1v1h-1zM529 0h1v1h-1zM539 0h1v1h-1zM548 0h1v1h-1zM558 0h1v1h-1zM567 0h1v1h-1zM577 0h1v1h-1zM586 0h1v1h-1zM596 0h1v1h-1zM605 0h1v1h-1zM615 0h1v1h-1zM624 0h1v1h-1zM633 0h1v1h-1zM643 0h1v1h-1zM652 0h1v1h-1zM662 0h1v1h-1zM671 0h1v1h-1zM681 0h1v1h-1zM690 0h1v1h-1zM700 0h1v1h-1zM709 0h1v1h-1z"/><path transform="translate(0 689)" d="M9 0h1v1h-1zM18 0h1v1h-1zM28 0h1v1h-1zM37 0h1v1h-1zM47 0h1v1h-1zM56 0h1v1h-1zM66 0h1v1h-1zM75 0h1v1h-1zM85 0h1v1h-1zM94 0h1v1h-1zM104 0h1v1h-1zM113 0h1v1h-1zM123 0h1v1h-1zM132 0h1v1h-1zM141 0h1v1h-1zM151 0h1v1h-1zM160 0h1v1h-1zM170 0h1v1h-1zM179 0h1v1h-1zM189 0h1v1h-1zM198 0h1v1h-1zM208 0h1v1h-1zM217 0h1v1h-1zM227 0h1v1h-1zM236 0h1v1h-1zM246 0h1v1h-1zM255 0h1v1h-1zM264 0h1v1h-1zM274 0h1v1h-1zM283 0h1v1h-1zM293 0h1v1h-1zM302 0h1v1h-1zM312 0h1v1h-1zM321 0h1v1h-1zM331 0h1v1h-1zM340 0h1v1h-1zM350 0h1v1h-1zM359 0h1v1h-1zM369 0h1v1h-1zM378 0h1v1h-1zM387 0h1v1h-1zM397 0h1v1h-1zM406 0h1v1h-1zM416 0h1v1h-1zM425 0h1v1h-1zM435 0h1v1h-1zM444 0h1v1h-1zM454 0h1v1h-1zM463 0h1v1h-1zM473 0h1v1h-1zM482 0h1v1h-1zM492 0h1v1h-1zM501 0h1v1h-1zM510 0h1v1h-1zM520 0h1v1h-1zM529 0h1v1h-1zM539 0h1v1h-1zM548 0h1v1h-1zM558 0h1v1h-1zM567 0h1v1h-1zM577 0h1v1h-1zM586 0h1v1h-1zM596 0h1v1h-1zM605 0h1v1h-1zM615 0h1v1h-1zM624 0h1v1h-1zM633 0h1v1h-1zM643 0h1v1h-1zM652 0h1v1h-1zM662 0h1v1h-1zM671 0h1v1h-1zM681 0h1v1h-1zM690 0h1v1h-1zM700 0h1v1h-1zM709 0h1v1h-1z"/><path transform="translate(0 698)" d="M9 0h1v1h-1zM18 0h1v1h-1zM28 0h1v1h-1zM37 0h1v1h-1zM47 0h1v1h-1zM56 0h1v1h-1zM66 0h1v1h-1zM75 0h1v1h-1zM85 0h1v1h-1zM94 0h1v1h-1zM104 0h1v1h-1zM113 0h1v1h-1zM123 0h1v1h-1zM132 0h1v1h-1zM141 0h1v1h-1zM151 0h1v1h-1zM160 0h1v1h-1zM170 0h1v1h-1zM179 0h1v1h-1zM189 0h1v1h-1zM198 0h1v1h-1zM208 0h1v1h-1zM217 0h1v1h-1zM227 0h1v1h-1zM236 0h1v1h-1zM246 0h1v1h-1zM255 0h1v1h-1zM264 0h1v1h-1zM274 0h1v1h-1zM283 0h1v1h-1zM293 0h1v1h-1zM302 0h1v1h-1zM312 0h1v1h-1zM321 0h1v1h-1zM331 0h1v1h-1zM340 0h1v1h-1zM350 0h1v1h-1zM359 0h1v1h-1zM369 0h1v1h-1zM378 0h1v1h-1zM387 0h1v1h-1zM397 0h1v1h-1zM406 0h1v1h-1zM416 0h1v1h-1zM425 0h1v1h-1zM435 0h1v1h-1zM444 0h1v1h-1zM454 0h1v1h-1zM463 0h1v1h-1zM473 0h1v1h-1zM482 0h1v1h-1zM492 0h1v1h-1zM501 0h1v1h-1zM510 0h1v1h-1zM520 0h1v1h-1zM529 0h1v1h-1zM539 0h1v1h-1zM548 0h1v1h-1zM558 0h1v1h-1zM567 0h1v1h-1zM577 0h1v1h-1zM586 0h1v1h-1zM596 0h1v1h-1zM605 0h1v1h-1zM615 0h1v1h-1zM624 0h1v1h-1zM633 0h1v1h-1zM643 0h1v1h-1zM652 0h1v1h-1zM662 0h1v1h-1zM671 0h1v1h-1zM681 0h1v1h-1zM690 0h1v1h-1zM700 0h1v1h-1zM709 0h1v1h-1z"/><path transform="translate(0 708)" d="M9 0h1v1h-1zM18 0h1v1h-1zM28 0h1v1h-1zM37 0h1v1h-1zM47 0h1v1h-1zM56 0h1v1h-1zM66 0h1v1h-1zM75 0h1v1h-1zM85 0h1v1h-1zM94 0h1v1h-1zM104 0h1v1h-1zM113 0h1v1h-1zM123 0h1v1h-1zM132 0h1v1h-1zM141 0h1v1h-1zM151 0h1v1h-1zM160 0h1v1h-1zM170 0h1v1h-1zM179 0h1v1h-1zM189 0h1v1h-1zM198 0h1v1h-1zM208 0h1v1h-1zM217 0h1v1h-1zM227 0h1v1h-1zM236 0h1v1h-1zM246 0h1v1h-1zM255 0h1v1h-1zM264 0h1v1h-1zM274 0h1v1h-1zM283 0h1v1h-1zM293 0h1v1h-1zM302 0h1v1h-1zM312 0h1v1h-1zM321 0h1v1h-1zM331 0h1v1h-1zM340 0h1v1h-1zM350 0h1v1h-1zM359 0h1v1h-1zM369 0h1v1h-1zM378 0h1v1h-1zM387 0h1v1h-1zM397 0h1v1h-1zM406 0h1v1h-1zM416 0h1v1h-1zM425 0h1v1h-1zM435 0h1v1h-1zM444 0h1v1h-1zM454 0h1v1h-1zM463 0h1v1h-1zM473 0h1v1h-1zM482 0h1v1h-1zM492 0h1v1h-1zM501 0h1v1h-1zM510 0h1v1h-1zM520 0h1v1h-1zM529 0h1v1h-1zM539 0h1v1h-1zM548 0h1v1h-1zM558 0h1v1h-1zM567 0h1v1h-1zM577 0h1v1h-1zM586 0h1v1h-1zM596 0h1v1h-1zM605 0h1v1h-1zM615 0h1v1h-1zM624 0h1v1h-1zM633 0h1v1h-1zM643 0h1v1h-1zM652 0h1v1h-1zM662 0h1v1h-1zM671 0h1v1h-1zM681 0h1v1h-1zM690 0h1v1h-1zM700 0h1v1h-1zM709 0h1v1h-1z"/><path transform="translate(0 717)" d="M9 0h1v1h-1zM18 0h1v1h-1zM28 0h1v1h-1zM37 0h1v1h-1zM47 0h1v1h-1zM56 0h1v1h-1zM66 0h1v1h-1zM75 0h1v1h-1zM85 0h1v1h-1zM94 0h1v1h-1zM104 0h1v1h-1zM113 0h1v1h-1zM123 0h1v1h-1zM132 0h1v1h-1zM141 0h1v1h-1zM151 0h1v1h-1zM160 0h1v1h-1zM170 0h1v1h-1zM179 0h1v1h-1zM189 0h1v1h-1zM198 0h1v1h-1zM208 0h1v1h-1zM217 0h1v1h-1zM227 0h1v1h-1zM236 0h1v1h-1zM246 0h1v1h-1zM255 0h1v1h-1zM264 0h1v1h-1zM274 0h1v1h-1zM283 0h1v1h-1zM293 0h1v1h-1zM302 0h1v1h-1zM312 0h1v1h-1zM321 0h1v1h-1zM331 0h1v1h-1zM340 0h1v1h-1zM350 0h1v1h-1zM359 0h1v1h-1zM369 0h1v1h-1zM378 0h1v1h-1zM387 0h1v1h-1zM397 0h1v1h-1zM406 0h1v1h-1zM416 0h1v1h-1zM425 0h1v1h-1zM435 0h1v1h-1zM444 0h1v1h-1zM454 0h1v1h-1zM463 0h1v1h-1zM473 0h1v1h-1zM482 0h1v1h-1zM492 0h1v1h-1zM501 0h1v1h-1zM510 0h1v1h-1zM520 0h1v1h-1zM529 0h1v1h-1zM539 0h1v1h-1zM548 0h1v1h-1zM558 0h1v1h-1zM567 0h1v1h-1zM577 0h1v1h-1zM586 0h1v1h-1zM596 0h1v1h-1zM605 0h1v1h-1zM615 0h1v1h-1zM624 0h1v1h-1zM633 0h1v1h-1zM643 0h1v1h-1zM652 0h1v1h-1zM662 0h1v1h-1zM671 0h1v1h-1zM681 0h1v1h-1zM690 0h1v1h-1zM700 0h1v1h-1zM709 0h1v1h-1z"/><path transform="translate(0 726)" d="M9 0h1v1h-1zM18 0h1v1h-1zM28 0h1v1h-1zM37 0h1v1h-1zM47 0h1v1h-1zM56 0h1v1h-1zM66 0h1v1h-1zM75 0h1v1h-1zM85 0h1v1h-1zM94 0h1v1h-1zM104 0h1v1h-1zM113 0h1v1h-1zM123 0h1v1h-1zM132 0h1v1h-1zM141 0h1v1h-1zM151 0h1v1h-1zM160 0h1v1h-1zM170 0h1v1h-1zM179 0h1v1h-1zM189 0h1v1h-1zM198 0h1v1h-1zM208 0h1v1h-1zM217 0h1v1h-1zM227 0h1v1h-1zM236 0h1v1h-1zM246 0h1v1h-1zM255 0h1v1h-1zM264 0h1v1h-1zM274 0h1v1h-1zM283 0h1v1h-1zM293 0h1v1h-1zM302 0h1v1h-1zM312 0h1v1h-1zM321 0h1v1h-1zM331 0h1v1h-1zM340 0h1v1h-1zM350 0h1v1h-1zM359 0h1v1h-1zM369 0h1v1h-1zM378 0h1v1h-1zM387 0h1v1h-1zM397 0h1v1h-1zM406 0h1v1h-1zM416 0h1v1h-1zM425 0h1v1h-1zM435 0h1v1h-1zM444 0h1v1h-1zM454 0h1v1h-1zM463 0h1v1h-1zM473 0h1v1h-1zM482 0h1v1h-1zM492 0h1v1h-1zM501 0h1v1h-1zM510 0h1v1h-1zM520 0h1v1h-1zM529 0h1v1h-1zM539 0h1v1h-1zM548 0h1v1h-1zM558 0h1v1h-1zM567 0h1v1h-1zM577 0h1v1h-1zM586 0h1v1h-1zM596 0h1v1h-1zM605 0h1v1h-1zM615 0h1v1h-1zM624 0h1v1h-1zM633 0h1v1h-1zM643 0h1v1h-1zM652 0h1v1h-1zM662 0h1v1h-1zM671 0h1v1h-1zM681 0h1v1h-1zM690 0h1v1h-1zM700 0h1v1h-1zM709 0h1v1h-1z"/><path transform="translate(0 736)" d="M9 0h1v1h-1zM18 0h1v1h-1zM28 0h1v1h-1zM37 0h1v1h-1zM47 0h1v1h-1zM56 0h1v1h-1zM66 0h1v1h-1zM75 0h1v1h-1zM85 0h1v1h-1zM94 0h1v1h-1zM104 0h1v1h-1zM113 0h1v1h-1zM123 0h1v1h-1zM132 0h1v1h-1zM141 0h1v1h-1zM151 0h1v1h-1zM160 0h1v1h-1zM170 0h1v1h-1zM179 0h1v1h-1zM189 0h1v1h-1zM198 0h1v1h-1zM208 0h1v1h-1zM217 0h1v1h-1zM227 0h1v1h-1zM236 0h1v1h-1zM246 0h1v1h-1zM255 0h1v1h-1zM264 0h1v1h-1zM274 0h1v1h-1zM283 0h1v1h-1zM293 0h1v1h-1zM302 0h1v1h-1zM312 0h1v1h-1zM321 0h1v1h-1zM331 0h1v1h-1zM340 0h1v1h-1zM350 0h1v1h-1zM359 0h1v1h-1zM369 0h1v1h-1zM378 0h1v1h-1zM387 0h1v1h-1zM397 0h1v1h-1zM406 0h1v1h-1zM416 0h1v1h-1zM425 0h1v1h-1zM435 0h1v1h-1zM444 0h1v1h-1zM454 0h1v1h-1zM463 0h1v1h-1zM473 0h1v1h-1zM482 0h1v1h-1zM492 0h1v1h-1zM501 0h1v1h-1zM510 0h1v1h-1zM520 0h1v1h-1zM529 0h1v1h-1zM539 0h1v1h-1zM548 0h1v1h-1zM558 0h1v1h-1zM567 0h1v1h-1zM577 0h1v1h-1zM586 0h1v1h-1zM596 0h1v1h-1zM605 0h1v1h-1zM615 0h1v1h-1zM624 0h1v1h-1zM633 0h1v1h-1zM643 0h1v1h-1zM652 0h1v1h-1zM662 0h1v1h-1zM671 0h1v1h-1zM681 0h1v1h-1zM690 0h1v1h-1zM700 0h1v1h-1zM709 0h1v1h-1z"/><path transform="translate(0 745)" d="M9 0h1v1h-1zM18 0h1v1h-1zM28 0h1v1h-1zM37 0h1v1h-1zM47 0h1v1h-1zM56 0h1v1h-1zM66 0h1v1h-1zM75 0h1v1h-1zM85 0h1v1h-1zM94 0h1v1h-1zM104 0h1v1h-1zM113 0h1v1h-1zM123 0h1v1h-1zM132 0h1v1h-1zM141 0h1v1h-1zM151 0h1v1h-1zM160 0h1v1h-1zM170 0h1v1h-1zM179 0h1v1h-1zM189 0h1v1h-1zM198 0h1v1h-1zM208 0h1v1h-1zM217 0h1v1h-1zM227 0h1v1h-1zM236 0h1v1h-1zM246 0h1v1h-1zM255 0h1v1h-1zM264 0h1v1h-1zM274 0h1v1h-1zM283 0h1v1h-1zM293 0h1v1h-1zM302 0h1v1h-1zM312 0h1v1h-1zM321 0h1v1h-1zM331 0h1v1h-1zM340 0h1v1h-1zM350 0h1v1h-1zM359 0h1v1h-1zM369 0h1v1h-1zM378 0h1v1h-1zM387 0h1v1h-1zM397 0h1v1h-1zM406 0h1v1h-1zM416 0h1v1h-1zM425 0h1v1h-1zM435 0h1v1h-1zM444 0h1v1h-1zM454 0h1v1h-1zM463 0h1v1h-1zM473 0h1v1h-1zM482 0h1v1h-1zM492 0h1v1h-1zM501 0h1v1h-1zM510 0h1v1h-1zM520 0h1v1h-1zM529 0h1v1h-1zM539 0h1v1h-1zM548 0h1v1h-1zM558 0h1v1h-1zM567 0h1v1h-1zM577 0h1v1h-1zM586 0h1v1h-1zM596 0h1v1h-1zM605 0h1v1h-1zM615 0h1v1h-1zM624 0h1v1h-1zM633 0h1v1h-1zM643 0h1v1h-1zM652 0h1v1h-1zM662 0h1v1h-1zM671 0h1v1h-1zM681 0h1v1h-1zM690 0h1v1h-1zM700 0h1v1h-1zM709 0h1v1h-1z"/><path transform="translate(0 755)" d="M9 0h1v1h-1zM18 0h1v1h-1zM28 0h1v1h-1zM37 0h1v1h-1zM47 0h1v1h-1zM56 0h1v1h-1zM66 0h1v1h-1zM75 0h1v1h-1zM85 0h1v1h-1zM94 0h1v1h-1zM104 0h1v1h-1zM113 0h1v1h-1zM123 0h1v1h-1zM132 0h1v1h-1zM141 0h1v1h-1zM151 0h1v1h-1zM160 0h1v1h-1zM170 0h1v1h-1zM179 0h1v1h-1zM189 0h1v1h-1zM198 0h1v1h-1zM208 0h1v1h-1zM217 0h1v1h-1zM227 0h1v1h-1zM236 0h1v1h-1zM246 0h1v1h-1zM255 0h1v1h-1zM264 0h1v1h-1zM274 0h1v1h-1zM283 0h1v1h-1zM293 0h1v1h-1zM302 0h1v1h-1zM312 0h1v1h-1zM321 0h1v1h-1zM331 0h1v1h-1zM340 0h1v1h-1zM350 0h1v1h-1zM359 0h1v1h-1zM369 0h1v1h-1zM378 0h1v1h-1zM387 0h1v1h-1zM397 0h1v1h-1zM406 0h1v1h-1zM416 0h1v1h-1zM425 0h1v1h-1zM435 0h1v1h-1zM444 0h1v1h-1zM454 0h1v1h-1zM463 0h1v1h-1zM473 0h1v1h-1zM482 0h1v1h-1zM492 0h1v1h-1zM501 0h1v1h-1zM510 0h1v1h-1zM520 0h1v1h-1zM529 0h1v1h-1zM539 0h1v1h-1zM548 0h1v1h-1zM558 0h1v1h-1zM567 0h1v1h-1zM577 0h1v1h-1zM586 0h1v1h-1zM596 0h1v1h-1zM605 0h1v1h-1zM615 0h1v1h-1zM624 0h1v1h-1zM633 0h1v1h-1zM643 0h1v1h-1zM652 0h1v1h-1zM662 0h1v1h-1zM671 0h1v1h-1zM681 0h1v1h-1zM690 0h1v1h-1zM700 0h1v1h-1zM709 0h1v1h-1z"/><path transform="translate(0 764)" d="M9 0h1v1h-1zM18 0h1v1h-1zM28 0h1v1h-1zM37 0h1v1h-1zM47 0h1v1h-1zM56 0h1v1h-1zM66 0h1v1h-1zM75 0h1v1h-1zM85 0h1v1h-1zM94 0h1v1h-1zM104 0h1v1h-1zM113 0h1v1h-1zM123 0h1v1h-1zM132 0h1v1h-1zM141 0h1v1h-1zM151 0h1v1h-1zM160 0h1v1h-1zM170 0h1v1h-1zM179 0h1v1h-1zM189 0h1v1h-1zM198 0h1v1h-1zM208 0h1v1h-1zM217 0h1v1h-1zM227 0h1v1h-1zM236 0h1v1h-1zM246 0h1v1h-1zM255 0h1v1h-1zM264 0h1v1h-1zM274 0h1v1h-1zM283 0h1v1h-1zM293 0h1v1h-1zM302 0h1v1h-1zM312 0h1v1h-1zM321 0h1v1h-1zM331 0h1v1h-1zM340 0h1v1h-1zM350 0h1v1h-1zM359 0h1v1h-1zM369 0h1v1h-1zM378 0h1v1h-1zM387 0h1v1h-1zM397 0h1v1h-1zM406 0h1v1h-1zM416 0h1v1h-1zM425 0h1v1h-1zM435 0h1v1h-1zM444 0h1v1h-1zM454 0h1v1h-1zM463 0h1v1h-1zM473 0h1v1h-1zM482 0h1v1h-1zM492 0h1v1h-1zM501 0h1v1h-1zM510 0h1v1h-1zM520 0h1v1h-1zM529 0h1v1h-1zM539 0h1v1h-1zM548 0h1v1h-1zM558 0h1v1h-1zM567 0h1v1h-1zM577 0h1v1h-1zM586 0h1v1h-1zM596 0h1v1h-1zM605 0h1v1h-1zM615 0h1v1h-1zM624 0h1v1h-1zM633 0h1v1h-1zM643 0h1v1h-1zM652 0h1v1h-1zM662 0h1v1h-1zM671 0h1v1h-1zM681 0h1v1h-1zM690 0h1v1h-1zM700 0h1v1h-1zM709 0h1v1h-1z"/><path transform="translate(0 774)" d="M9 0h1v1h-1zM18 0h1v1h-1zM28 0h1v1h-1zM37 0h1v1h-1zM47 0h1v1h-1zM56 0h1v1h-1zM66 0h1v1h-1zM75 0h1v1h-1zM85 0h1v1h-1zM94 0h1v1h-1zM104 0h1v1h-1zM113 0h1v1h-1zM123 0h1v1h-1zM132 0h1v1h-1zM141 0h1v1h-1zM151 0h1v1h-1zM160 0h1v1h-1zM170 0h1v1h-1zM179 0h1v1h-1zM189 0h1v1h-1zM198 0h1v1h-1zM208 0h1v1h-1zM217 0h1v1h-1zM227 0h1v1h-1zM236 0h1v1h-1zM246 0h1v1h-1zM255 0h1v1h-1zM264 0h1v1h-1zM274 0h1v1h-1zM283 0h1v1h-1zM293 0h1v1h-1zM302 0h1v1h-1zM312 0h1v1h-1zM321 0h1v1h-1zM331 0h1v1h-1zM340 0h1v1h-1zM350 0h1v1h-1zM359 0h1v1h-1zM369 0h1v1h-1zM378 0h1v1h-1zM387 0h1v1h-1zM397 0h1v1h-1zM406 0h1v1h-1zM416 0h1v1h-1zM425 0h1v1h-1zM435 0h1v1h-1zM444 0h1v1h-1zM454 0h1v1h-1zM463 0h1v1h-1zM473 0h1v1h-1zM482 0h1v1h-1zM492 0h1v1h-1zM501 0h1v1h-1zM510 0h1v1h-1zM520 0h1v1h-1zM529 0h1v1h-1zM539 0h1v1h-1zM548 0h1v1h-1zM558 0h1v1h-1zM567 0h1v1h-1zM577 0h1v1h-1zM586 0h1v1h-1zM596 0h1v1h-1zM605 0h1v1h-1zM615 0h1v1h-1zM624 0h1v1h-1zM633 0h1v1h-1zM643 0h1v1h-1zM652 0h1v1h-1zM662 0h1v1h-1zM671 0h1v1h-1zM681 0h1v1h-1zM690 0h1v1h-1zM700 0h1v1h-1zM709 0h1v1h-1z"/><path transform="translate(0 783)" d="M9 0h1v1h-1zM18 0h1v1h-1zM28 0h1v1h-1zM37 0h1v1h-1zM47 0h1v1h-1zM56 0h1v1h-1zM66 0h1v1h-1zM75 0h1v1h-1zM85 0h1v1h-1zM94 0h1v1h-1zM104 0h1v1h-1zM113 0h1v1h-1zM123 0h1v1h-1zM132 0h1v1h-1zM141 0h1v1h-1zM151 0h1v1h-1zM160 0h1v1h-1zM170 0h1v1h-1zM179 0h1v1h-1zM189 0h1v1h-1zM198 0h1v1h-1zM208 0h1v1h-1zM217 0h1v1h-1zM227 0h1v1h-1zM236 0h1v1h-1zM246 0h1v1h-1zM255 0h1v1h-1zM264 0h1v1h-1zM274 0h1v1h-1zM283 0h1v1h-1zM293 0h1v1h-1zM302 0h1v1h-1zM312 0h1v1h-1zM321 0h1v1h-1zM331 0h1v1h-1zM340 0h1v1h-1zM350 0h1v1h-1zM359 0h1v1h-1zM369 0h1v1h-1zM378 0h1v1h-1zM387 0h1v1h-1zM397 0h1v1h-1zM406 0h1v1h-1zM416 0h1v1h-1zM425 0h1v1h-1zM435 0h1v1h-1zM444 0h1v1h-1zM454 0h1v1h-1zM463 0h1v1h-1zM473 0h1v1h-1zM482 0h1v1h-1zM492 0h1v1h-1zM501 0h1v1h-1zM510 0h1v1h-1zM520 0h1v1h-1zM529 0h1v1h-1zM539 0h1v1h-1zM548 0h1v1h-1zM558 0h1v1h-1zM567 0h1v1h-1zM577 0h1v1h-1zM586 0h1v1h-1zM596 0h1v1h-1zM605 0h1v1h-1zM615 0h1v1h-1zM624 0h1v1h-1zM633 0h1v1h-1zM643 0h1v1h-1zM652 0h1v1h-1zM662 0h1v1h-1zM671 0h1v1h-1zM681 0h1v1h-1zM690 0h1v1h-1zM700 0h1v1h-1zM709 0h1v1h-1z"/><path transform="translate(0 793)" d="M9 0h1v1h-1zM18 0h1v1h-1zM28 0h1v1h-1zM37 0h1v1h-1zM47 0h1v1h-1zM56 0h1v1h-1zM66 0h1v1h-1zM75 0h1v1h-1zM85 0h1v1h-1zM94 0h1v1h-1zM104 0h1v1h-1zM113 0h1v1h-1zM123 0h1v1h-1zM132 0h1v1h-1zM141 0h1v1h-1zM151 0h1v1h-1zM160 0h1v1h-1zM170 0h1v1h-1zM179 0h1v1h-1zM189 0h1v1h-1zM198 0h1v1h-1zM208 0h1v1h-1zM217 0h1v1h-1zM227 0h1v1h-1zM236 0h1v1h-1zM246 0h1v1h-1zM255 0h1v1h-1zM264 0h1v1h-1zM274 0h1v1h-1zM283 0h1v1h-1zM293 0h1v1h-1zM302 0h1v1h-1zM312 0h1v1h-1zM321 0h1v1h-1zM331 0h1v1h-1zM340 0h1v1h-1zM350 0h1v1h-1zM359 0h1v1h-1zM369 0h1v1h-1zM378 0h1v1h-1zM387 0h1v1h-1zM397 0h1v1h-1zM406 0h1v1h-1zM416 0h1v1h-1zM425 0h1v1h-1zM435 0h1v1h-1zM444 0h1v1h-1zM454 0h1v1h-1zM463 0h1v1h-1zM473 0h1v1h-1zM482 0h1v1h-1zM492 0h1v1h-1zM501 0h1v1h-1zM510 0h1v1h-1zM520 0h1v1h-1zM529 0h1v1h-1zM539 0h1v1h-1zM548 0h1v1h-1zM558 0h1v1h-1zM567 0h1v1h-1zM577 0h1v1h-1zM586 0h1v1h-1zM596 0h1v1h-1zM605 0h1v1h-1zM615 0h1v1h-1zM624 0h1v1h-1zM633 0h1v1h-1zM643 0h1v1h-1zM652 0h1v1h-1zM662 0h1v1h-1zM671 0h1v1h-1zM681 0h1v1h-1zM690 0h1v1h-1zM700 0h1v1h-1zM709 0h1v1h-1z"/><path transform="translate(0 802)" d="M9 0h1v1h-1zM18 0h1v1h-1zM28 0h1v1h-1zM37 0h1v1h-1zM47 0h1v1h-1zM56 0h1v1h-1zM66 0h1v1h-1zM75 0h1v1h-1zM85 0h1v1h-1zM94 0h1v1h-1zM104 0h1v1h-1zM113 0h1v1h-1zM123 0h1v1h-1zM132 0h1v1h-1zM141 0h1v1h-1zM151 0h1v1h-1zM160 0h1v1h-1zM170 0h1v1h-1zM179 0h1v1h-1zM189 0h1v1h-1zM198 0h1v1h-1zM208 0h1v1h-1zM217 0h1v1h-1zM227 0h1v1h-1zM236 0h1v1h-1zM246 0h1v1h-1zM255 0h1v1h-1zM264 0h1v1h-1zM274 0h1v1h-1zM283 0h1v1h-1zM293 0h1v1h-1zM302 0h1v1h-1zM312 0h1v1h-1zM321 0h1v1h-1zM331 0h1v1h-1zM340 0h1v1h-1zM350 0h1v1h-1zM359 0h1v1h-1zM369 0h1v1h-1zM378 0h1v1h-1zM387 0h1v1h-1zM397 0h1v1h-1zM406 0h1v1h-1zM416 0h1v1h-1zM425 0h1v1h-1zM435 0h1v1h-1zM444 0h1v1h-1zM454 0h1v1h-1zM463 0h1v1h-1zM473 0h1v1h-1zM482 0h1v1h-1zM492 0h1v1h-1zM501 0h1v1h-1zM510 0h1v1h-1zM520 0h1v1h-1zM529 0h1v1h-1zM539 0h1v1h-1zM548 0h1v1h-1zM558 0h1v1h-1zM567 0h1v1h-1zM577 0h1v1h-1zM586 0h1v1h-1zM596 0h1v1h-1zM605 0h1v1h-1zM615 0h1v1h-1zM624 0h1v1h-1zM633 0h1v1h-1zM643 0h1v1h-1zM652 0h1v1h-1zM662 0h1v1h-1zM671 0h1v1h-1zM681 0h1v1h-1zM690 0h1v1h-1zM700 0h1v1h-1zM709 0h1v1h-1z"/><path transform="translate(0 812)" d="M9 0h1v1h-1zM18 0h1v1h-1zM28 0h1v1h-1zM37 0h1v1h-1zM47 0h1v1h-1zM56 0h1v1h-1zM66 0h1v1h-1zM75 0h1v1h-1zM85 0h1v1h-1zM94 0h1v1h-1zM104 0h1v1h-1zM113 0h1v1h-1zM123 0h1v1h-1zM132 0h1v1h-1zM141 0h1v1h-1zM151 0h1v1h-1zM160 0h1v1h-1zM170 0h1v1h-1zM179 0h1v1h-1zM189 0h1v1h-1zM198 0h1v1h-1zM208 0h1v1h-1zM217 0h1v1h-1zM227 0h1v1h-1zM236 0h1v1h-1zM246 0h1v1h-1zM255 0h1v1h-1zM264 0h1v1h-1zM274 0h1v1h-1zM283 0h1v1h-1zM293 0h1v1h-1zM302 0h1v1h-1zM312 0h1v1h-1zM321 0h1v1h-1zM331 0h1v1h-1zM340 0h1v1h-1zM350 0h1v1h-1zM359 0h1v1h-1zM369 0h1v1h-1zM378 0h1v1h-1zM387 0h1v1h-1zM397 0h1v1h-1zM406 0h1v1h-1zM416 0h1v1h-1zM425 0h1v1h-1zM435 0h1v1h-1zM444 0h1v1h-1zM454 0h1v1h-1zM463 0h1v1h-1zM473 0h1v1h-1zM482 0h1v1h-1zM492 0h1v1h-1zM501 0h1v1h-1zM510 0h1v1h-1zM520 0h1v1h-1zM529 0h1v1h-1zM539 0h1v1h-1zM548 0h1v1h-1zM558 0h1v1h-1zM567 0h1v1h-1zM577 0h1v1h-1zM586 0h1v1h-1zM596 0h1v1h-1zM605 0h1v1h-1zM615 0h1v1h-1zM624 0h1v1h-1zM633 0h1v1h-1zM643 0h1v1h-1zM652 0h1v1h-1zM662 0h1v1h-1zM671 0h1v1h-1zM681 0h1v1h-1zM690 0h1v1h-1zM700 0h1v1h-1zM709 0h1v1h-1z"/><path transform="translate(0 821)" d="M9 0h1v1h-1zM18 0h1v1h-1zM28 0h1v1h-1zM37 0h1v1h-1zM47 0h1v1h-1zM56 0h1v1h-1zM66 0h1v1h-1zM75 0h1v1h-1zM85 0h1v1h-1zM94 0h1v1h-1zM104 0h1v1h-1zM113 0h1v1h-1zM123 0h1v1h-1zM132 0h1v1h-1zM141 0h1v1h-1zM151 0h1v1h-1zM160 0h1v1h-1zM170 0h1v1h-1zM179 0h1v1h-1zM189 0h1v1h-1zM198 0h1v1h-1zM208 0h1v1h-1zM217 0h1v1h-1zM227 0h1v1h-1zM236 0h1v1h-1zM246 0h1v1h-1zM255 0h1v1h-1zM264 0h1v1h-1zM274 0h1v1h-1zM283 0h1v1h-1zM293 0h1v1h-1zM302 0h1v1h-1zM312 0h1v1h-1zM321 0h1v1h-1zM331 0h1v1h-1zM340 0h1v1h-1zM350 0h1v1h-1zM359 0h1v1h-1zM369 0h1v1h-1zM378 0h1v1h-1zM387 0h1v1h-1zM397 0h1v1h-1zM406 0h1v1h-1zM416 0h1v1h-1zM425 0h1v1h-1zM435 0h1v1h-1zM444 0h1v1h-1zM454 0h1v1h-1zM463 0h1v1h-1zM473 0h1v1h-1zM482 0h1v1h-1zM492 0h1v1h-1zM501 0h1v1h-1zM510 0h1v1h-1zM520 0h1v1h-1zM529 0h1v1h-1zM539 0h1v1h-1zM548 0h1v1h-1zM558 0h1v1h-1zM567 0h1v1h-1zM577 0h1v1h-1zM586 0h1v1h-1zM596 0h1v1h-1zM605 0h1v1h-1zM615 0h1v1h-1zM624 0h1v1h-1zM633 0h1v1h-1zM643 0h1v1h-1zM652 0h1v1h-1zM662 0h1v1h-1zM671 0h1v1h-1zM681 0h1v1h-1zM690 0h1v1h-1zM700 0h1v1h-1zM709 0h1v1h-1z"/><path transform="translate(0 831)" d="M9 0h1v1h-1zM18 0h1v1h-1zM28 0h1v1h-1zM37 0h1v1h-1zM47 0h1v1h-1zM56 0h1v1h-1zM66 0h1v1h-1zM75 0h1v1h-1zM85 0h1v1h-1zM94 0h1v1h-1zM104 0h1v1h-1zM113 0h1v1h-1zM123 0h1v1h-1zM132 0h1v1h-1zM141 0h1v1h-1zM151 0h1v1h-1zM160 0h1v1h-1zM170 0h1v1h-1zM179 0h1v1h-1zM189 0h1v1h-1zM198 0h1v1h-1zM208 0h1v1h-1zM217 0h1v1h-1zM227 0h1v1h-1zM236 0h1v1h-1zM246 0h1v1h-1zM255 0h1v1h-1zM264 0h1v1h-1zM274 0h1v1h-1zM283 0h1v1h-1zM293 0h1v1h-1zM302 0h1v1h-1zM312 0h1v1h-1zM321 0h1v1h-1zM331 0h1v1h-1zM340 0h1v1h-1zM350 0h1v1h-1zM359 0h1v1h-1zM369 0h1v1h-1zM378 0h1v1h-1zM387 0h1v1h-1zM397 0h1v1h-1zM406 0h1v1h-1zM416 0h1v1h-1zM425 0h1v1h-1zM435 0h1v1h-1zM444 0h1v1h-1zM454 0h1v1h-1zM463 0h1v1h-1zM473 0h1v1h-1zM482 0h1v1h-1zM492 0h1v1h-1zM501 0h1v1h-1zM510 0h1v1h-1zM520 0h1v1h-1zM529 0h1v1h-1zM539 0h1v1h-1zM548 0h1v1h-1zM558 0h1v1h-1zM567 0h1v1h-1zM577 0h1v1h-1zM586 0h1v1h-1zM596 0h1v1h-1zM605 0h1v1h-1zM615 0h1v1h-1zM624 0h1v1h-1zM633 0h1v1h-1zM643 0h1v1h-1zM652 0h1v1h-1zM662 0h1v1h-1zM671 0h1v1h-1zM681 0h1v1h-1zM690 0h1v1h-1zM700 0h1v1h-1zM709 0h1v1h-1z"/></g></svg>
<svg style="left:175px;top:202px" width="719" height="3"><defs><pattern id="s202" patternUnits="userSpaceOnUse" width="2" height="2"><rect x="0" y="0" width="1" height="1" fill="#c2c2c2"/><rect x="1" y="1" width="1" height="1" fill="#c2c2c2"/></pattern></defs><rect width="719" height="3" fill="url(#s202)"/></svg>
<svg style="left:175px;top:631px" width="719" height="3"><defs><pattern id="s631" patternUnits="userSpaceOnUse" width="2" height="2"><rect x="0" y="0" width="1" height="1" fill="#c2c2c2"/><rect x="1" y="1" width="1" height="1" fill="#c2c2c2"/></pattern></defs><rect width="719" height="3" fill="url(#s631)"/></svg>
<svg style="left:175px;top:681px" width="719" height="3"><defs><pattern id="s681" patternUnits="userSpaceOnUse" width="2" height="2"><rect x="0" y="0" width="1" height="1" fill="#c2c2c2"/><rect x="1" y="1" width="1" height="1" fill="#c2c2c2"/></pattern></defs><rect width="719" height="3" fill="url(#s681)"/></svg>
<div class="vg" style="left:192px;top:99px;height:832px"></div>
<div class="vg" style="left:203px;top:99px;height:832px"></div>
<div class="vg" style="left:209px;top:99px;height:832px"></div>
<div class="vg" style="left:215px;top:99px;height:832px"></div>
<div class="vg" style="left:345px;top:99px;height:832px"></div>
<div class="vg" style="left:838px;top:99px;height:832px"></div>
<div class="hg" style="left:175px;top:184px;width:719px"></div>
<div class="hg" style="left:175px;top:489px;width:719px"></div>
<div class="hg" style="left:175px;top:551px;width:719px"></div>
<div class="hg" style="left:175px;top:780px;width:719px"></div>
<div class="hg" style="left:175px;top:786px;width:719px"></div>
<div class="hg" style="left:175px;top:842px;width:719px"></div>
<svg style="left:166px;top:179.5px" width="10" height="10"><path d="M1.7 1h3.3L9 5 5 9H1.7z" fill="#ececec" stroke="#111" stroke-width="1.15"/></svg>
<svg style="left:166px;top:484.5px" width="10" height="10"><path d="M1.7 1h3.3L9 5 5 9H1.7z" fill="#ececec" stroke="#111" stroke-width="1.15"/></svg>
<svg style="left:166px;top:546.5px" width="10" height="10"><path d="M1.7 1h3.3L9 5 5 9H1.7z" fill="#ececec" stroke="#111" stroke-width="1.15"/></svg>
<svg style="left:166px;top:629.5px" width="10" height="10"><path d="M1.7 1h3.3L9 5 5 9H1.7z" fill="#ececec" stroke="#111" stroke-width="1.15"/></svg>
<svg style="left:166px;top:775.5px" width="10" height="10"><path d="M1.7 1h3.3L9 5 5 9H1.7z" fill="#ececec" stroke="#111" stroke-width="1.15"/></svg>
<svg style="left:166px;top:781.5px" width="10" height="10"><path d="M1.7 1h3.3L9 5 5 9H1.7z" fill="#ececec" stroke="#111" stroke-width="1.15"/></svg>
<svg style="left:166px;top:837.5px" width="10" height="10"><path d="M1.7 1h3.3L9 5 5 9H1.7z" fill="#ececec" stroke="#111" stroke-width="1.15"/></svg>
<svg style="left:170px;top:710px" width="6" height="10"><path d="M1 0.5l4 4.5-4 4.5" fill="none" stroke="#111"/></svg>
<div class="a" style="left:215px;top:99px;width:267px;height:80px;overflow:hidden">
<div class="t" style="left:4px;top:-1.3px;line-height:16px;font-size:12.15px;color:#1c1c1c">[CRWorksheet.UserCompany]</div>
<div class="t" style="left:4px;top:12.3px;line-height:16px;font-size:12.15px;color:#1c1c1c">[CRWorksheet.UserCompanyStreet]</div>
<div class="t" style="left:4px;top:25.9px;line-height:16px;font-size:12.15px;color:#1c1c1c">[CRWorksheet.UserCompanyZip]</div>
<div class="t" style="left:4px;top:39.5px;line-height:16px;font-size:12.15px;color:#1c1c1c">[CRWorksheet.UserCompanyPlace]</div>
<div class="t" style="left:4px;top:53.1px;line-height:16px;font-size:12.15px;color:#1c1c1c">Tel. [CRWorksheet.UserCompany_Phone] |</div>
<div class="t" style="left:4px;top:66.7px;line-height:16px;font-size:12.15px;color:#1c1c1c">Fax: [CRWorksheet.UserCompany_Fax]</div>
</div>
<div class="a" style="left:478px;top:99px;width:4px;height:1px;background:#111"></div>
<div class="a" style="left:481px;top:99px;width:1px;height:4px;background:#111"></div>
<div class="a" style="left:215px;top:178px;width:4px;height:1px;background:#111"></div>
<div class="a" style="left:215px;top:175px;width:1px;height:4px;background:#111"></div>
<div class="a" style="left:478px;top:178px;width:4px;height:1px;background:#111"></div>
<div class="a" style="left:481px;top:175px;width:1px;height:4px;background:#111"></div>
<svg style="left:467px;top:99px" width="10" height="10"><rect x="0.5" y="0.5" width="9" height="9" fill="#fff" stroke="#444"/><path d="M3.5 2.5l3.5 2.5-3.5 2.5z" fill="#111"/></svg>
<div class="a" style="left:668px;top:160px;width:4px;height:1px;background:#111"></div>
<div class="a" style="left:668px;top:157px;width:1px;height:4px;background:#111"></div>
<div class="a" style="left:875px;top:160px;width:4px;height:1px;background:#111"></div>
<div class="a" style="left:878px;top:157px;width:1px;height:4px;background:#111"></div>
<div class="a" style="left:193px;top:195px;width:686px;height:2px;background:#0a0a0a"></div>
<div class="a" style="left:215px;top:240px;width:4px;height:1px;background:#111"></div>
<div class="a" style="left:215px;top:240px;width:1px;height:4px;background:#111"></div>
<div class="a" style="left:490px;top:240px;width:4px;height:1px;background:#111"></div>
<div class="a" style="left:493px;top:240px;width:1px;height:4px;background:#111"></div>
<div class="a" style="left:215px;top:307px;width:4px;height:1px;background:#111"></div>
<div class="a" style="left:215px;top:304px;width:1px;height:4px;background:#111"></div>
<div class="a" style="left:490px;top:307px;width:4px;height:1px;background:#111"></div>
<div class="a" style="left:493px;top:304px;width:1px;height:4px;background:#111"></div>
<div class="t" style="left:219px;top:239.3px;height:20px;line-height:20px;font-size:13.1px;color:#1c1c1c;">[CRWorksheet.BillName]</div>
<div class="t" style="left:219px;top:254.7px;height:20px;line-height:20px;font-size:13.1px;color:#1c1c1c;">[CRWorksheet.BillStreet]</div>
<div class="t" style="left:219px;top:270.1px;height:20px;line-height:20px;font-size:13.1px;color:#1c1c1c;">[CRWorksheet.BillZip]</div>
<div class="t" style="left:219px;top:285.5px;height:20px;line-height:20px;font-size:13.1px;color:#1c1c1c;">[CRWorksheet.BillPlace]</div>
<div class="a" style="left:703px;top:295px;width:4px;height:1px;background:#111"></div>
<div class="a" style="left:703px;top:295px;width:1px;height:4px;background:#111"></div>
<div class="a" style="left:835px;top:295px;width:4px;height:1px;background:#111"></div>
<div class="a" style="left:838px;top:295px;width:1px;height:4px;background:#111"></div>
<div class="a" style="left:703px;top:329px;width:4px;height:1px;background:#111"></div>
<div class="a" style="left:703px;top:326px;width:1px;height:4px;background:#111"></div>
<div class="a" style="left:835px;top:329px;width:4px;height:1px;background:#111"></div>
<div class="a" style="left:838px;top:326px;width:1px;height:4px;background:#111"></div>
<div class="t" style="left:703px;top:295px;width:131px;text-align:right;font-size:13.1px;line-height:16px;white-space:normal;color:#1c1c1c">[CRWorksheet.Datu<br>m]</div>
<div class="a" style="left:215px;top:356px;width:4px;height:1px;background:#111"></div>
<div class="a" style="left:215px;top:356px;width:1px;height:4px;background:#111"></div>
<div class="a" style="left:278px;top:356px;width:4px;height:1px;background:#111"></div>
<div class="a" style="left:281px;top:356px;width:1px;height:4px;background:#111"></div>
<div class="a" style="left:215px;top:375px;width:4px;height:1px;background:#111"></div>
<div class="a" style="left:215px;top:372px;width:1px;height:4px;background:#111"></div>
<div class="a" style="left:278px;top:375px;width:4px;height:1px;background:#111"></div>
<div class="a" style="left:281px;top:372px;width:1px;height:4px;background:#111"></div>
<div class="t" style="left:219px;top:355.4px;height:20px;line-height:20px;font-size:12.8px;color:#1c1c1c;font-weight:bold;">Objekt:</div>
<div class="t" style="left:349.5px;top:357.5px;height:20px;line-height:20px;font-size:12.8px;color:#1c1c1c;font-weight:bold;">[CRWorksheet.ObjectName]</div>
<div class="t" style="left:349.5px;top:381.7px;height:20px;line-height:20px;font-size:12.8px;color:#1c1c1c;font-weight:bold;">[CRWorksheet.ObjectStreet]</div>
<div class="t" style="left:349.5px;top:405.5px;height:20px;line-height:20px;font-size:12.8px;color:#1c1c1c;font-weight:bold;">[CRWorksheet.ObjectZip]</div>
<div class="t" style="left:349.5px;top:430.6px;height:20px;line-height:20px;font-size:12.8px;color:#1c1c1c;font-weight:bold;">[CRWorksheet.Number]</div>
<div class="t" style="left:349.5px;top:452.7px;height:20px;line-height:20px;font-size:12.8px;color:#1c1c1c;font-weight:bold;">[CRWorksheet.Subject]</div>
<div class="t" style="left:512.5px;top:405.5px;height:20px;line-height:20px;font-size:12.8px;color:#1c1c1c;font-weight:bold;letter-spacing:0.2px">[CRWorksheet.ObjectPlace]</div>
<div class="a" style="left:346px;top:357px;width:4px;height:1px;background:#111"></div>
<div class="a" style="left:346px;top:357px;width:1px;height:4px;background:#111"></div>
<div class="a" style="left:346px;top:374px;width:4px;height:1px;background:#111"></div>
<div class="a" style="left:346px;top:371px;width:1px;height:4px;background:#111"></div>
<div class="a" style="left:835px;top:357px;width:4px;height:1px;background:#111"></div>
<div class="a" style="left:838px;top:357px;width:1px;height:4px;background:#111"></div>
<div class="a" style="left:835px;top:374px;width:4px;height:1px;background:#111"></div>
<div class="a" style="left:838px;top:371px;width:1px;height:4px;background:#111"></div>
<div class="a" style="left:346px;top:383px;width:4px;height:1px;background:#111"></div>
<div class="a" style="left:346px;top:383px;width:1px;height:4px;background:#111"></div>
<div class="a" style="left:346px;top:400px;width:4px;height:1px;background:#111"></div>
<div class="a" style="left:346px;top:397px;width:1px;height:4px;background:#111"></div>
<div class="a" style="left:835px;top:383px;width:4px;height:1px;background:#111"></div>
<div class="a" style="left:838px;top:383px;width:1px;height:4px;background:#111"></div>
<div class="a" style="left:835px;top:400px;width:4px;height:1px;background:#111"></div>
<div class="a" style="left:838px;top:397px;width:1px;height:4px;background:#111"></div>
<div class="a" style="left:346px;top:407px;width:4px;height:1px;background:#111"></div>
<div class="a" style="left:346px;top:407px;width:1px;height:4px;background:#111"></div>
<div class="a" style="left:346px;top:424px;width:4px;height:1px;background:#111"></div>
<div class="a" style="left:346px;top:421px;width:1px;height:4px;background:#111"></div>
<div class="a" style="left:835px;top:407px;width:4px;height:1px;background:#111"></div>
<div class="a" style="left:838px;top:407px;width:1px;height:4px;background:#111"></div>
<div class="a" style="left:835px;top:424px;width:4px;height:1px;background:#111"></div>
<div class="a" style="left:838px;top:421px;width:1px;height:4px;background:#111"></div>
<div class="a" style="left:346px;top:432px;width:4px;height:1px;background:#111"></div>
<div class="a" style="left:346px;top:432px;width:1px;height:4px;background:#111"></div>
<div class="a" style="left:346px;top:449px;width:4px;height:1px;background:#111"></div>
<div class="a" style="left:346px;top:446px;width:1px;height:4px;background:#111"></div>
<div class="a" style="left:835px;top:432px;width:4px;height:1px;background:#111"></div>
<div class="a" style="left:838px;top:432px;width:1px;height:4px;background:#111"></div>
<div class="a" style="left:835px;top:449px;width:4px;height:1px;background:#111"></div>
<div class="a" style="left:838px;top:446px;width:1px;height:4px;background:#111"></div>
<div class="a" style="left:346px;top:456px;width:4px;height:1px;background:#111"></div>
<div class="a" style="left:346px;top:456px;width:1px;height:4px;background:#111"></div>
<div class="a" style="left:346px;top:471px;width:4px;height:1px;background:#111"></div>
<div class="a" style="left:346px;top:468px;width:1px;height:4px;background:#111"></div>
<div class="a" style="left:835px;top:456px;width:4px;height:1px;background:#111"></div>
<div class="a" style="left:838px;top:456px;width:1px;height:4px;background:#111"></div>
<div class="a" style="left:835px;top:471px;width:4px;height:1px;background:#111"></div>
<div class="a" style="left:838px;top:468px;width:1px;height:4px;background:#111"></div>
<div class="a" style="left:215px;top:432px;width:4px;height:1px;background:#111"></div>
<div class="a" style="left:215px;top:432px;width:1px;height:4px;background:#111"></div>
<div class="a" style="left:308px;top:432px;width:4px;height:1px;background:#111"></div>
<div class="a" style="left:311px;top:432px;width:1px;height:4px;background:#111"></div>
<div class="a" style="left:215px;top:449px;width:4px;height:1px;background:#111"></div>
<div class="a" style="left:215px;top:446px;width:1px;height:4px;background:#111"></div>
<div class="a" style="left:308px;top:449px;width:4px;height:1px;background:#111"></div>
<div class="a" style="left:311px;top:446px;width:1px;height:4px;background:#111"></div>
<div class="t" style="left:219px;top:430.6px;height:20px;line-height:20px;font-size:12.8px;color:#1c1c1c;font-weight:bold;">Angebot:</div>
<div class="a" style="left:215px;top:482px;width:4px;height:1px;background:#111"></div>
<div class="a" style="left:215px;top:482px;width:1px;height:4px;background:#111"></div>
<div class="a" style="left:319px;top:482px;width:4px;height:1px;background:#111"></div>
<div class="a" style="left:322px;top:482px;width:1px;height:4px;background:#111"></div>
<div class="a" style="left:215px;top:499px;width:4px;height:1px;background:#111"></div>
<div class="a" style="left:215px;top:496px;width:1px;height:4px;background:#111"></div>
<div class="a" style="left:319px;top:499px;width:4px;height:1px;background:#111"></div>
<div class="a" style="left:322px;top:496px;width:1px;height:4px;background:#111"></div>
<div class="t" style="left:218px;top:480px;height:20px;line-height:20px;font-size:11.1px;color:#1c1c1c;letter-spacing:-0.3px">AnsprechpartnerIn:</div>
<div class="a" style="left:346px;top:483px;width:4px;height:1px;background:#111"></div>
<div class="a" style="left:346px;top:483px;width:1px;height:4px;background:#111"></div>
<div class="a" style="left:346px;top:522px;width:4px;height:1px;background:#111"></div>
<div class="a" style="left:346px;top:519px;width:1px;height:4px;background:#111"></div>
<div class="a" style="left:835px;top:483px;width:4px;height:1px;background:#111"></div>
<div class="a" style="left:838px;top:483px;width:1px;height:4px;background:#111"></div>
<div class="a" style="left:835px;top:522px;width:4px;height:1px;background:#111"></div>
<div class="a" style="left:838px;top:519px;width:1px;height:4px;background:#111"></div>
<div class="t" style="left:349px;top:487px;height:20px;line-height:20px;font-size:11.1px;color:#1c1c1c;">[CRWorksheet.ContactPersonName]</div>
<div class="t" style="left:349px;top:498.6px;height:20px;line-height:20px;font-size:11.1px;color:#1c1c1c;">Tel.[CRWorksheet.ContactPersonTel]</div>
<div class="a" style="left:215px;top:540px;width:4px;height:1px;background:#111"></div>
<div class="a" style="left:215px;top:540px;width:1px;height:4px;background:#111"></div>
<div class="a" style="left:215px;top:555px;width:4px;height:1px;background:#111"></div>
<div class="a" style="left:215px;top:552px;width:1px;height:4px;background:#111"></div>
<div class="a" style="left:835px;top:540px;width:4px;height:1px;background:#111"></div>
<div class="a" style="left:838px;top:540px;width:1px;height:4px;background:#111"></div>
<div class="a" style="left:835px;top:555px;width:4px;height:1px;background:#111"></div>
<div class="a" style="left:838px;top:552px;width:1px;height:4px;background:#111"></div>
<div class="t" style="left:219.5px;top:537.3px;height:20px;line-height:20px;font-size:12.86px;color:#1c1c1c;">Sehr geehrte Damen und Herren,</div>
<div class="a" style="left:215px;top:563px;width:4px;height:1px;background:#111"></div>
<div class="a" style="left:215px;top:563px;width:1px;height:4px;background:#111"></div>
<div class="a" style="left:215px;top:577px;width:4px;height:1px;background:#111"></div>
<div class="a" style="left:215px;top:574px;width:1px;height:4px;background:#111"></div>
<div class="a" style="left:835px;top:563px;width:4px;height:1px;background:#111"></div>
<div class="a" style="left:838px;top:563px;width:1px;height:4px;background:#111"></div>
<div class="a" style="left:835px;top:595px;width:4px;height:1px;background:#111"></div>
<div class="a" style="left:838px;top:592px;width:1px;height:4px;background:#111"></div>
<div class="t" style="left:219.5px;top:560.4px;height:20px;line-height:20px;font-size:13.2px;color:#1c1c1c;">[CRWorksheet.Text]</div>
<div class="a" style="left:215px;top:596px;width:4px;height:1px;background:#111"></div>
<div class="a" style="left:215px;top:596px;width:1px;height:4px;background:#111"></div>
<div class="a" style="left:393px;top:596px;width:4px;height:1px;background:#111"></div>
<div class="a" style="left:396px;top:596px;width:1px;height:4px;background:#111"></div>
<div class="a" style="left:215px;top:613px;width:4px;height:1px;background:#111"></div>
<div class="a" style="left:215px;top:610px;width:1px;height:4px;background:#111"></div>
<div class="a" style="left:393px;top:613px;width:4px;height:1px;background:#111"></div>
<div class="a" style="left:396px;top:610px;width:1px;height:4px;background:#111"></div>
<div class="t" style="left:219px;top:594.5px;height:20px;line-height:20px;font-size:12.95px;color:#1c1c1c;font-weight:bold;">Beschreibung / Artikel</div>
<div class="a" style="left:504px;top:596px;width:4px;height:1px;background:#111"></div>
<div class="a" style="left:504px;top:596px;width:1px;height:4px;background:#111"></div>
<div class="a" style="left:569px;top:596px;width:4px;height:1px;background:#111"></div>
<div class="a" style="left:572px;top:596px;width:1px;height:4px;background:#111"></div>
<div class="a" style="left:504px;top:613px;width:4px;height:1px;background:#111"></div>
<div class="a" style="left:504px;top:610px;width:1px;height:4px;background:#111"></div>
<div class="a" style="left:569px;top:613px;width:4px;height:1px;background:#111"></div>
<div class="a" style="left:572px;top:610px;width:1px;height:4px;background:#111"></div>
<div class="t" style="left:509px;top:594.5px;height:20px;line-height:20px;font-size:12.6px;color:#1c1c1c;font-weight:bold;">Menge</div>
<div class="a" style="left:589px;top:596px;width:4px;height:1px;background:#111"></div>
<div class="a" style="left:589px;top:596px;width:1px;height:4px;background:#111"></div>
<div class="a" style="left:682px;top:596px;width:4px;height:1px;background:#111"></div>
<div class="a" style="left:685px;top:596px;width:1px;height:4px;background:#111"></div>
<div class="a" style="left:589px;top:613px;width:4px;height:1px;background:#111"></div>
<div class="a" style="left:589px;top:610px;width:1px;height:4px;background:#111"></div>
<div class="a" style="left:682px;top:613px;width:4px;height:1px;background:#111"></div>
<div class="a" style="left:685px;top:610px;width:1px;height:4px;background:#111"></div>
<div class="t" style="left:593.6px;top:594.5px;height:20px;line-height:20px;font-size:13.0px;color:#1c1c1c;font-weight:bold;">Einzelpreis</div>
<div class="a" style="left:735px;top:596px;width:4px;height:1px;background:#111"></div>
<div class="a" style="left:735px;top:596px;width:1px;height:4px;background:#111"></div>
<div class="a" style="left:828px;top:596px;width:4px;height:1px;background:#111"></div>
<div class="a" style="left:831px;top:596px;width:1px;height:4px;background:#111"></div>
<div class="a" style="left:735px;top:613px;width:4px;height:1px;background:#111"></div>
<div class="a" style="left:735px;top:610px;width:1px;height:4px;background:#111"></div>
<div class="a" style="left:828px;top:613px;width:4px;height:1px;background:#111"></div>
<div class="a" style="left:831px;top:610px;width:1px;height:4px;background:#111"></div>
<div class="t" style="left:739.3px;top:594.5px;height:20px;line-height:20px;font-size:12.76px;color:#1c1c1c;font-weight:bold;">Gesamtpreis</div>
<div class="a" style="left:215px;top:634px;width:4px;height:1px;background:#111"></div>
<div class="a" style="left:215px;top:634px;width:1px;height:4px;background:#111"></div>
<div class="a" style="left:498px;top:634px;width:4px;height:1px;background:#111"></div>
<div class="a" style="left:501px;top:634px;width:1px;height:4px;background:#111"></div>
<div class="a" style="left:215px;top:673px;width:4px;height:1px;background:#111"></div>
<div class="a" style="left:215px;top:670px;width:1px;height:4px;background:#111"></div>
<div class="a" style="left:498px;top:673px;width:4px;height:1px;background:#111"></div>
<div class="a" style="left:501px;top:670px;width:1px;height:4px;background:#111"></div>
<div class="t" style="left:219px;top:628.6px;height:20px;line-height:20px;font-size:13.2px;color:#1c1c1c;">[CBillingPosition.Label]</div>
<div class="t" style="left:219px;top:644.2px;height:20px;line-height:20px;font-size:13.2px;color:#1c1c1c;">[CBillingPosition.Text]</div>
<div class="a" style="left:508px;top:634px;width:4px;height:1px;background:#111"></div>
<div class="a" style="left:508px;top:634px;width:1px;height:4px;background:#111"></div>
<div class="a" style="left:559px;top:634px;width:4px;height:1px;background:#111"></div>
<div class="a" style="left:562px;top:634px;width:1px;height:4px;background:#111"></div>
<div class="a" style="left:508px;top:650px;width:4px;height:1px;background:#111"></div>
<div class="a" style="left:508px;top:647px;width:1px;height:4px;background:#111"></div>
<div class="a" style="left:559px;top:650px;width:4px;height:1px;background:#111"></div>
<div class="a" style="left:562px;top:647px;width:1px;height:4px;background:#111"></div>
<div class="t" style="left:512px;top:628.6px;height:20px;line-height:20px;font-size:13.2px;color:#1c1c1c;">[CBill...</div>
<div class="a" style="left:591px;top:634px;width:4px;height:1px;background:#111"></div>
<div class="a" style="left:591px;top:634px;width:1px;height:4px;background:#111"></div>
<div class="a" style="left:682px;top:634px;width:4px;height:1px;background:#111"></div>
<div class="a" style="left:685px;top:634px;width:1px;height:4px;background:#111"></div>
<div class="a" style="left:591px;top:650px;width:4px;height:1px;background:#111"></div>
<div class="a" style="left:591px;top:647px;width:1px;height:4px;background:#111"></div>
<div class="a" style="left:682px;top:650px;width:4px;height:1px;background:#111"></div>
<div class="a" style="left:685px;top:647px;width:1px;height:4px;background:#111"></div>
<div class="t" style="left:599px;top:628.6px;height:20px;line-height:20px;font-size:13.2px;color:#1c1c1c;">[CBillingPo...</div>
<div class="a" style="left:735px;top:634px;width:4px;height:1px;background:#111"></div>
<div class="a" style="left:735px;top:634px;width:1px;height:4px;background:#111"></div>
<div class="a" style="left:835px;top:634px;width:4px;height:1px;background:#111"></div>
<div class="a" style="left:838px;top:634px;width:1px;height:4px;background:#111"></div>
<div class="a" style="left:735px;top:650px;width:4px;height:1px;background:#111"></div>
<div class="a" style="left:735px;top:647px;width:1px;height:4px;background:#111"></div>
<div class="a" style="left:835px;top:650px;width:4px;height:1px;background:#111"></div>
<div class="a" style="left:838px;top:647px;width:1px;height:4px;background:#111"></div>
<div class="a" style="left:736px;top:634px;width:100px;height:16px;overflow:hidden"><div class="t" style="left:5px;top:-4px;line-height:20px;font-size:13.2px;color:#1c1c1c">[([CBillingPositi</div><div class="t" style="left:25px;top:9px;line-height:20px;font-size:13.2px;color:#1c1c1c">on.Menge]*</div></div>
<div class="a" style="left:555px;top:687px;width:4px;height:1px;background:#111"></div>
<div class="a" style="left:555px;top:687px;width:1px;height:4px;background:#111"></div>
<div class="a" style="left:684px;top:687px;width:4px;height:1px;background:#111"></div>
<div class="a" style="left:687px;top:687px;width:1px;height:4px;background:#111"></div>
<div class="a" style="left:555px;top:706px;width:4px;height:1px;background:#111"></div>
<div class="a" style="left:555px;top:703px;width:1px;height:4px;background:#111"></div>
<div class="a" style="left:684px;top:706px;width:4px;height:1px;background:#111"></div>
<div class="a" style="left:687px;top:703px;width:1px;height:4px;background:#111"></div>
<div class="t" style="left:559.8px;top:685.8px;height:20px;line-height:20px;font-size:12.7px;color:#1c1c1c;font-weight:bold;">Nettosumme:</div>
<div class="a" style="left:735px;top:687px;width:4px;height:1px;background:#111"></div>
<div class="a" style="left:735px;top:687px;width:1px;height:4px;background:#111"></div>
<div class="a" style="left:834px;top:687px;width:4px;height:1px;background:#111"></div>
<div class="a" style="left:837px;top:687px;width:1px;height:4px;background:#111"></div>
<div class="a" style="left:735px;top:706px;width:4px;height:1px;background:#111"></div>
<div class="a" style="left:735px;top:703px;width:1px;height:4px;background:#111"></div>
<div class="a" style="left:834px;top:706px;width:4px;height:1px;background:#111"></div>
<div class="a" style="left:837px;top:703px;width:1px;height:4px;background:#111"></div>
<div class="t" style="left:767.6px;top:685.8px;height:20px;line-height:20px;font-size:12.7px;color:#1c1c1c;font-weight:bold;">[Total]</div>
<div class="a" style="left:555px;top:702px;width:4px;height:1px;background:#111"></div>
<div class="a" style="left:555px;top:702px;width:1px;height:4px;background:#111"></div>
<div class="a" style="left:718px;top:702px;width:4px;height:1px;background:#111"></div>
<div class="a" style="left:721px;top:702px;width:1px;height:4px;background:#111"></div>
<div class="a" style="left:555px;top:728px;width:4px;height:1px;background:#111"></div>
<div class="a" style="left:555px;top:725px;width:1px;height:4px;background:#111"></div>
<div class="a" style="left:718px;top:728px;width:4px;height:1px;background:#111"></div>
<div class="a" style="left:721px;top:725px;width:1px;height:4px;background:#111"></div>
<div class="t" style="left:559px;top:710.9px;height:20px;line-height:20px;font-size:12.9px;color:#1c1c1c;">zzgl. 19% Umsatzsteuer:</div>
<div class="a" style="left:735px;top:710px;width:4px;height:1px;background:#111"></div>
<div class="a" style="left:735px;top:710px;width:1px;height:4px;background:#111"></div>
<div class="a" style="left:834px;top:710px;width:4px;height:1px;background:#111"></div>
<div class="a" style="left:837px;top:710px;width:1px;height:4px;background:#111"></div>
<div class="a" style="left:735px;top:728px;width:4px;height:1px;background:#111"></div>
<div class="a" style="left:735px;top:725px;width:1px;height:4px;background:#111"></div>
<div class="a" style="left:834px;top:728px;width:4px;height:1px;background:#111"></div>
<div class="a" style="left:837px;top:725px;width:1px;height:4px;background:#111"></div>
<div class="t" style="left:750px;top:709.1px;height:20px;line-height:20px;font-size:13.1px;color:#1c1c1c;">[[Total]*0.19]</div>
<div class="a" style="left:555px;top:738px;width:261px;height:1px;background:#111"></div>
<div class="a" style="left:555px;top:742px;width:4px;height:1px;background:#111"></div>
<div class="a" style="left:555px;top:742px;width:1px;height:4px;background:#111"></div>
<div class="a" style="left:684px;top:742px;width:4px;height:1px;background:#111"></div>
<div class="a" style="left:687px;top:742px;width:1px;height:4px;background:#111"></div>
<div class="a" style="left:555px;top:759px;width:4px;height:1px;background:#111"></div>
<div class="a" style="left:555px;top:756px;width:1px;height:4px;background:#111"></div>
<div class="a" style="left:684px;top:759px;width:4px;height:1px;background:#111"></div>
<div class="a" style="left:687px;top:756px;width:1px;height:4px;background:#111"></div>
<div class="a" style="left:735px;top:742px;width:4px;height:1px;background:#111"></div>
<div class="a" style="left:735px;top:742px;width:1px;height:4px;background:#111"></div>
<div class="a" style="left:834px;top:742px;width:4px;height:1px;background:#111"></div>
<div class="a" style="left:837px;top:742px;width:1px;height:4px;background:#111"></div>
<div class="a" style="left:735px;top:759px;width:4px;height:1px;background:#111"></div>
<div class="a" style="left:735px;top:756px;width:1px;height:4px;background:#111"></div>
<div class="a" style="left:834px;top:759px;width:4px;height:1px;background:#111"></div>
<div class="a" style="left:837px;top:756px;width:1px;height:4px;background:#111"></div>
<div class="t" style="left:559.8px;top:740.8px;height:20px;line-height:20px;font-size:12.73px;color:#1c1c1c;font-weight:bold;">Bruttosumme:</div>
<div class="t" style="left:765px;top:740.8px;height:20px;line-height:20px;font-size:12.72px;color:#1c1c1c;font-weight:bold;">[Total1]</div>
<div class="a" style="left:555px;top:761px;width:261px;height:1px;background:#000"></div>
<div class="a" style="left:555px;top:765px;width:261px;height:1px;background:#000"></div>
<div class="a" style="left:215px;top:790px;width:4px;height:1px;background:#111"></div>
<div class="a" style="left:215px;top:790px;width:1px;height:4px;background:#111"></div>
<div class="a" style="left:215px;top:835px;width:4px;height:1px;background:#111"></div>
<div class="a" style="left:215px;top:832px;width:1px;height:4px;background:#111"></div>
<div class="a" style="left:834px;top:790px;width:4px;height:1px;background:#111"></div>
<div class="a" style="left:837px;top:790px;width:1px;height:4px;background:#111"></div>
<div class="a" style="left:834px;top:835px;width:4px;height:1px;background:#111"></div>
<div class="a" style="left:837px;top:832px;width:1px;height:4px;background:#111"></div>
<div class="t" style="left:219.4px;top:792.2px;height:20px;line-height:20px;font-size:13.3px;color:#1c1c1c;">Wir hoffen, Ihnen sagt unser Angebot zu und würden uns über eine Beauftragung freuen.</div>
<div class="t" style="left:219.4px;top:807.8px;height:20px;line-height:20px;font-size:13.25px;color:#1c1c1c;">Gerne können Sie mit uns für Rückfragen Kontakt aufnehmen.</div>
<div class="a" style="left:215px;top:865px;width:4px;height:1px;background:#111"></div>
<div class="a" style="left:215px;top:865px;width:1px;height:4px;background:#111"></div>
<div class="a" style="left:799px;top:865px;width:4px;height:1px;background:#111"></div>
<div class="a" style="left:802px;top:865px;width:1px;height:4px;background:#111"></div>
<div class="a" style="left:215px;top:882px;width:4px;height:1px;background:#111"></div>
<div class="a" style="left:215px;top:879px;width:1px;height:4px;background:#111"></div>
<div class="a" style="left:799px;top:882px;width:4px;height:1px;background:#111"></div>
<div class="a" style="left:802px;top:879px;width:1px;height:4px;background:#111"></div>
<div class="t" style="left:218px;top:863.9px;height:20px;line-height:20px;font-size:13.1px;color:#1c1c1c;">Auftrag erteilt am:<span style="letter-spacing:0.62px"> ............................................</span></div>
<div class="a" style="left:215px;top:927px;width:4px;height:1px;background:#111"></div>
<div class="a" style="left:215px;top:927px;width:1px;height:4px;background:#111"></div>
<div class="a" style="left:799px;top:927px;width:4px;height:1px;background:#111"></div>
<div class="a" style="left:802px;top:927px;width:1px;height:4px;background:#111"></div>
<div class="a" style="left:894px;top:99px;width:14px;height:832px;background:linear-gradient(#4a4a4a,#2e2e2e 40%,#151515 75%,#111)"></div>
<div class="a" style="left:907px;top:99px;width:19px;height:832px;background:#454545"></div>
<div class="a" style="left:907px;top:99px;width:1px;height:832px;background:#5c5c5c"></div>
<div class="a" style="left:921px;top:99px;width:5px;height:832px;background:#3c3c3c"></div>
<svg style="left:910px;top:104px" width="12" height="7"><path d="M1 6L6 1l5 5z" fill="#a8a8a8"/></svg>
<svg style="left:910px;top:920px" width="12" height="7"><path d="M1 1h10L6 6z" fill="#a8a8a8"/></svg>
<div class="a" style="left:909px;top:118px;width:13px;height:690px;background:linear-gradient(90deg,#f8f8f8,#e6e6e8 50%,#c4c5c8);border:1px solid #2a2a2a;border-radius:2px"></div>
<div class="a" style="left:911px;top:459px;width:9px;height:1px;background:#7a7a7a"></div>
<div class="a" style="left:911px;top:461px;width:9px;height:1px;background:#7a7a7a"></div>
<div class="a" style="left:911px;top:463px;width:9px;height:1px;background:#7a7a7a"></div>
<div class="a" style="left:911px;top:465px;width:9px;height:1px;background:#7a7a7a"></div>
<div class="a" style="left:926px;top:75px;width:248px;height:400px;background:#fff"></div>
<div class="a" style="left:926px;top:75px;width:248px;height:45px;background:linear-gradient(#f0f1f3,#e2e4e8 40%,#d2d5da 70%,#bfc3ca)"></div>
<div class="t" style="left:931px;top:75px;height:20px;line-height:20px;font-size:10.7px;color:#4a4a4a;">Daten</div>
<svg style="left:1142px;top:80px" width="10" height="11"><path d="M2.5 0.5h5v6h-5z" fill="none" stroke="#222"/><path d="M0 6.5h10M5 7v4" stroke="#222"/><path d="M6 1v5" stroke="#222"/></svg>
<svg style="left:1160px;top:80px" width="9" height="9"><path d="M1 1l7 7M8 1l-7 7" stroke="#222" stroke-width="1.5"/></svg>
<div class="a" style="left:926px;top:119px;width:248px;height:1px;background:#a7abb2"></div>
<div class="t" style="left:932px;top:97px;height:20px;line-height:20px;font-size:10.7px;color:#141414;">Aktionen</div>
<svg style="left:985px;top:105px" width="7" height="4"><path d="M0 0h7l-3.5 4z" fill="#111"/></svg>
<svg style="left:999px;top:99px" width="17" height="15"><rect x="0.5" y="3.5" width="12" height="10" fill="#f6f6f6" stroke="#d0d2d6"/><path d="M3 7h6M3 10h6" stroke="#d0d2d6"/><path d="M9 9l6-7" stroke="#c9cbcf" stroke-width="2"/></svg>
<svg style="left:1023px;top:99px" width="16" height="16"><path d="M2 2l12 12M14 2L2 14" stroke="#cfd1d5" stroke-width="1.5"/></svg>
<svg style="left:1046px;top:99px" width="17" height="16"><rect x="0.5" y="0.5" width="13" height="11" fill="#f4f4f4" stroke="#d0d2d6"/><path d="M0 4h14M0 8h14M5 0v12M9 0v12" stroke="#d8dade"/><circle cx="13" cy="13" r="2.5" fill="#e1e3e6"/></svg>
<div class="a" style="left:938px;top:132px;width:1px;height:60px;background:repeating-linear-gradient(#8a8a8a 0 1px,transparent 1px 2px)"></div>
<div class="a" style="left:939px;top:128px;width:7px;height:1px;background:repeating-linear-gradient(90deg,#8a8a8a 0 1px,transparent 1px 2px)"></div>
<svg style="left:934px;top:124px" width="9" height="9"><rect x="0.5" y="0.5" width="8" height="8" fill="#fff" stroke="#8c97a8"/><path d="M2 4.5h5M4.5 2v5" stroke="#1d2a44"/></svg>
<div class="t" style="left:968px;top:118px;height:20px;line-height:20px;font-size:10.7px;color:#141414;">Datenquellen</div>
<div class="a" style="left:939px;top:144px;width:7px;height:1px;background:repeating-linear-gradient(90deg,#8a8a8a 0 1px,transparent 1px 2px)"></div>
<svg style="left:934px;top:140px" width="9" height="9"><rect x="0.5" y="0.5" width="8" height="8" fill="#fff" stroke="#8c97a8"/><path d="M2 4.5h5M4.5 2v5" stroke="#1d2a44"/></svg>
<div class="t" style="left:968px;top:134px;height:20px;line-height:20px;font-size:10.7px;color:#141414;">Systemvariablen</div>
<div class="a" style="left:939px;top:160px;width:7px;height:1px;background:repeating-linear-gradient(90deg,#8a8a8a 0 1px,transparent 1px 2px)"></div>
<svg style="left:934px;top:156px" width="9" height="9"><rect x="0.5" y="0.5" width="8" height="8" fill="#fff" stroke="#8c97a8"/><path d="M2 4.5h5M4.5 2v5" stroke="#1d2a44"/></svg>
<div class="t" style="left:968px;top:150px;height:20px;line-height:20px;font-size:10.7px;color:#141414;">Summe</div>
<div class="a" style="left:939px;top:176px;width:7px;height:1px;background:repeating-linear-gradient(90deg,#8a8a8a 0 1px,transparent 1px 2px)"></div>
<div class="t" style="left:968px;top:166px;height:20px;line-height:20px;font-size:10.7px;color:#141414;">Parameter</div>
<div class="a" style="left:939px;top:192px;width:7px;height:1px;background:repeating-linear-gradient(90deg,#8a8a8a 0 1px,transparent 1px 2px)"></div>
<svg style="left:934px;top:188px" width="9" height="9"><rect x="0.5" y="0.5" width="8" height="8" fill="#fff" stroke="#8c97a8"/><path d="M2 4.5h5M4.5 2v5" stroke="#1d2a44"/></svg>
<div class="t" style="left:968px;top:182px;height:20px;line-height:20px;font-size:10.7px;color:#141414;">Funktionen</div>
<svg style="left:948px;top:120px" width="14" height="16"><defs><linearGradient id="cyl" x1="0" x2="1"><stop offset="0" stop-color="#f7d56a"/><stop offset=".5" stop-color="#fbe9a8"/><stop offset="1" stop-color="#e2aa2a"/></linearGradient></defs><path d="M1 3.5v9a6 2.5 0 0 0 12 0v-9" fill="url(#cyl)" stroke="#c08a20"/><ellipse cx="7" cy="3.5" rx="6" ry="2.5" fill="#fdf2c8" stroke="#c08a20"/></svg>
<div class="t" style="left:948px;top:138px;width:15px;height:12px;background:#5f8fd0;color:#dce8f8;font-size:11px;line-height:11px;text-align:center;letter-spacing:-0.5px">var</div>
<div class="t" style="left:950px;top:151px;font-size:14px;color:#111;font-weight:bold;line-height:16px;font-family:Liberation Serif,serif">Σ</div>
<svg style="left:949px;top:167px" width="14" height="15"><path d="M3.5 1.5h-2v8h2" fill="none" stroke="#27457a" stroke-width="1.5"/><path d="M5.5 5.5h-2v9h2M10.5 5.5h2v9h-2" fill="none" stroke="#27457a" stroke-width="1.5"/><text x="8" y="13" font-size="8" font-weight="bold" text-anchor="middle" fill="#27457a" font-family="Liberation Sans">?</text></svg>
<div class="t" style="left:950px;top:183px;font-size:13px;color:#111;line-height:16px;font-family:Liberation Serif,serif;font-style:italic;font-weight:bold;letter-spacing:-1px">fx</div>
<div class="a" style="left:926px;top:475px;width:248px;height:28px;background:#535353"></div>
<div class="a" style="left:933px;top:475px;width:57px;height:22px;background:linear-gradient(#ffffff,#f2f3f5);border-radius:0 0 4px 4px"></div>
<svg style="left:937px;top:478px" width="14" height="16"><path d="M1 3.5v9a6 2.5 0 0 0 12 0v-9" fill="url(#cyl)" stroke="#c08a20"/><ellipse cx="7" cy="3.5" rx="6" ry="2.5" fill="#fdf2c8" stroke="#c08a20"/></svg>
<div class="t" style="left:954px;top:476px;height:20px;line-height:20px;font-size:10.7px;color:#1a1a1a;">Daten</div>
<div class="a" style="left:993px;top:475px;width:92px;height:22px;background:linear-gradient(#c6cad1,#dde0e5);border-radius:0 0 4px 4px"></div>
<svg style="left:998px;top:479px" width="13" height="14"><rect x="0.5" y="0.5" width="3" height="3" fill="#9cc0e8" stroke="#5e86b8"/><path d="M2 4v8h5M2 8h5" stroke="#777" fill="none"/><rect x="7.5" y="6.5" width="4" height="3" fill="#8fd07a" stroke="#4a9a36"/><rect x="7.5" y="10.5" width="4" height="3" fill="#8fd07a" stroke="#4a9a36"/></svg>
<div class="t" style="left:1014px;top:476px;height:20px;line-height:20px;font-size:10.7px;color:#333;">Berichtsbaum</div>
<div class="a" style="left:926px;top:503px;width:248px;height:454px;background:#d3d6db"></div>
<div class="a" style="left:926px;top:503px;width:248px;height:20px;background:linear-gradient(#f0f1f3,#e0e2e6 60%,#d6d9de)"></div>
<div class="t" style="left:931px;top:503px;height:20px;line-height:20px;font-size:10.7px;color:#4a4a4a;">Eigenschaften</div>
<svg style="left:1142px;top:508px" width="10" height="11"><path d="M2.5 0.5h5v6h-5z" fill="none" stroke="#222"/><path d="M0 6.5h10M5 7v4" stroke="#222"/><path d="M6 1v5" stroke="#222"/></svg>
<svg style="left:1160px;top:508px" width="9" height="9"><path d="M1 1l7 7M8 1l-7 7" stroke="#222" stroke-width="1.5"/></svg>
<div class="a" style="left:926px;top:523px;width:248px;height:20px;background:#fff;border-bottom:1px solid #b5b9c0"></div>
<div class="t" style="left:932px;top:523.5px;height:20px;line-height:20px;font-size:10.7px;color:#111;"><b style="letter-spacing:0.3px">Page1</b>&nbsp; ReportPage</div>
<div class="a" style="left:1156px;top:525px;width:15px;height:16px;background:linear-gradient(#fafafa,#e2e4e7);border:1px solid #8e939b"></div>
<svg style="left:1160px;top:532px" width="7" height="4"><path d="M0 0h7l-3.5 4z" fill="#111"/></svg>
<div class="a" style="left:926px;top:543px;width:248px;height:26px;background:linear-gradient(#dfe1e5,#cfd2d8 50%,#bcc0c7)"></div>
<div class="a" style="left:926px;top:568px;width:248px;height:1px;background:#9ea2a9"></div>
<svg style="left:929px;top:548px" width="18" height="16"><rect x="0.5" y="1.5" width="5" height="5" fill="#fff" stroke="#333"/><path d="M1.5 4h3M3 2.5v3" stroke="#111"/><rect x="0.5" y="9.5" width="5" height="5" fill="#fff" stroke="#333"/><path d="M1.5 12h3" stroke="#111"/><g stroke="#8c96a8" stroke-dasharray="1 1"><path d="M7 2.5h9M7 5.5h9M7 10.5h9M7 13.5h9"/></g></svg>
<svg style="left:953px;top:546px" width="18" height="20"><text x="4" y="8" font-size="8" font-weight="bold" fill="#3a66b0" text-anchor="middle" font-family="Liberation Serif">A</text><text x="4" y="17" font-size="8" font-weight="bold" fill="#b04a3a" text-anchor="middle" font-family="Liberation Serif">Z</text><path d="M12 2v14M9.5 13l2.5 3.5 2.5-3.5" stroke="#111" fill="none" stroke-width="1.2"/></svg>
<div class="a" style="left:978px;top:545px;width:23px;height:23px;background:linear-gradient(#fde7a8,#fbd36b 50%,#f8c14a);border:1px solid #d9a84a;border-radius:2px"></div>
<svg style="left:982px;top:549px" width="15" height="14"><rect x="0.5" y="0.5" width="13" height="12" fill="#fff" stroke="#333"/><path d="M3 3.5h1M5 3.5h6M3 6.5h1M5 6.5h6M3 9.5h1M5 9.5h6" stroke="#3a3a6a"/></svg>
<svg style="left:1006px;top:548px" width="14" height="16"><path d="M9 1L2 9h4l-2 6 8-8H8z" fill="#f5c54e" stroke="#d39a28" stroke-width=".8"/></svg>
<div class="a" style="left:926px;top:571px;width:230px;height:324px;overflow:hidden;background:#d3d6db">
<div class="a" style="left:22px;top:0px;width:90px;height:15px;background:#d3d6db"></div>
<div class="a" style="left:113px;top:0px;width:117px;height:15px;background:#fff"></div>
<div class="a" style="left:22px;top:15px;width:208px;height:1px;background:#d6d8dc"></div>
<div class="t" style="left:25px;top:1px;width:87px;overflow:hidden;line-height:15px;font-size:10.6px;color:#111">(Name)</div>
<div class="t" style="left:115.5px;top:1px;line-height:15px;font-size:10.6px;color:#111;font-weight:bold;letter-spacing:0.6px;">Page1</div>
<div class="a" style="left:22px;top:16px;width:90px;height:15px;background:#fff"></div>
<div class="a" style="left:113px;top:16px;width:117px;height:15px;background:#fff"></div>
<div class="a" style="left:22px;top:31px;width:208px;height:1px;background:#d6d8dc"></div>
<div class="t" style="left:25px;top:17px;width:87px;overflow:hidden;line-height:15px;font-size:10.6px;color:#111">BackPage</div>
<div class="t" style="left:115.5px;top:17px;line-height:15px;font-size:10.6px;color:#111;">False</div>
<div class="a" style="left:22px;top:32px;width:90px;height:15px;background:#fff"></div>
<div class="a" style="left:113px;top:32px;width:117px;height:15px;background:#fff"></div>
<div class="a" style="left:22px;top:47px;width:208px;height:1px;background:#d6d8dc"></div>
<div class="t" style="left:25px;top:33px;width:87px;overflow:hidden;line-height:15px;font-size:10.6px;color:#111">Border</div>
<div class="t" style="left:115.5px;top:33px;line-height:15px;font-size:10.6px;color:#111;">(Border)</div>
<svg style="left:8px;top:36px" width="6" height="8"><path d="M1 0.5l4 3.5-4 3.5" fill="none" stroke="#7a7e85" stroke-width="1.2"/></svg>
<div class="a" style="left:22px;top:48px;width:90px;height:15px;background:#fff"></div>
<div class="a" style="left:113px;top:48px;width:117px;height:15px;background:#fff"></div>
<div class="a" style="left:22px;top:63px;width:208px;height:1px;background:#d6d8dc"></div>
<div class="t" style="left:25px;top:49px;width:87px;overflow:hidden;line-height:15px;font-size:10.6px;color:#111">BottomMargin</div>
<div class="t" style="left:115.5px;top:49px;line-height:15px;font-size:10.6px;color:#111;font-weight:bold;letter-spacing:0.6px;">1 cm</div>
<div class="a" style="left:22px;top:64px;width:90px;height:15px;background:#fff"></div>
<div class="a" style="left:113px;top:64px;width:117px;height:15px;background:#fff"></div>
<div class="a" style="left:22px;top:79px;width:208px;height:1px;background:#d6d8dc"></div>
<div class="t" style="left:25px;top:65px;width:87px;overflow:hidden;line-height:15px;font-size:10.6px;color:#111">Columns</div>
<div class="t" style="left:115.5px;top:65px;line-height:15px;font-size:10.6px;color:#111;">(PageColumns)</div>
<svg style="left:8px;top:68px" width="6" height="8"><path d="M1 0.5l4 3.5-4 3.5" fill="none" stroke="#7a7e85" stroke-width="1.2"/></svg>
<div class="a" style="left:22px;top:80px;width:90px;height:15px;background:#fff"></div>
<div class="a" style="left:113px;top:80px;width:117px;height:15px;background:#fff"></div>
<div class="a" style="left:22px;top:95px;width:208px;height:1px;background:#d6d8dc"></div>
<div class="t" style="left:25px;top:81px;width:87px;overflow:hidden;line-height:15px;font-size:10.6px;color:#111">Duplex</div>
<div class="t" style="left:115.5px;top:81px;line-height:15px;font-size:10.6px;color:#111;">Default</div>
<div class="a" style="left:22px;top:96px;width:90px;height:15px;background:#fff"></div>
<div class="a" style="left:113px;top:96px;width:117px;height:15px;background:#fff"></div>
<div class="a" style="left:22px;top:111px;width:208px;height:1px;background:#d6d8dc"></div>
<div class="t" style="left:25px;top:97px;width:87px;overflow:hidden;line-height:15px;font-size:10.6px;color:#111">ExtraDesignWidth</div>
<div class="t" style="left:115.5px;top:97px;line-height:15px;font-size:10.6px;color:#111;">False</div>
<div class="a" style="left:22px;top:112px;width:90px;height:15px;background:#fff"></div>
<div class="a" style="left:113px;top:112px;width:117px;height:15px;background:#fff"></div>
<div class="a" style="left:22px;top:127px;width:208px;height:1px;background:#d6d8dc"></div>
<div class="t" style="left:25px;top:113px;width:87px;overflow:hidden;line-height:15px;font-size:10.6px;color:#111">Fill</div>
<div class="t" style="left:115.5px;top:113px;line-height:15px;font-size:10.6px;color:#111;">Solid</div>
<svg style="left:8px;top:116px" width="6" height="8"><path d="M1 0.5l4 3.5-4 3.5" fill="none" stroke="#7a7e85" stroke-width="1.2"/></svg>
<div class="a" style="left:22px;top:128px;width:90px;height:15px;background:#fff"></div>
<div class="a" style="left:113px;top:128px;width:117px;height:15px;background:#fff"></div>
<div class="a" style="left:22px;top:143px;width:208px;height:1px;background:#d6d8dc"></div>
<div class="t" style="left:25px;top:129px;width:87px;overflow:hidden;line-height:15px;font-size:10.6px;color:#111">FirstPageSource</div>
<div class="t" style="left:115.5px;top:129px;line-height:15px;font-size:10.6px;color:#111;">7</div>
<div class="a" style="left:22px;top:144px;width:90px;height:15px;background:#fff"></div>
<div class="a" style="left:113px;top:144px;width:117px;height:15px;background:#fff"></div>
<div class="a" style="left:22px;top:159px;width:208px;height:1px;background:#d6d8dc"></div>
<div class="t" style="left:25px;top:145px;width:87px;overflow:hidden;line-height:15px;font-size:10.6px;color:#111">Landscape</div>
<div class="t" style="left:115.5px;top:145px;line-height:15px;font-size:10.6px;color:#111;">False</div>
<div class="a" style="left:22px;top:160px;width:90px;height:15px;background:#fff"></div>
<div class="a" style="left:113px;top:160px;width:117px;height:15px;background:#fff"></div>
<div class="a" style="left:22px;top:175px;width:208px;height:1px;background:#d6d8dc"></div>
<div class="t" style="left:25px;top:161px;width:87px;overflow:hidden;line-height:15px;font-size:10.6px;color:#111">LeftMargin</div>
<div class="t" style="left:115.5px;top:161px;line-height:15px;font-size:10.6px;color:#111;font-weight:bold;letter-spacing:0.6px;">1 cm</div>
<div class="a" style="left:22px;top:176px;width:90px;height:15px;background:#fff"></div>
<div class="a" style="left:113px;top:176px;width:117px;height:15px;background:#fff"></div>
<div class="a" style="left:22px;top:191px;width:208px;height:1px;background:#d6d8dc"></div>
<div class="t" style="left:25px;top:177px;width:87px;overflow:hidden;line-height:15px;font-size:10.6px;color:#111">MirrorMargins</div>
<div class="t" style="left:115.5px;top:177px;line-height:15px;font-size:10.6px;color:#111;">False</div>
<div class="a" style="left:22px;top:192px;width:90px;height:15px;background:#fff"></div>
<div class="a" style="left:113px;top:192px;width:117px;height:15px;background:#fff"></div>
<div class="a" style="left:22px;top:207px;width:208px;height:1px;background:#d6d8dc"></div>
<div class="t" style="left:25px;top:193px;width:87px;overflow:hidden;line-height:15px;font-size:10.6px;color:#111">OtherPagesSource</div>
<div class="t" style="left:115.5px;top:193px;line-height:15px;font-size:10.6px;color:#111;">7</div>
<div class="a" style="left:22px;top:208px;width:90px;height:15px;background:#fff"></div>
<div class="a" style="left:113px;top:208px;width:117px;height:15px;background:#fff"></div>
<div class="a" style="left:22px;top:223px;width:208px;height:1px;background:#d6d8dc"></div>
<div class="t" style="left:25px;top:209px;width:87px;overflow:hidden;line-height:15px;font-size:10.6px;color:#111">OutlineExpression</div>
<div class="t" style="left:115.5px;top:209px;line-height:15px;font-size:10.6px;color:#111;"></div>
<div class="a" style="left:22px;top:224px;width:90px;height:15px;background:#fff"></div>
<div class="a" style="left:113px;top:224px;width:117px;height:15px;background:#fff"></div>
<div class="a" style="left:22px;top:239px;width:208px;height:1px;background:#d6d8dc"></div>
<div class="t" style="left:25px;top:225px;width:87px;overflow:hidden;line-height:15px;font-size:10.6px;color:#111">PaperHeight</div>
<div class="t" style="left:115.5px;top:225px;line-height:15px;font-size:10.6px;color:#111;font-weight:bold;letter-spacing:0.6px;">29,7 cm</div>
<div class="a" style="left:22px;top:240px;width:90px;height:15px;background:#fff"></div>
<div class="a" style="left:113px;top:240px;width:117px;height:15px;background:#fff"></div>
<div class="a" style="left:22px;top:255px;width:208px;height:1px;background:#d6d8dc"></div>
<div class="t" style="left:25px;top:241px;width:87px;overflow:hidden;line-height:15px;font-size:10.6px;color:#111">PaperWidth</div>
<div class="t" style="left:115.5px;top:241px;line-height:15px;font-size:10.6px;color:#111;font-weight:bold;letter-spacing:0.6px;">21 cm</div>
<div class="a" style="left:22px;top:256px;width:90px;height:15px;background:#fff"></div>
<div class="a" style="left:113px;top:256px;width:117px;height:15px;background:#fff"></div>
<div class="a" style="left:22px;top:271px;width:208px;height:1px;background:#d6d8dc"></div>
<div class="t" style="left:25px;top:257px;width:87px;overflow:hidden;line-height:15px;font-size:10.6px;color:#111">PrintOnPreviousPage</div>
<div class="t" style="left:115.5px;top:257px;line-height:15px;font-size:10.6px;color:#111;">False</div>
<div class="a" style="left:22px;top:272px;width:90px;height:15px;background:#fff"></div>
<div class="a" style="left:113px;top:272px;width:117px;height:15px;background:#fff"></div>
<div class="a" style="left:22px;top:287px;width:208px;height:1px;background:#d6d8dc"></div>
<div class="t" style="left:25px;top:273px;width:87px;overflow:hidden;line-height:15px;font-size:10.6px;color:#111">RawPaperSize</div>
<div class="t" style="left:115.5px;top:273px;line-height:15px;font-size:10.6px;color:#111;">0</div>
<div class="a" style="left:22px;top:288px;width:90px;height:15px;background:#fff"></div>
<div class="a" style="left:113px;top:288px;width:117px;height:15px;background:#fff"></div>
<div class="a" style="left:22px;top:303px;width:208px;height:1px;background:#d6d8dc"></div>
<div class="t" style="left:25px;top:289px;width:87px;overflow:hidden;line-height:15px;font-size:10.6px;color:#111">ResetPageNumber</div>
<div class="t" style="left:115.5px;top:289px;line-height:15px;font-size:10.6px;color:#111;">False</div>
<div class="a" style="left:22px;top:304px;width:90px;height:15px;background:#fff"></div>
<div class="a" style="left:113px;top:304px;width:117px;height:15px;background:#fff"></div>
<div class="a" style="left:22px;top:319px;width:208px;height:1px;background:#d6d8dc"></div>
<div class="t" style="left:25px;top:305px;width:87px;overflow:hidden;line-height:15px;font-size:10.6px;color:#111">RightMargin</div>
<div class="t" style="left:115.5px;top:305px;line-height:15px;font-size:10.6px;color:#111;font-weight:bold;letter-spacing:0.6px;">1 cm</div>
<div class="a" style="left:22px;top:320px;width:90px;height:15px;background:#fff"></div>
<div class="a" style="left:113px;top:320px;width:117px;height:15px;background:#fff"></div>
<div class="a" style="left:22px;top:335px;width:208px;height:1px;background:#d6d8dc"></div>
<div class="t" style="left:25px;top:321px;width:87px;overflow:hidden;line-height:15px;font-size:10.6px;color:#111">ReportPageSize</div>
<div class="t" style="left:115.5px;top:321px;line-height:15px;font-size:10.6px;color:#111;">A4</div>
<div class="a" style="left:112px;top:0;width:1px;height:325px;background:#d6d8dc"></div>
</div>
<div class="a" style="left:1156px;top:570px;width:16px;height:325px;background:#e3e5e8"></div>
<div class="a" style="left:1156px;top:570px;width:16px;height:17px;background:#eceef0"></div>
<svg style="left:1159px;top:575px" width="10" height="6"><path d="M1 5l4-4 4 4" fill="none" stroke="#444" stroke-width="1.5"/></svg>
<div class="a" style="left:1156px;top:587px;width:16px;height:233px;background:#c4c7cc"></div>
<svg style="left:1159px;top:882px" width="10" height="6"><path d="M1 1l4 4 4-4" fill="none" stroke="#444" stroke-width="1.5"/></svg>
<div class="a" style="left:926px;top:895px;width:248px;height:4px;background:#c0c3c9;border-top:1px solid #a0a4ab"></div>
<div class="a" style="left:926px;top:899px;width:248px;height:58px;background:#d4d6db"></div>
<div class="t" style="left:932px;top:899px;height:20px;line-height:20px;font-size:10.7px;color:#111;font-weight:bold;">(Name)</div>
<div class="a" style="left:27px;top:931px;width:899px;height:26px;background:#535353"></div>
<div class="a" style="left:34px;top:931px;width:53px;height:22px;background:linear-gradient(#c7cbd2,#dfe2e6);border-radius:0 0 4px 4px"></div>
<svg style="left:37px;top:934px" width="14" height="14"><rect x="0.5" y="0.5" width="13" height="13" fill="#fff" stroke="#555"/><path d="M3 3.5h4M5 6.5h6M3 9.5h5" stroke="#1d3f8a"/></svg>
<div class="t" style="left:55px;top:932px;height:20px;line-height:20px;font-size:10.7px;color:#333;">Code</div>
<div class="a" style="left:90px;top:931px;width:59px;height:22px;background:linear-gradient(#ffffff,#f2f3f5);border-radius:0 0 4px 4px"></div>
<svg style="left:94px;top:934px" width="12" height="15"><rect x="0.5" y="0.5" width="11" height="14" fill="#e6eaf2" stroke="#6e7580"/></svg>
<div class="t" style="left:112px;top:932px;height:20px;line-height:20px;font-size:10.7px;color:#1a1a1a;">Page1</div>
<div class="a" style="left:0px;top:957px;width:1174px;height:27px;background:#393939"></div>
<div class="a" style="left:0px;top:957px;width:1174px;height:10px;background:#444"></div>
<div class="t" style="left:3px;top:960px;height:20px;line-height:20px;font-size:10.7px;color:#f0f0f0;">Page1</div>
<div class="a" style="left:926px;top:959px;width:248px;height:25px;background:linear-gradient(#d3d6db,#b4b8bf 60%,#9ea2a9)"></div>
<div class="a" style="left:931px;top:961px;width:17px;height:19px;background:linear-gradient(#fff,#e6e9ee);border:1px solid #c5c8ce"></div>
<svg style="left:933px;top:963px" width="14" height="14"><rect x="1.5" y="1.5" width="11" height="11" fill="#e6eef8" stroke="#27457a"/><path d="M4 4.5h6M4 7h6M4 9.5h6" stroke="#27457a"/><path d="M0 7l3-2v4z" fill="#27457a"/></svg>
<svg style="left:955px;top:963px" width="14" height="14"><rect x="1.5" y="0.5" width="10" height="13" fill="#c8d6ee" stroke="#27457a"/><path d="M4 4h5M4 7h5M4 10h5" stroke="#27457a"/></svg>
<div class="a" style="left:976px;top:961px;width:20px;height:20px;background:linear-gradient(#eef0f3,#dfe2e6)"></div>
<svg style="left:978px;top:963px" width="16" height="16"><rect x="0.5" y="0.5" width="15" height="15" fill="#fff" stroke="#555"/><path d="M3 3.5h10M3 6h10M3 8.5h10M3 11h10M3 13.5h10" stroke="#333" stroke-width="1"/></svg>
<div class="t" style="left:1002px;top:961px;height:20px;line-height:20px;font-size:11.5px;color:#ffffff;">100%</div>
<div class="a" style="left:1052px;top:970px;width:88px;height:1px;background:#555"></div>
<svg style="left:1036px;top:962px" width="17" height="17"><circle cx="8.5" cy="8.5" r="7.5" fill="#dcdfe4" stroke="#6a6e75"/><path d="M4.5 8.5h8" stroke="#333" stroke-width="2"/></svg>
<svg style="left:1089px;top:962px" width="10" height="15"><path d="M1.5 0.5h7v9l-3.5 4.5-3.5-4.5z" fill="#e9ebee" stroke="#6a6e75"/></svg>
<svg style="left:1138px;top:962px" width="17" height="17"><circle cx="8.5" cy="8.5" r="7.5" fill="#dcdfe4" stroke="#6a6e75"/><path d="M4.5 8.5h8M8.5 4.5v8" stroke="#333" stroke-width="2"/></svg>
<svg style="left:1161px;top:971px" width="12" height="12"><g fill="#fff"><rect x="9" y="1" width="2" height="2"/><rect x="6" y="4" width="2" height="2"/><rect x="9" y="4" width="2" height="2"/><rect x="3" y="7" width="2" height="2"/><rect x="6" y="7" width="2" height="2"/><rect x="9" y="7" width="2" height="2"/></g></svg>
<div class="a" style="left:1172px;top:75px;width:2px;height:882px;background:#4a4a4a"></div>
</body></html>
